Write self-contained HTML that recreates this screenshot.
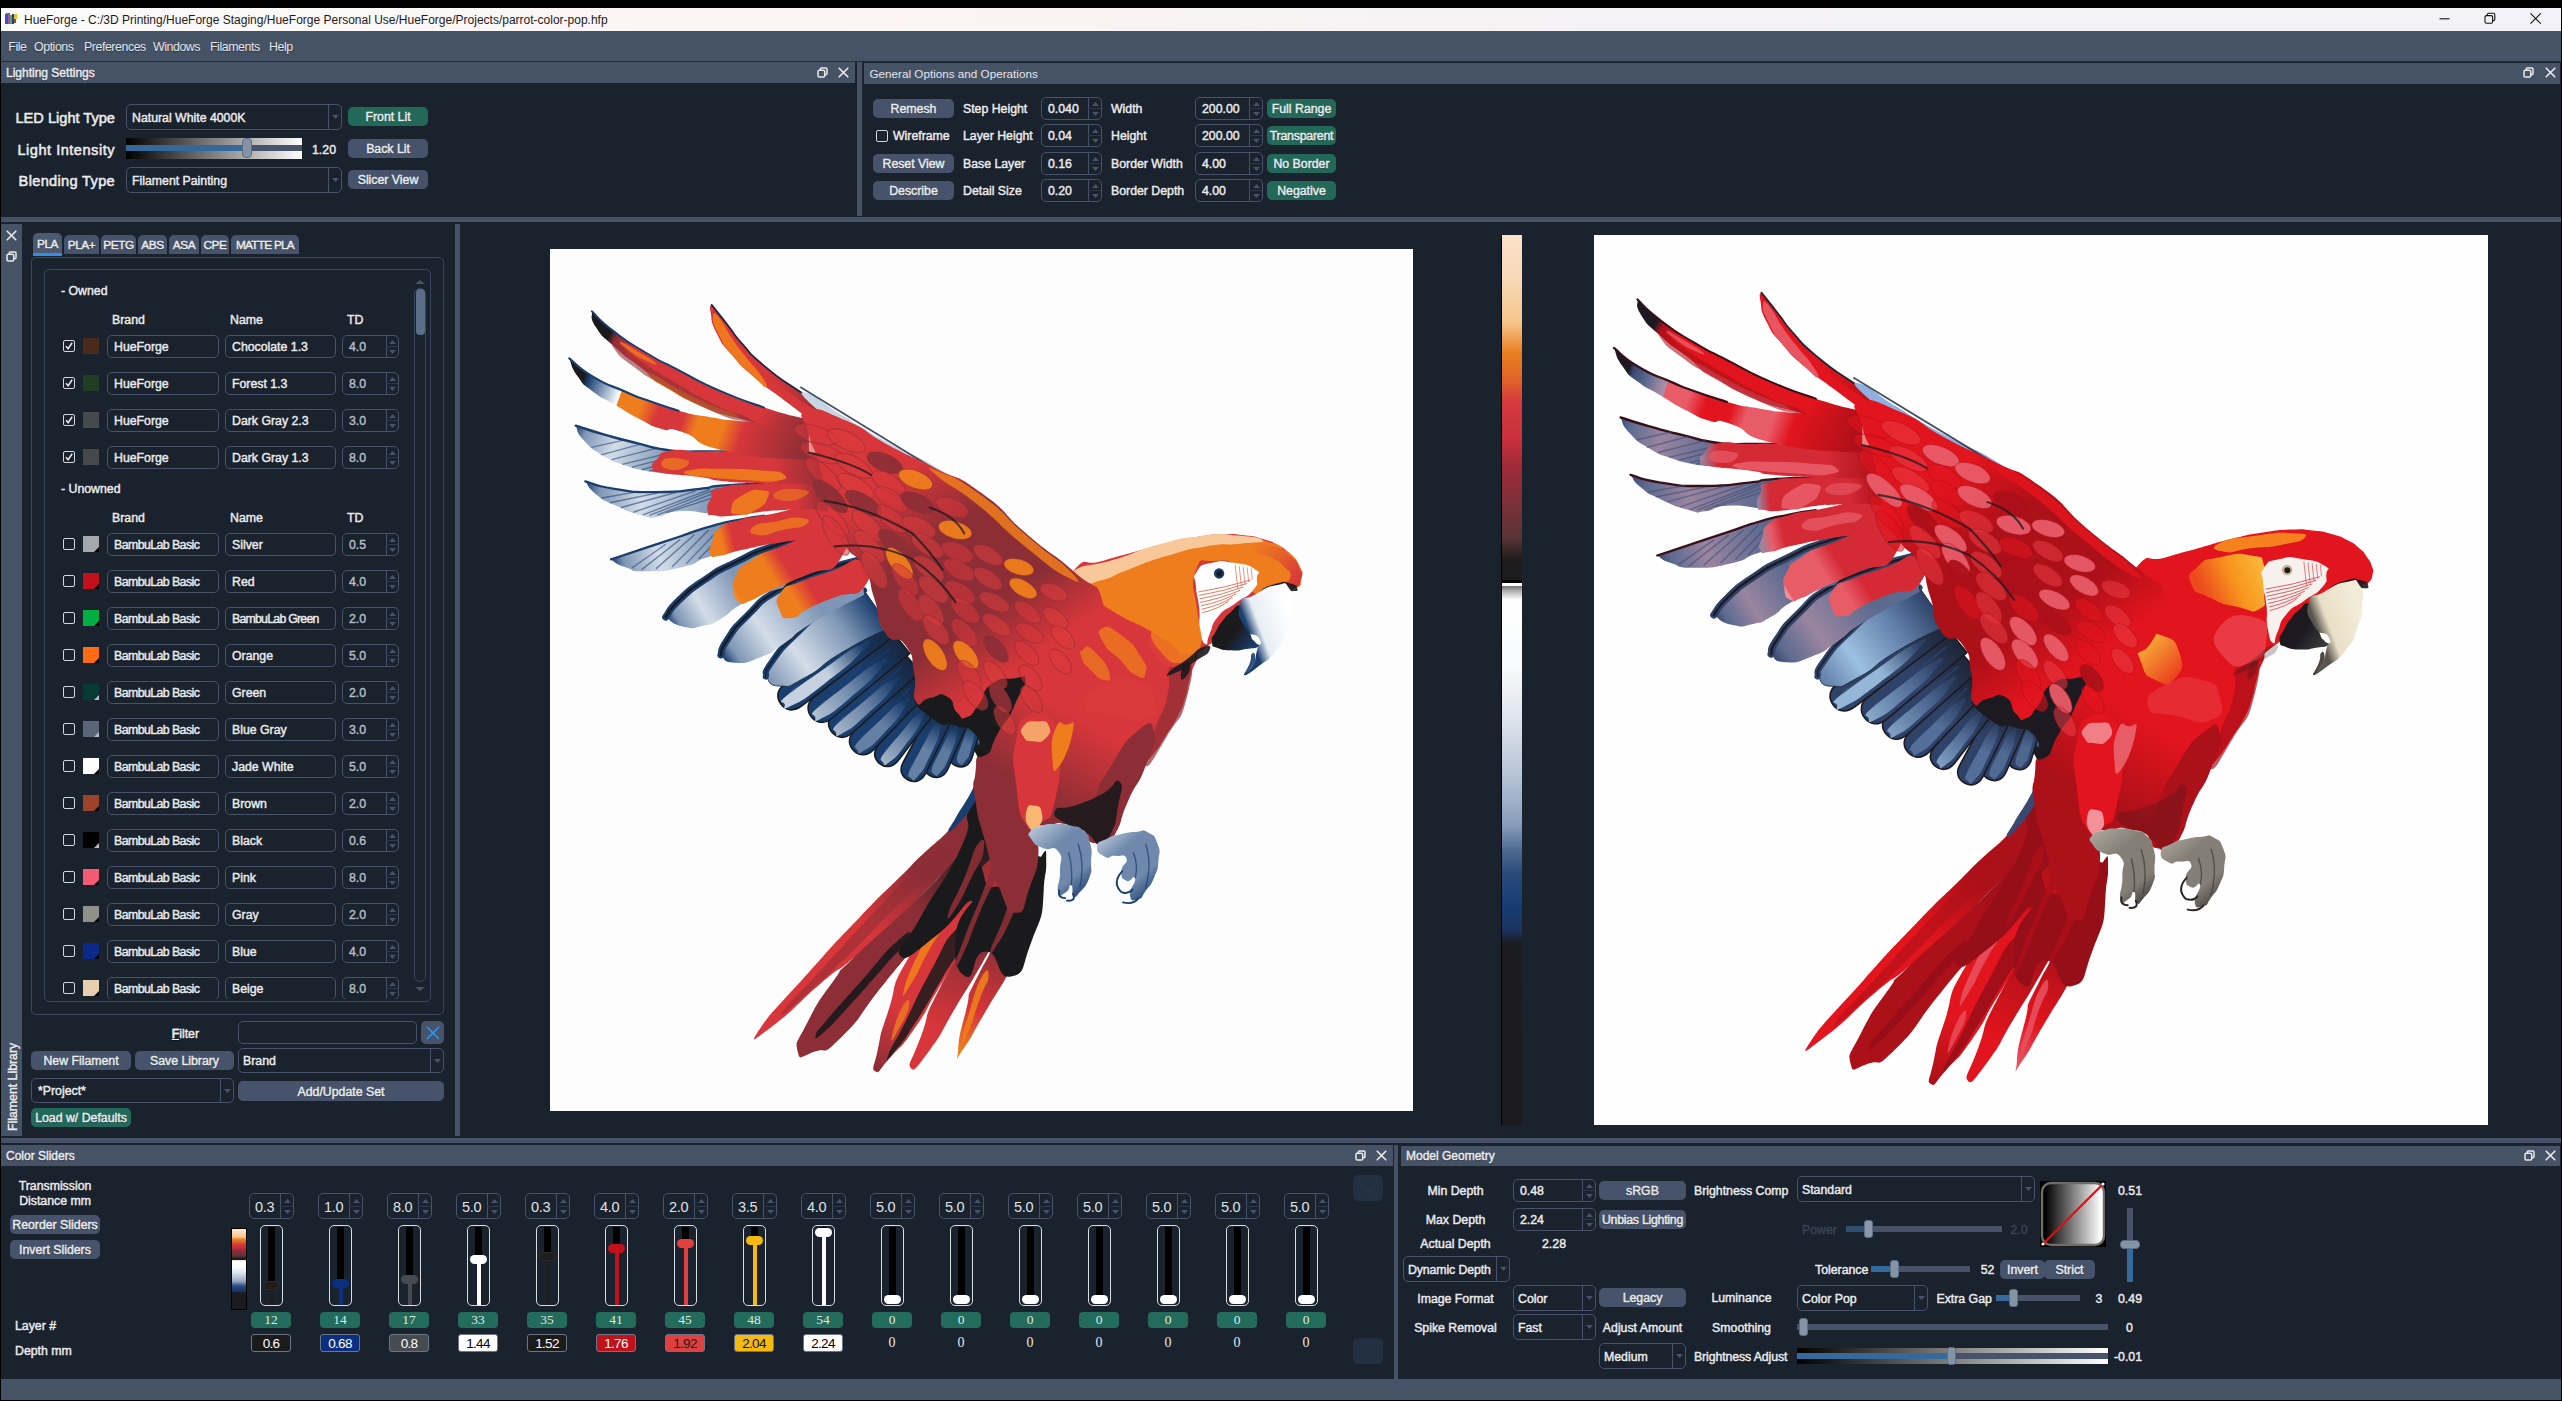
<!DOCTYPE html>
<html><head><meta charset="utf-8"><title>HueForge</title>
<style>
html,body{margin:0;padding:0;background:#000;}
body{width:2562px;height:1401px;position:relative;overflow:hidden;font-family:"Liberation Sans",sans-serif;font-size:12.3px;color:#e9ebee;}
.a{position:absolute;box-sizing:border-box;}
.t{white-space:nowrap;overflow:visible;}
.sb{-webkit-text-stroke:0.45px currentColor;text-shadow:0 1px 1px rgba(0,0,0,.55);}
.rg{font-weight:400;}
.btn{border-radius:5px;text-align:center;}
.big{font-size:14.6px;-webkit-text-stroke:0.55px currentColor;text-shadow:0 1px 1px rgba(0,0,0,.6);}
.serif{font-family:"Liberation Serif",serif;font-size:14px;}
.dim{color:#aab3c0;}
</style></head><body>

<div class="a " style="left:1px;top:8px;width:2560px;height:23px;background:linear-gradient(90deg,#fbfbfb 0%,#fbf4f2 35%,#f4f2f6 70%,#f2f2f8 100%);"></div>
<svg class="a" style="left:5px;top:13px" width="13" height="13" viewBox="0 0 13 13"><rect x="0" y="1" width="3" height="10" fill="#3a52c8"/><rect x="3" y="1" width="2" height="10" fill="#c93cc0"/><rect x="5" y="2" width="2" height="9" fill="#3bb54a"/><rect x="7" y="1" width="2" height="10" fill="#2a3a9a"/><rect x="9" y="1" width="3" height="5" fill="#e8c028"/><rect x="9" y="6" width="2" height="4" fill="#7a5a2a"/><rect x="1" y="0" width="4" height="2" fill="#6a6a7a"/></svg>
<div class="a t rg" style="left:24px;top:9px;width:700px;height:23px;line-height:23px;text-align:left;font-size:12px;color:#1b1b1b;">HueForge - C:/3D Printing/HueForge Staging/HueForge Personal Use/HueForge/Projects/parrot-color-pop.hfp</div>
<svg class="a" style="left:2439px;top:12px" width="110" height="14" viewBox="0 0 110 14" fill="none" stroke="#111" stroke-width="1.1"><path d="M0.5 6.8H10.5"/><path d="M48.3 3.8V2.6Q48.3 1.2 49.7 1.2H54.2Q55.8 1.2 55.8 2.8V7.2Q55.8 8.6 54.4 8.6H53.6"/><rect x="46" y="3.6" width="7.6" height="7.6" rx="1.5"/><path d="M91.5 1.3L101.8 11.6M101.8 1.3L91.5 11.6"/></svg>
<div class="a " style="left:1px;top:31px;width:2560px;height:31px;background:#465266;border-bottom:1px solid #232c39;"></div>
<div class="a t rg" style="left:8.3px;top:33px;width:80px;height:29px;line-height:29px;text-align:left;font-size:12.4px;letter-spacing:-0.45px;color:#e3e6ea;text-shadow:0 1px 1px rgba(0,0,0,.4);">File</div>
<div class="a t rg" style="left:34px;top:33px;width:80px;height:29px;line-height:29px;text-align:left;font-size:12.4px;letter-spacing:-0.45px;color:#e3e6ea;text-shadow:0 1px 1px rgba(0,0,0,.4);">Options</div>
<div class="a t rg" style="left:84px;top:33px;width:80px;height:29px;line-height:29px;text-align:left;font-size:12.4px;letter-spacing:-0.45px;color:#e3e6ea;text-shadow:0 1px 1px rgba(0,0,0,.4);">Preferences</div>
<div class="a t rg" style="left:153px;top:33px;width:80px;height:29px;line-height:29px;text-align:left;font-size:12.4px;letter-spacing:-0.45px;color:#e3e6ea;text-shadow:0 1px 1px rgba(0,0,0,.4);">Windows</div>
<div class="a t rg" style="left:210px;top:33px;width:80px;height:29px;line-height:29px;text-align:left;font-size:12.4px;letter-spacing:-0.45px;color:#e3e6ea;text-shadow:0 1px 1px rgba(0,0,0,.4);">Filaments</div>
<div class="a t rg" style="left:269px;top:33px;width:80px;height:29px;line-height:29px;text-align:left;font-size:12.4px;letter-spacing:-0.45px;color:#e3e6ea;text-shadow:0 1px 1px rgba(0,0,0,.4);">Help</div>
<div class="a " style="left:1px;top:62px;width:2560px;height:1317px;background:#1a222d;"></div>
<div class="a " style="left:1px;top:62px;width:854px;height:21px;background:#465266;"></div>
<div class="a t sb" style="left:6px;top:63px;width:200px;height:21px;line-height:21px;text-align:left;font-size:12px;">Lighting Settings</div>
<svg class="a" style="left:817.0px;top:66.5px" width="11" height="11" viewBox="0 0 11 11" fill="none" stroke="#e9ebee" stroke-width="1.5"><path d="M3.2 3.2V2.2Q3.2 1 4.4 1H8.8Q10 1 10 2.2V6.6Q10 7.8 8.8 7.8H7.8"/><rect x="1" y="3.3" width="6.7" height="6.7" rx="1.3"/></svg>
<svg class="a" style="left:838.0px;top:66.5px" width="11" height="11" viewBox="0 0 11 11" fill="none" stroke="#e9ebee" stroke-width="1.6" stroke-linecap="round"><path d="M1.2 1.2L9.8 9.8M9.8 1.2L1.2 9.8"/></svg>
<div class="a t big" style="left:15px;top:105px;width:100px;height:26px;line-height:26px;text-align:right;">LED Light Type</div>
<div class="a t big" style="left:5px;top:137px;width:110px;height:26px;line-height:26px;text-align:right;letter-spacing:0.5px;">Light Intensity</div>
<div class="a t big" style="left:5px;top:168px;width:110px;height:26px;line-height:26px;text-align:right;letter-spacing:0.32px;">Blending Type</div>
<div class="a " style="left:126px;top:104px;width:216px;height:26px;border:1px solid #46536a;border-radius:5px;box-sizing:border-box;"></div>
<div class="a " style="left:328px;top:105px;width:1px;height:24px;background:#46536a;"></div>
<svg class="a" style="left:331.5px;top:115.0px" width="7" height="4" viewBox="0 0 7 4"><path d="M0 0L3.5 4L7 0Z" fill="#46536a"/></svg>
<div class="a t sb" style="left:132px;top:105px;width:196px;height:26px;line-height:26px;text-align:left;letter-spacing:0px;">Natural White 4000K</div>
<div class="a " style="left:126px;top:167px;width:216px;height:26px;border:1px solid #46536a;border-radius:5px;box-sizing:border-box;"></div>
<div class="a " style="left:328px;top:168px;width:1px;height:24px;background:#46536a;"></div>
<svg class="a" style="left:331.5px;top:178.0px" width="7" height="4" viewBox="0 0 7 4"><path d="M0 0L3.5 4L7 0Z" fill="#46536a"/></svg>
<div class="a t sb" style="left:132px;top:168px;width:196px;height:26px;line-height:26px;text-align:left;">Filament Painting</div>
<div class="a t sb btn" style="left:348px;top:107px;width:80px;height:19px;line-height:21px;background:#22695a;">Front Lit</div>
<div class="a t sb btn" style="left:348px;top:139px;width:80px;height:19px;line-height:21px;background:#46536a;">Back Lit</div>
<div class="a t sb btn" style="left:348px;top:170px;width:80px;height:19px;line-height:21px;background:#46536a;">Slicer View</div>
<div class="a " style="left:126px;top:138px;width:176px;height:21px;background:linear-gradient(90deg,#000 0%,#fff 100%);"></div>
<div class="a " style="left:126px;top:145px;width:176px;height:6px;background:#46536a;"></div>
<div class="a " style="left:126px;top:145px;width:121px;height:6px;background:#36699b;"></div>
<div class="a " style="left:242px;top:138px;width:10px;height:20px;background:#8493a6;border:1px solid #5d6f87;border-radius:4px;"></div>
<div class="a t sb" style="left:306px;top:140px;width:36px;height:20px;line-height:20px;text-align:center;">1.20</div>
<div class="a " style="left:857px;top:62px;width:5px;height:154px;background:#465266;"></div>
<div class="a " style="left:864px;top:63px;width:1696px;height:21px;background:#465266;"></div>
<div class="a t rg" style="left:869.5px;top:63px;width:300px;height:21px;line-height:21px;text-align:left;font-size:11.7px;color:#e3e6ea;">General Options and Operations</div>
<svg class="a" style="left:2523.0px;top:67.0px" width="11" height="11" viewBox="0 0 11 11" fill="none" stroke="#e9ebee" stroke-width="1.5"><path d="M3.2 3.2V2.2Q3.2 1 4.4 1H8.8Q10 1 10 2.2V6.6Q10 7.8 8.8 7.8H7.8"/><rect x="1" y="3.3" width="6.7" height="6.7" rx="1.3"/></svg>
<svg class="a" style="left:2544.5px;top:67.0px" width="11" height="11" viewBox="0 0 11 11" fill="none" stroke="#e9ebee" stroke-width="1.6" stroke-linecap="round"><path d="M1.2 1.2L9.8 9.8M9.8 1.2L1.2 9.8"/></svg>
<div class="a t sb btn" style="left:873px;top:99px;width:81px;height:19px;line-height:21px;background:#46536a;">Remesh</div>
<div class="a " style="left:876px;top:130px;width:12px;height:12px;border:1.5px solid #d4d8de;border-radius:2px;"></div>
<div class="a t sb" style="left:893px;top:127px;width:70px;height:19px;line-height:19px;text-align:left;">Wireframe</div>
<div class="a t sb btn" style="left:873px;top:154px;width:81px;height:19px;line-height:21px;background:#46536a;">Reset View</div>
<div class="a t sb btn" style="left:873px;top:181px;width:81px;height:19px;line-height:21px;background:#46536a;">Describe</div>
<div class="a t sb" style="left:963px;top:100px;width:80px;height:19px;line-height:19px;text-align:left;">Step Height</div>
<div class="a " style="left:1041px;top:97px;width:61px;height:23px;border:1px solid #46536a;border-radius:5px;box-sizing:border-box;"></div>
<div class="a " style="left:1088px;top:98px;width:1px;height:21px;background:#46536a;"></div>
<div class="a " style="left:1088px;top:108px;width:13px;height:1px;background:#2c3747;"></div>
<svg class="a" style="left:1091.5px;top:101.67px" width="7" height="4" viewBox="0 0 7 4"><path d="M0 4L3.5 0L7 4Z" fill="#46536a"/></svg>
<svg class="a" style="left:1091.5px;top:111.78999999999999px" width="7" height="4" viewBox="0 0 7 4"><path d="M0 0L3.5 4L7 0Z" fill="#46536a"/></svg>
<div class="a t sb" style="left:1048px;top:98px;width:40px;height:23px;line-height:23px;text-align:left;">0.040</div>
<div class="a t sb" style="left:963px;top:127px;width:80px;height:19px;line-height:19px;text-align:left;">Layer Height</div>
<div class="a " style="left:1041px;top:124px;width:61px;height:23px;border:1px solid #46536a;border-radius:5px;box-sizing:border-box;"></div>
<div class="a " style="left:1088px;top:125px;width:1px;height:21px;background:#46536a;"></div>
<div class="a " style="left:1088px;top:135px;width:13px;height:1px;background:#2c3747;"></div>
<svg class="a" style="left:1091.5px;top:128.67px" width="7" height="4" viewBox="0 0 7 4"><path d="M0 4L3.5 0L7 4Z" fill="#46536a"/></svg>
<svg class="a" style="left:1091.5px;top:138.79px" width="7" height="4" viewBox="0 0 7 4"><path d="M0 0L3.5 4L7 0Z" fill="#46536a"/></svg>
<div class="a t sb" style="left:1048px;top:125px;width:40px;height:23px;line-height:23px;text-align:left;">0.04</div>
<div class="a t sb" style="left:963px;top:155px;width:80px;height:19px;line-height:19px;text-align:left;">Base Layer</div>
<div class="a " style="left:1041px;top:152px;width:61px;height:23px;border:1px solid #46536a;border-radius:5px;box-sizing:border-box;"></div>
<div class="a " style="left:1088px;top:153px;width:1px;height:21px;background:#46536a;"></div>
<div class="a " style="left:1088px;top:163px;width:13px;height:1px;background:#2c3747;"></div>
<svg class="a" style="left:1091.5px;top:156.67px" width="7" height="4" viewBox="0 0 7 4"><path d="M0 4L3.5 0L7 4Z" fill="#46536a"/></svg>
<svg class="a" style="left:1091.5px;top:166.79px" width="7" height="4" viewBox="0 0 7 4"><path d="M0 0L3.5 4L7 0Z" fill="#46536a"/></svg>
<div class="a t sb" style="left:1048px;top:153px;width:40px;height:23px;line-height:23px;text-align:left;">0.16</div>
<div class="a t sb" style="left:963px;top:182px;width:80px;height:19px;line-height:19px;text-align:left;">Detail Size</div>
<div class="a " style="left:1041px;top:179px;width:61px;height:23px;border:1px solid #46536a;border-radius:5px;box-sizing:border-box;"></div>
<div class="a " style="left:1088px;top:180px;width:1px;height:21px;background:#46536a;"></div>
<div class="a " style="left:1088px;top:190px;width:13px;height:1px;background:#2c3747;"></div>
<svg class="a" style="left:1091.5px;top:183.67px" width="7" height="4" viewBox="0 0 7 4"><path d="M0 4L3.5 0L7 4Z" fill="#46536a"/></svg>
<svg class="a" style="left:1091.5px;top:193.79px" width="7" height="4" viewBox="0 0 7 4"><path d="M0 0L3.5 4L7 0Z" fill="#46536a"/></svg>
<div class="a t sb" style="left:1048px;top:180px;width:40px;height:23px;line-height:23px;text-align:left;">0.20</div>
<div class="a t sb" style="left:1111px;top:100px;width:90px;height:19px;line-height:19px;text-align:left;">Width</div>
<div class="a " style="left:1195px;top:97px;width:68px;height:23px;border:1px solid #46536a;border-radius:5px;box-sizing:border-box;"></div>
<div class="a " style="left:1249px;top:98px;width:1px;height:21px;background:#46536a;"></div>
<div class="a " style="left:1249px;top:108px;width:13px;height:1px;background:#2c3747;"></div>
<svg class="a" style="left:1252.5px;top:101.67px" width="7" height="4" viewBox="0 0 7 4"><path d="M0 4L3.5 0L7 4Z" fill="#46536a"/></svg>
<svg class="a" style="left:1252.5px;top:111.78999999999999px" width="7" height="4" viewBox="0 0 7 4"><path d="M0 0L3.5 4L7 0Z" fill="#46536a"/></svg>
<div class="a t sb" style="left:1202px;top:98px;width:47px;height:23px;line-height:23px;text-align:left;">200.00</div>
<div class="a t sb btn" style="left:1267px;top:99px;width:69px;height:19px;line-height:21px;background:#22695a;">Full Range</div>
<div class="a t sb" style="left:1111px;top:127px;width:90px;height:19px;line-height:19px;text-align:left;">Height</div>
<div class="a " style="left:1195px;top:124px;width:68px;height:23px;border:1px solid #46536a;border-radius:5px;box-sizing:border-box;"></div>
<div class="a " style="left:1249px;top:125px;width:1px;height:21px;background:#46536a;"></div>
<div class="a " style="left:1249px;top:135px;width:13px;height:1px;background:#2c3747;"></div>
<svg class="a" style="left:1252.5px;top:128.67px" width="7" height="4" viewBox="0 0 7 4"><path d="M0 4L3.5 0L7 4Z" fill="#46536a"/></svg>
<svg class="a" style="left:1252.5px;top:138.79px" width="7" height="4" viewBox="0 0 7 4"><path d="M0 0L3.5 4L7 0Z" fill="#46536a"/></svg>
<div class="a t sb" style="left:1202px;top:125px;width:47px;height:23px;line-height:23px;text-align:left;">200.00</div>
<div class="a t sb btn" style="left:1267px;top:126px;width:69px;height:19px;line-height:21px;background:#22695a;letter-spacing:-0.2px;">Transparent</div>
<div class="a t sb" style="left:1111px;top:155px;width:90px;height:19px;line-height:19px;text-align:left;">Border Width</div>
<div class="a " style="left:1195px;top:152px;width:68px;height:23px;border:1px solid #46536a;border-radius:5px;box-sizing:border-box;"></div>
<div class="a " style="left:1249px;top:153px;width:1px;height:21px;background:#46536a;"></div>
<div class="a " style="left:1249px;top:163px;width:13px;height:1px;background:#2c3747;"></div>
<svg class="a" style="left:1252.5px;top:156.67px" width="7" height="4" viewBox="0 0 7 4"><path d="M0 4L3.5 0L7 4Z" fill="#46536a"/></svg>
<svg class="a" style="left:1252.5px;top:166.79px" width="7" height="4" viewBox="0 0 7 4"><path d="M0 0L3.5 4L7 0Z" fill="#46536a"/></svg>
<div class="a t sb" style="left:1202px;top:153px;width:47px;height:23px;line-height:23px;text-align:left;">4.00</div>
<div class="a t sb btn" style="left:1267px;top:154px;width:69px;height:19px;line-height:21px;background:#22695a;">No Border</div>
<div class="a t sb" style="left:1111px;top:182px;width:90px;height:19px;line-height:19px;text-align:left;">Border Depth</div>
<div class="a " style="left:1195px;top:179px;width:68px;height:23px;border:1px solid #46536a;border-radius:5px;box-sizing:border-box;"></div>
<div class="a " style="left:1249px;top:180px;width:1px;height:21px;background:#46536a;"></div>
<div class="a " style="left:1249px;top:190px;width:13px;height:1px;background:#2c3747;"></div>
<svg class="a" style="left:1252.5px;top:183.67px" width="7" height="4" viewBox="0 0 7 4"><path d="M0 4L3.5 0L7 4Z" fill="#46536a"/></svg>
<svg class="a" style="left:1252.5px;top:193.79px" width="7" height="4" viewBox="0 0 7 4"><path d="M0 0L3.5 4L7 0Z" fill="#46536a"/></svg>
<div class="a t sb" style="left:1202px;top:180px;width:47px;height:23px;line-height:23px;text-align:left;">4.00</div>
<div class="a t sb btn" style="left:1267px;top:181px;width:69px;height:19px;line-height:21px;background:#22695a;">Negative</div>
<div class="a " style="left:1px;top:217px;width:2560px;height:5px;background:#465266;"></div>
<div class="a " style="left:1px;top:224px;width:21px;height:912px;background:#465266;"></div>
<svg class="a" style="left:5.5px;top:229.5px" width="11" height="11" viewBox="0 0 11 11" fill="none" stroke="#e9ebee" stroke-width="1.6" stroke-linecap="round"><path d="M1.2 1.2L9.8 9.8M9.8 1.2L1.2 9.8"/></svg>
<svg class="a" style="left:5.5px;top:250.5px" width="11" height="11" viewBox="0 0 11 11" fill="none" stroke="#e9ebee" stroke-width="1.5"><path d="M3.2 3.2V2.2Q3.2 1 4.4 1H8.8Q10 1 10 2.2V6.6Q10 7.8 8.8 7.8H7.8"/><rect x="1" y="3.3" width="6.7" height="6.7" rx="1.3"/></svg>
<div class="a t sb" style="left:2.5px;top:1131px;width:92px;height:21px;line-height:21px;transform-origin:0 0;transform:rotate(-90deg);font-size:12.3px;">Filament Library</div>
<div class="a " style="left:455px;top:224px;width:5px;height:912px;background:#465266;"></div>
<div class="a " style="left:33px;top:233px;width:29px;height:23px;background:#4b5a70;border-radius:5px 5px 0 0;border-bottom:3px solid #2f8fe6;"></div>
<div class="a t sb" style="left:33px;top:234px;width:29px;height:20px;line-height:20px;text-align:center;letter-spacing:-0.4px;font-size:11.8px;">PLA</div>
<div class="a " style="left:64px;top:235px;width:35px;height:19px;background:#46536a;border-radius:5px 5px 0 0;"></div>
<div class="a t sb" style="left:64px;top:236px;width:35px;height:19px;line-height:19px;text-align:center;font-size:11.8px;letter-spacing:-0.45px;">PLA+</div>
<div class="a " style="left:101px;top:235px;width:35px;height:19px;background:#46536a;border-radius:5px 5px 0 0;"></div>
<div class="a t sb" style="left:101px;top:236px;width:35px;height:19px;line-height:19px;text-align:center;font-size:11.8px;letter-spacing:-0.45px;">PETG</div>
<div class="a " style="left:138px;top:235px;width:29px;height:19px;background:#46536a;border-radius:5px 5px 0 0;"></div>
<div class="a t sb" style="left:138px;top:236px;width:29px;height:19px;line-height:19px;text-align:center;font-size:11.8px;letter-spacing:-0.45px;">ABS</div>
<div class="a " style="left:169px;top:235px;width:30px;height:19px;background:#46536a;border-radius:5px 5px 0 0;"></div>
<div class="a t sb" style="left:169px;top:236px;width:30px;height:19px;line-height:19px;text-align:center;font-size:11.8px;letter-spacing:-0.45px;">ASA</div>
<div class="a " style="left:201px;top:235px;width:28px;height:19px;background:#46536a;border-radius:5px 5px 0 0;"></div>
<div class="a t sb" style="left:201px;top:236px;width:28px;height:19px;line-height:19px;text-align:center;font-size:11.8px;letter-spacing:-0.45px;">CPE</div>
<div class="a " style="left:231px;top:235px;width:68px;height:19px;background:#46536a;border-radius:5px 5px 0 0;"></div>
<div class="a t sb" style="left:231px;top:236px;width:68px;height:19px;line-height:19px;text-align:center;font-size:11.8px;letter-spacing:-0.75px;">MATTE PLA</div>
<div class="a " style="left:31px;top:257px;width:413px;height:758px;border:1px solid #3a475a;border-radius:5px;"></div>
<div class="a " style="left:44px;top:269px;width:387px;height:733px;border:1px solid #3a475a;border-radius:5px;"></div>
<svg class="a" style="left:415.0px;top:279.5px" width="10" height="4" viewBox="0 0 10 4"><path d="M0 4L5.0 0L10 4Z" fill="#46536a"/></svg>
<div class="a " style="left:414px;top:288px;width:12px;height:694px;border:1px solid #3a475a;border-radius:6px;"></div>
<div class="a " style="left:416px;top:289px;width:9px;height:46px;background:#5b6e88;border-radius:4px;"></div>
<svg class="a" style="left:415.0px;top:987.0px" width="10" height="4" viewBox="0 0 10 4"><path d="M0 0L5.0 4L10 0Z" fill="#46536a"/></svg>
<div class="a" style="left:0;top:0;width:460px;height:999px;overflow:hidden;">
<div class="a t sb" style="left:61px;top:282px;width:100px;height:19px;line-height:19px;text-align:left;">- Owned</div>
<div class="a t sb" style="left:112px;top:311px;width:60px;height:19px;line-height:19px;text-align:left;">Brand</div>
<div class="a t sb" style="left:230px;top:311px;width:60px;height:19px;line-height:19px;text-align:left;">Name</div>
<div class="a t sb" style="left:347px;top:311px;width:60px;height:19px;line-height:19px;text-align:left;">TD</div>
<div class="a " style="left:63px;top:340px;width:12px;height:12px;border:1.4px solid #d4d8de;border-radius:2px;"></div>
<svg class="a" style="left:63px;top:340px" width="12" height="12" viewBox="0 0 12 12" fill="none" stroke="#e9ebee" stroke-width="1.5"><path d="M3 6.2L5.1 8.7L9.2 2.8"/></svg>
<div class="a " style="left:83px;top:338px;width:16px;height:16px;background:#4a2a1b;"></div>
<div class="a " style="left:107px;top:335px;width:112px;height:23px;border:1px solid #46536a;border-radius:5px;"></div>
<div class="a t sb" style="left:114px;top:336px;width:100px;height:23px;line-height:23px;text-align:left;">HueForge</div>
<div class="a " style="left:225px;top:335px;width:111px;height:23px;border:1px solid #46536a;border-radius:5px;"></div>
<div class="a t sb" style="left:232px;top:336px;width:100px;height:23px;line-height:23px;text-align:left;">Chocolate 1.3</div>
<div class="a " style="left:342px;top:335px;width:57px;height:23px;border:1px solid #46536a;border-radius:5px;box-sizing:border-box;"></div>
<div class="a " style="left:386px;top:336px;width:1px;height:21px;background:#46536a;"></div>
<div class="a " style="left:386px;top:346px;width:12px;height:1px;background:#2c3747;"></div>
<svg class="a" style="left:389.0px;top:339.67px" width="7" height="4" viewBox="0 0 7 4"><path d="M0 4L3.5 0L7 4Z" fill="#46536a"/></svg>
<svg class="a" style="left:389.0px;top:349.79px" width="7" height="4" viewBox="0 0 7 4"><path d="M0 0L3.5 4L7 0Z" fill="#46536a"/></svg>
<div class="a t sb" style="left:349px;top:336px;width:37px;height:23px;line-height:23px;text-align:left;color:#b4bcc8;">4.0</div>
<div class="a " style="left:63px;top:377px;width:12px;height:12px;border:1.4px solid #d4d8de;border-radius:2px;"></div>
<svg class="a" style="left:63px;top:377px" width="12" height="12" viewBox="0 0 12 12" fill="none" stroke="#e9ebee" stroke-width="1.5"><path d="M3 6.2L5.1 8.7L9.2 2.8"/></svg>
<div class="a " style="left:83px;top:375px;width:16px;height:16px;background:#1f3f25;"></div>
<div class="a " style="left:107px;top:372px;width:112px;height:23px;border:1px solid #46536a;border-radius:5px;"></div>
<div class="a t sb" style="left:114px;top:373px;width:100px;height:23px;line-height:23px;text-align:left;">HueForge</div>
<div class="a " style="left:225px;top:372px;width:111px;height:23px;border:1px solid #46536a;border-radius:5px;"></div>
<div class="a t sb" style="left:232px;top:373px;width:100px;height:23px;line-height:23px;text-align:left;">Forest 1.3</div>
<div class="a " style="left:342px;top:372px;width:57px;height:23px;border:1px solid #46536a;border-radius:5px;box-sizing:border-box;"></div>
<div class="a " style="left:386px;top:373px;width:1px;height:21px;background:#46536a;"></div>
<div class="a " style="left:386px;top:383px;width:12px;height:1px;background:#2c3747;"></div>
<svg class="a" style="left:389.0px;top:376.67px" width="7" height="4" viewBox="0 0 7 4"><path d="M0 4L3.5 0L7 4Z" fill="#46536a"/></svg>
<svg class="a" style="left:389.0px;top:386.79px" width="7" height="4" viewBox="0 0 7 4"><path d="M0 0L3.5 4L7 0Z" fill="#46536a"/></svg>
<div class="a t sb" style="left:349px;top:373px;width:37px;height:23px;line-height:23px;text-align:left;color:#b4bcc8;">8.0</div>
<div class="a " style="left:63px;top:414px;width:12px;height:12px;border:1.4px solid #d4d8de;border-radius:2px;"></div>
<svg class="a" style="left:63px;top:414px" width="12" height="12" viewBox="0 0 12 12" fill="none" stroke="#e9ebee" stroke-width="1.5"><path d="M3 6.2L5.1 8.7L9.2 2.8"/></svg>
<div class="a " style="left:83px;top:412px;width:16px;height:16px;background:#45484d;"></div>
<div class="a " style="left:107px;top:409px;width:112px;height:23px;border:1px solid #46536a;border-radius:5px;"></div>
<div class="a t sb" style="left:114px;top:410px;width:100px;height:23px;line-height:23px;text-align:left;">HueForge</div>
<div class="a " style="left:225px;top:409px;width:111px;height:23px;border:1px solid #46536a;border-radius:5px;"></div>
<div class="a t sb" style="left:232px;top:410px;width:100px;height:23px;line-height:23px;text-align:left;">Dark Gray 2.3</div>
<div class="a " style="left:342px;top:409px;width:57px;height:23px;border:1px solid #46536a;border-radius:5px;box-sizing:border-box;"></div>
<div class="a " style="left:386px;top:410px;width:1px;height:21px;background:#46536a;"></div>
<div class="a " style="left:386px;top:420px;width:12px;height:1px;background:#2c3747;"></div>
<svg class="a" style="left:389.0px;top:413.67px" width="7" height="4" viewBox="0 0 7 4"><path d="M0 4L3.5 0L7 4Z" fill="#46536a"/></svg>
<svg class="a" style="left:389.0px;top:423.79px" width="7" height="4" viewBox="0 0 7 4"><path d="M0 0L3.5 4L7 0Z" fill="#46536a"/></svg>
<div class="a t sb" style="left:349px;top:410px;width:37px;height:23px;line-height:23px;text-align:left;color:#b4bcc8;">3.0</div>
<div class="a " style="left:63px;top:451px;width:12px;height:12px;border:1.4px solid #d4d8de;border-radius:2px;"></div>
<svg class="a" style="left:63px;top:451px" width="12" height="12" viewBox="0 0 12 12" fill="none" stroke="#e9ebee" stroke-width="1.5"><path d="M3 6.2L5.1 8.7L9.2 2.8"/></svg>
<div class="a " style="left:83px;top:449px;width:16px;height:16px;background:#45484d;"></div>
<div class="a " style="left:107px;top:446px;width:112px;height:23px;border:1px solid #46536a;border-radius:5px;"></div>
<div class="a t sb" style="left:114px;top:447px;width:100px;height:23px;line-height:23px;text-align:left;">HueForge</div>
<div class="a " style="left:225px;top:446px;width:111px;height:23px;border:1px solid #46536a;border-radius:5px;"></div>
<div class="a t sb" style="left:232px;top:447px;width:100px;height:23px;line-height:23px;text-align:left;">Dark Gray 1.3</div>
<div class="a " style="left:342px;top:446px;width:57px;height:23px;border:1px solid #46536a;border-radius:5px;box-sizing:border-box;"></div>
<div class="a " style="left:386px;top:447px;width:1px;height:21px;background:#46536a;"></div>
<div class="a " style="left:386px;top:457px;width:12px;height:1px;background:#2c3747;"></div>
<svg class="a" style="left:389.0px;top:450.67px" width="7" height="4" viewBox="0 0 7 4"><path d="M0 4L3.5 0L7 4Z" fill="#46536a"/></svg>
<svg class="a" style="left:389.0px;top:460.79px" width="7" height="4" viewBox="0 0 7 4"><path d="M0 0L3.5 4L7 0Z" fill="#46536a"/></svg>
<div class="a t sb" style="left:349px;top:447px;width:37px;height:23px;line-height:23px;text-align:left;color:#b4bcc8;">8.0</div>
<div class="a t sb" style="left:61px;top:480px;width:100px;height:19px;line-height:19px;text-align:left;">- Unowned</div>
<div class="a t sb" style="left:112px;top:509px;width:60px;height:19px;line-height:19px;text-align:left;">Brand</div>
<div class="a t sb" style="left:230px;top:509px;width:60px;height:19px;line-height:19px;text-align:left;">Name</div>
<div class="a t sb" style="left:347px;top:509px;width:60px;height:19px;line-height:19px;text-align:left;">TD</div>
<div class="a " style="left:63px;top:538px;width:12px;height:12px;border:1.4px solid #d4d8de;border-radius:2px;"></div>
<div class="a " style="left:83px;top:536px;width:16px;height:16px;background:#a6a9aa;"><svg style="position:absolute;right:0;bottom:0" width="5" height="5" viewBox="0 0 5 5"><path d="M5 0V5H0Z" fill="#000"/></svg></div>
<div class="a " style="left:107px;top:533px;width:112px;height:23px;border:1px solid #46536a;border-radius:5px;"></div>
<div class="a t sb" style="left:114px;top:534px;width:100px;height:23px;line-height:23px;text-align:left;letter-spacing:-0.55px;">BambuLab Basic</div>
<div class="a " style="left:225px;top:533px;width:111px;height:23px;border:1px solid #46536a;border-radius:5px;"></div>
<div class="a t sb" style="left:232px;top:534px;width:100px;height:23px;line-height:23px;text-align:left;">Silver</div>
<div class="a " style="left:342px;top:533px;width:57px;height:23px;border:1px solid #46536a;border-radius:5px;box-sizing:border-box;"></div>
<div class="a " style="left:386px;top:534px;width:1px;height:21px;background:#46536a;"></div>
<div class="a " style="left:386px;top:544px;width:12px;height:1px;background:#2c3747;"></div>
<svg class="a" style="left:389.0px;top:537.67px" width="7" height="4" viewBox="0 0 7 4"><path d="M0 4L3.5 0L7 4Z" fill="#46536a"/></svg>
<svg class="a" style="left:389.0px;top:547.79px" width="7" height="4" viewBox="0 0 7 4"><path d="M0 0L3.5 4L7 0Z" fill="#46536a"/></svg>
<div class="a t sb" style="left:349px;top:534px;width:37px;height:23px;line-height:23px;text-align:left;color:#b4bcc8;">0.5</div>
<div class="a " style="left:63px;top:575px;width:12px;height:12px;border:1.4px solid #d4d8de;border-radius:2px;"></div>
<div class="a " style="left:83px;top:573px;width:16px;height:16px;background:#c1121c;"><svg style="position:absolute;right:0;bottom:0" width="5" height="5" viewBox="0 0 5 5"><path d="M5 0V5H0Z" fill="#000"/></svg></div>
<div class="a " style="left:107px;top:570px;width:112px;height:23px;border:1px solid #46536a;border-radius:5px;"></div>
<div class="a t sb" style="left:114px;top:571px;width:100px;height:23px;line-height:23px;text-align:left;letter-spacing:-0.55px;">BambuLab Basic</div>
<div class="a " style="left:225px;top:570px;width:111px;height:23px;border:1px solid #46536a;border-radius:5px;"></div>
<div class="a t sb" style="left:232px;top:571px;width:100px;height:23px;line-height:23px;text-align:left;">Red</div>
<div class="a " style="left:342px;top:570px;width:57px;height:23px;border:1px solid #46536a;border-radius:5px;box-sizing:border-box;"></div>
<div class="a " style="left:386px;top:571px;width:1px;height:21px;background:#46536a;"></div>
<div class="a " style="left:386px;top:581px;width:12px;height:1px;background:#2c3747;"></div>
<svg class="a" style="left:389.0px;top:574.67px" width="7" height="4" viewBox="0 0 7 4"><path d="M0 4L3.5 0L7 4Z" fill="#46536a"/></svg>
<svg class="a" style="left:389.0px;top:584.79px" width="7" height="4" viewBox="0 0 7 4"><path d="M0 0L3.5 4L7 0Z" fill="#46536a"/></svg>
<div class="a t sb" style="left:349px;top:571px;width:37px;height:23px;line-height:23px;text-align:left;color:#b4bcc8;">4.0</div>
<div class="a " style="left:63px;top:612px;width:12px;height:12px;border:1.4px solid #d4d8de;border-radius:2px;"></div>
<div class="a " style="left:83px;top:610px;width:16px;height:16px;background:#00ae42;"><svg style="position:absolute;right:0;bottom:0" width="5" height="5" viewBox="0 0 5 5"><path d="M5 0V5H0Z" fill="#000"/></svg></div>
<div class="a " style="left:107px;top:607px;width:112px;height:23px;border:1px solid #46536a;border-radius:5px;"></div>
<div class="a t sb" style="left:114px;top:608px;width:100px;height:23px;line-height:23px;text-align:left;letter-spacing:-0.55px;">BambuLab Basic</div>
<div class="a " style="left:225px;top:607px;width:111px;height:23px;border:1px solid #46536a;border-radius:5px;"></div>
<div class="a t sb" style="left:232px;top:608px;width:100px;height:23px;line-height:23px;text-align:left;letter-spacing:-0.75px;">BambuLab Green</div>
<div class="a " style="left:342px;top:607px;width:57px;height:23px;border:1px solid #46536a;border-radius:5px;box-sizing:border-box;"></div>
<div class="a " style="left:386px;top:608px;width:1px;height:21px;background:#46536a;"></div>
<div class="a " style="left:386px;top:618px;width:12px;height:1px;background:#2c3747;"></div>
<svg class="a" style="left:389.0px;top:611.67px" width="7" height="4" viewBox="0 0 7 4"><path d="M0 4L3.5 0L7 4Z" fill="#46536a"/></svg>
<svg class="a" style="left:389.0px;top:621.79px" width="7" height="4" viewBox="0 0 7 4"><path d="M0 0L3.5 4L7 0Z" fill="#46536a"/></svg>
<div class="a t sb" style="left:349px;top:608px;width:37px;height:23px;line-height:23px;text-align:left;color:#b4bcc8;">2.0</div>
<div class="a " style="left:63px;top:649px;width:12px;height:12px;border:1.4px solid #d4d8de;border-radius:2px;"></div>
<div class="a " style="left:83px;top:647px;width:16px;height:16px;background:#ff6a13;"><svg style="position:absolute;right:0;bottom:0" width="5" height="5" viewBox="0 0 5 5"><path d="M5 0V5H0Z" fill="#000"/></svg></div>
<div class="a " style="left:107px;top:644px;width:112px;height:23px;border:1px solid #46536a;border-radius:5px;"></div>
<div class="a t sb" style="left:114px;top:645px;width:100px;height:23px;line-height:23px;text-align:left;letter-spacing:-0.55px;">BambuLab Basic</div>
<div class="a " style="left:225px;top:644px;width:111px;height:23px;border:1px solid #46536a;border-radius:5px;"></div>
<div class="a t sb" style="left:232px;top:645px;width:100px;height:23px;line-height:23px;text-align:left;">Orange</div>
<div class="a " style="left:342px;top:644px;width:57px;height:23px;border:1px solid #46536a;border-radius:5px;box-sizing:border-box;"></div>
<div class="a " style="left:386px;top:645px;width:1px;height:21px;background:#46536a;"></div>
<div class="a " style="left:386px;top:655px;width:12px;height:1px;background:#2c3747;"></div>
<svg class="a" style="left:389.0px;top:648.67px" width="7" height="4" viewBox="0 0 7 4"><path d="M0 4L3.5 0L7 4Z" fill="#46536a"/></svg>
<svg class="a" style="left:389.0px;top:658.79px" width="7" height="4" viewBox="0 0 7 4"><path d="M0 0L3.5 4L7 0Z" fill="#46536a"/></svg>
<div class="a t sb" style="left:349px;top:645px;width:37px;height:23px;line-height:23px;text-align:left;color:#b4bcc8;">5.0</div>
<div class="a " style="left:63px;top:686px;width:12px;height:12px;border:1.4px solid #d4d8de;border-radius:2px;"></div>
<div class="a " style="left:83px;top:684px;width:16px;height:16px;background:#063b34;"><svg style="position:absolute;right:0;bottom:0" width="5" height="5" viewBox="0 0 5 5"><path d="M5 0V5H0Z" fill="#b8bcc0"/></svg></div>
<div class="a " style="left:107px;top:681px;width:112px;height:23px;border:1px solid #46536a;border-radius:5px;"></div>
<div class="a t sb" style="left:114px;top:682px;width:100px;height:23px;line-height:23px;text-align:left;letter-spacing:-0.55px;">BambuLab Basic</div>
<div class="a " style="left:225px;top:681px;width:111px;height:23px;border:1px solid #46536a;border-radius:5px;"></div>
<div class="a t sb" style="left:232px;top:682px;width:100px;height:23px;line-height:23px;text-align:left;">Green</div>
<div class="a " style="left:342px;top:681px;width:57px;height:23px;border:1px solid #46536a;border-radius:5px;box-sizing:border-box;"></div>
<div class="a " style="left:386px;top:682px;width:1px;height:21px;background:#46536a;"></div>
<div class="a " style="left:386px;top:692px;width:12px;height:1px;background:#2c3747;"></div>
<svg class="a" style="left:389.0px;top:685.67px" width="7" height="4" viewBox="0 0 7 4"><path d="M0 4L3.5 0L7 4Z" fill="#46536a"/></svg>
<svg class="a" style="left:389.0px;top:695.79px" width="7" height="4" viewBox="0 0 7 4"><path d="M0 0L3.5 4L7 0Z" fill="#46536a"/></svg>
<div class="a t sb" style="left:349px;top:682px;width:37px;height:23px;line-height:23px;text-align:left;color:#b4bcc8;">2.0</div>
<div class="a " style="left:63px;top:723px;width:12px;height:12px;border:1.4px solid #d4d8de;border-radius:2px;"></div>
<div class="a " style="left:83px;top:721px;width:16px;height:16px;background:#5b6579;"><svg style="position:absolute;right:0;bottom:0" width="5" height="5" viewBox="0 0 5 5"><path d="M5 0V5H0Z" fill="#b8bcc0"/></svg></div>
<div class="a " style="left:107px;top:718px;width:112px;height:23px;border:1px solid #46536a;border-radius:5px;"></div>
<div class="a t sb" style="left:114px;top:719px;width:100px;height:23px;line-height:23px;text-align:left;letter-spacing:-0.55px;">BambuLab Basic</div>
<div class="a " style="left:225px;top:718px;width:111px;height:23px;border:1px solid #46536a;border-radius:5px;"></div>
<div class="a t sb" style="left:232px;top:719px;width:100px;height:23px;line-height:23px;text-align:left;">Blue Gray</div>
<div class="a " style="left:342px;top:718px;width:57px;height:23px;border:1px solid #46536a;border-radius:5px;box-sizing:border-box;"></div>
<div class="a " style="left:386px;top:719px;width:1px;height:21px;background:#46536a;"></div>
<div class="a " style="left:386px;top:729px;width:12px;height:1px;background:#2c3747;"></div>
<svg class="a" style="left:389.0px;top:722.67px" width="7" height="4" viewBox="0 0 7 4"><path d="M0 4L3.5 0L7 4Z" fill="#46536a"/></svg>
<svg class="a" style="left:389.0px;top:732.79px" width="7" height="4" viewBox="0 0 7 4"><path d="M0 0L3.5 4L7 0Z" fill="#46536a"/></svg>
<div class="a t sb" style="left:349px;top:719px;width:37px;height:23px;line-height:23px;text-align:left;color:#b4bcc8;">3.0</div>
<div class="a " style="left:63px;top:760px;width:12px;height:12px;border:1.4px solid #d4d8de;border-radius:2px;"></div>
<div class="a " style="left:83px;top:758px;width:16px;height:16px;background:#ffffff;"><svg style="position:absolute;right:0;bottom:0" width="5" height="5" viewBox="0 0 5 5"><path d="M5 0V5H0Z" fill="#000"/></svg></div>
<div class="a " style="left:107px;top:755px;width:112px;height:23px;border:1px solid #46536a;border-radius:5px;"></div>
<div class="a t sb" style="left:114px;top:756px;width:100px;height:23px;line-height:23px;text-align:left;letter-spacing:-0.55px;">BambuLab Basic</div>
<div class="a " style="left:225px;top:755px;width:111px;height:23px;border:1px solid #46536a;border-radius:5px;"></div>
<div class="a t sb" style="left:232px;top:756px;width:100px;height:23px;line-height:23px;text-align:left;">Jade White</div>
<div class="a " style="left:342px;top:755px;width:57px;height:23px;border:1px solid #46536a;border-radius:5px;box-sizing:border-box;"></div>
<div class="a " style="left:386px;top:756px;width:1px;height:21px;background:#46536a;"></div>
<div class="a " style="left:386px;top:766px;width:12px;height:1px;background:#2c3747;"></div>
<svg class="a" style="left:389.0px;top:759.67px" width="7" height="4" viewBox="0 0 7 4"><path d="M0 4L3.5 0L7 4Z" fill="#46536a"/></svg>
<svg class="a" style="left:389.0px;top:769.79px" width="7" height="4" viewBox="0 0 7 4"><path d="M0 0L3.5 4L7 0Z" fill="#46536a"/></svg>
<div class="a t sb" style="left:349px;top:756px;width:37px;height:23px;line-height:23px;text-align:left;color:#b4bcc8;">5.0</div>
<div class="a " style="left:63px;top:797px;width:12px;height:12px;border:1.4px solid #d4d8de;border-radius:2px;"></div>
<div class="a " style="left:83px;top:795px;width:16px;height:16px;background:#9d432c;"><svg style="position:absolute;right:0;bottom:0" width="5" height="5" viewBox="0 0 5 5"><path d="M5 0V5H0Z" fill="#000"/></svg></div>
<div class="a " style="left:107px;top:792px;width:112px;height:23px;border:1px solid #46536a;border-radius:5px;"></div>
<div class="a t sb" style="left:114px;top:793px;width:100px;height:23px;line-height:23px;text-align:left;letter-spacing:-0.55px;">BambuLab Basic</div>
<div class="a " style="left:225px;top:792px;width:111px;height:23px;border:1px solid #46536a;border-radius:5px;"></div>
<div class="a t sb" style="left:232px;top:793px;width:100px;height:23px;line-height:23px;text-align:left;">Brown</div>
<div class="a " style="left:342px;top:792px;width:57px;height:23px;border:1px solid #46536a;border-radius:5px;box-sizing:border-box;"></div>
<div class="a " style="left:386px;top:793px;width:1px;height:21px;background:#46536a;"></div>
<div class="a " style="left:386px;top:803px;width:12px;height:1px;background:#2c3747;"></div>
<svg class="a" style="left:389.0px;top:796.67px" width="7" height="4" viewBox="0 0 7 4"><path d="M0 4L3.5 0L7 4Z" fill="#46536a"/></svg>
<svg class="a" style="left:389.0px;top:806.79px" width="7" height="4" viewBox="0 0 7 4"><path d="M0 0L3.5 4L7 0Z" fill="#46536a"/></svg>
<div class="a t sb" style="left:349px;top:793px;width:37px;height:23px;line-height:23px;text-align:left;color:#b4bcc8;">2.0</div>
<div class="a " style="left:63px;top:834px;width:12px;height:12px;border:1.4px solid #d4d8de;border-radius:2px;"></div>
<div class="a " style="left:83px;top:832px;width:16px;height:16px;background:#000000;"><svg style="position:absolute;right:0;bottom:0" width="5" height="5" viewBox="0 0 5 5"><path d="M5 0V5H0Z" fill="#b8bcc0"/></svg></div>
<div class="a " style="left:107px;top:829px;width:112px;height:23px;border:1px solid #46536a;border-radius:5px;"></div>
<div class="a t sb" style="left:114px;top:830px;width:100px;height:23px;line-height:23px;text-align:left;letter-spacing:-0.55px;">BambuLab Basic</div>
<div class="a " style="left:225px;top:829px;width:111px;height:23px;border:1px solid #46536a;border-radius:5px;"></div>
<div class="a t sb" style="left:232px;top:830px;width:100px;height:23px;line-height:23px;text-align:left;">Black</div>
<div class="a " style="left:342px;top:829px;width:57px;height:23px;border:1px solid #46536a;border-radius:5px;box-sizing:border-box;"></div>
<div class="a " style="left:386px;top:830px;width:1px;height:21px;background:#46536a;"></div>
<div class="a " style="left:386px;top:840px;width:12px;height:1px;background:#2c3747;"></div>
<svg class="a" style="left:389.0px;top:833.67px" width="7" height="4" viewBox="0 0 7 4"><path d="M0 4L3.5 0L7 4Z" fill="#46536a"/></svg>
<svg class="a" style="left:389.0px;top:843.79px" width="7" height="4" viewBox="0 0 7 4"><path d="M0 0L3.5 4L7 0Z" fill="#46536a"/></svg>
<div class="a t sb" style="left:349px;top:830px;width:37px;height:23px;line-height:23px;text-align:left;color:#b4bcc8;">0.6</div>
<div class="a " style="left:63px;top:871px;width:12px;height:12px;border:1.4px solid #d4d8de;border-radius:2px;"></div>
<div class="a " style="left:83px;top:869px;width:16px;height:16px;background:#f55a74;"><svg style="position:absolute;right:0;bottom:0" width="5" height="5" viewBox="0 0 5 5"><path d="M5 0V5H0Z" fill="#000"/></svg></div>
<div class="a " style="left:107px;top:866px;width:112px;height:23px;border:1px solid #46536a;border-radius:5px;"></div>
<div class="a t sb" style="left:114px;top:867px;width:100px;height:23px;line-height:23px;text-align:left;letter-spacing:-0.55px;">BambuLab Basic</div>
<div class="a " style="left:225px;top:866px;width:111px;height:23px;border:1px solid #46536a;border-radius:5px;"></div>
<div class="a t sb" style="left:232px;top:867px;width:100px;height:23px;line-height:23px;text-align:left;">Pink</div>
<div class="a " style="left:342px;top:866px;width:57px;height:23px;border:1px solid #46536a;border-radius:5px;box-sizing:border-box;"></div>
<div class="a " style="left:386px;top:867px;width:1px;height:21px;background:#46536a;"></div>
<div class="a " style="left:386px;top:877px;width:12px;height:1px;background:#2c3747;"></div>
<svg class="a" style="left:389.0px;top:870.67px" width="7" height="4" viewBox="0 0 7 4"><path d="M0 4L3.5 0L7 4Z" fill="#46536a"/></svg>
<svg class="a" style="left:389.0px;top:880.79px" width="7" height="4" viewBox="0 0 7 4"><path d="M0 0L3.5 4L7 0Z" fill="#46536a"/></svg>
<div class="a t sb" style="left:349px;top:867px;width:37px;height:23px;line-height:23px;text-align:left;color:#b4bcc8;">8.0</div>
<div class="a " style="left:63px;top:908px;width:12px;height:12px;border:1.4px solid #d4d8de;border-radius:2px;"></div>
<div class="a " style="left:83px;top:906px;width:16px;height:16px;background:#8e9089;"><svg style="position:absolute;right:0;bottom:0" width="5" height="5" viewBox="0 0 5 5"><path d="M5 0V5H0Z" fill="#000"/></svg></div>
<div class="a " style="left:107px;top:903px;width:112px;height:23px;border:1px solid #46536a;border-radius:5px;"></div>
<div class="a t sb" style="left:114px;top:904px;width:100px;height:23px;line-height:23px;text-align:left;letter-spacing:-0.55px;">BambuLab Basic</div>
<div class="a " style="left:225px;top:903px;width:111px;height:23px;border:1px solid #46536a;border-radius:5px;"></div>
<div class="a t sb" style="left:232px;top:904px;width:100px;height:23px;line-height:23px;text-align:left;">Gray</div>
<div class="a " style="left:342px;top:903px;width:57px;height:23px;border:1px solid #46536a;border-radius:5px;box-sizing:border-box;"></div>
<div class="a " style="left:386px;top:904px;width:1px;height:21px;background:#46536a;"></div>
<div class="a " style="left:386px;top:914px;width:12px;height:1px;background:#2c3747;"></div>
<svg class="a" style="left:389.0px;top:907.67px" width="7" height="4" viewBox="0 0 7 4"><path d="M0 4L3.5 0L7 4Z" fill="#46536a"/></svg>
<svg class="a" style="left:389.0px;top:917.79px" width="7" height="4" viewBox="0 0 7 4"><path d="M0 0L3.5 4L7 0Z" fill="#46536a"/></svg>
<div class="a t sb" style="left:349px;top:904px;width:37px;height:23px;line-height:23px;text-align:left;color:#b4bcc8;">2.0</div>
<div class="a " style="left:63px;top:945px;width:12px;height:12px;border:1.4px solid #d4d8de;border-radius:2px;"></div>
<div class="a " style="left:83px;top:943px;width:16px;height:16px;background:#0a2989;"><svg style="position:absolute;right:0;bottom:0" width="5" height="5" viewBox="0 0 5 5"><path d="M5 0V5H0Z" fill="#000"/></svg></div>
<div class="a " style="left:107px;top:940px;width:112px;height:23px;border:1px solid #46536a;border-radius:5px;"></div>
<div class="a t sb" style="left:114px;top:941px;width:100px;height:23px;line-height:23px;text-align:left;letter-spacing:-0.55px;">BambuLab Basic</div>
<div class="a " style="left:225px;top:940px;width:111px;height:23px;border:1px solid #46536a;border-radius:5px;"></div>
<div class="a t sb" style="left:232px;top:941px;width:100px;height:23px;line-height:23px;text-align:left;">Blue</div>
<div class="a " style="left:342px;top:940px;width:57px;height:23px;border:1px solid #46536a;border-radius:5px;box-sizing:border-box;"></div>
<div class="a " style="left:386px;top:941px;width:1px;height:21px;background:#46536a;"></div>
<div class="a " style="left:386px;top:951px;width:12px;height:1px;background:#2c3747;"></div>
<svg class="a" style="left:389.0px;top:944.67px" width="7" height="4" viewBox="0 0 7 4"><path d="M0 4L3.5 0L7 4Z" fill="#46536a"/></svg>
<svg class="a" style="left:389.0px;top:954.79px" width="7" height="4" viewBox="0 0 7 4"><path d="M0 0L3.5 4L7 0Z" fill="#46536a"/></svg>
<div class="a t sb" style="left:349px;top:941px;width:37px;height:23px;line-height:23px;text-align:left;color:#b4bcc8;">4.0</div>
<div class="a " style="left:63px;top:982px;width:12px;height:12px;border:1.4px solid #d4d8de;border-radius:2px;"></div>
<div class="a " style="left:83px;top:980px;width:16px;height:16px;background:#e8cdb0;"><svg style="position:absolute;right:0;bottom:0" width="5" height="5" viewBox="0 0 5 5"><path d="M5 0V5H0Z" fill="#000"/></svg></div>
<div class="a " style="left:107px;top:977px;width:112px;height:23px;border:1px solid #46536a;border-radius:5px;"></div>
<div class="a t sb" style="left:114px;top:978px;width:100px;height:23px;line-height:23px;text-align:left;letter-spacing:-0.55px;">BambuLab Basic</div>
<div class="a " style="left:225px;top:977px;width:111px;height:23px;border:1px solid #46536a;border-radius:5px;"></div>
<div class="a t sb" style="left:232px;top:978px;width:100px;height:23px;line-height:23px;text-align:left;">Beige</div>
<div class="a " style="left:342px;top:977px;width:57px;height:23px;border:1px solid #46536a;border-radius:5px;box-sizing:border-box;"></div>
<div class="a " style="left:386px;top:978px;width:1px;height:21px;background:#46536a;"></div>
<div class="a " style="left:386px;top:988px;width:12px;height:1px;background:#2c3747;"></div>
<svg class="a" style="left:389.0px;top:981.67px" width="7" height="4" viewBox="0 0 7 4"><path d="M0 4L3.5 0L7 4Z" fill="#46536a"/></svg>
<svg class="a" style="left:389.0px;top:991.79px" width="7" height="4" viewBox="0 0 7 4"><path d="M0 0L3.5 4L7 0Z" fill="#46536a"/></svg>
<div class="a t sb" style="left:349px;top:978px;width:37px;height:23px;line-height:23px;text-align:left;color:#b4bcc8;">8.0</div>
</div>
<div class="a t sb" style="left:150px;top:1024px;width:49px;height:20px;line-height:20px;text-align:right;"><span style="text-decoration:underline">F</span>ilter</div>
<div class="a " style="left:238px;top:1021px;width:179px;height:23px;border:1px solid #46536a;border-radius:5px;"></div>
<div class="a " style="left:421px;top:1021px;width:23px;height:23px;background:#46536a;border-radius:5px;"></div>
<svg class="a" style="left:425.5px;top:1025.5px" width="14" height="14" viewBox="0 0 14 14" fill="none" stroke="#2b96ee" stroke-width="1.7"><path d="M1 1L13 13M13 1L1 13"/></svg>
<div class="a t sb btn" style="left:31px;top:1051px;width:100px;height:19px;line-height:21px;background:#46536a;">New Filament</div>
<div class="a t sb btn" style="left:135px;top:1051px;width:99px;height:19px;line-height:21px;background:#46536a;">Save Library</div>
<div class="a " style="left:238px;top:1048px;width:206px;height:25px;border:1px solid #46536a;border-radius:5px;box-sizing:border-box;"></div>
<div class="a " style="left:430px;top:1049px;width:1px;height:23px;background:#46536a;"></div>
<svg class="a" style="left:433.5px;top:1058.5px" width="7" height="4" viewBox="0 0 7 4"><path d="M0 0L3.5 4L7 0Z" fill="#46536a"/></svg>
<div class="a t sb" style="left:243px;top:1049px;width:187px;height:25px;line-height:25px;text-align:left;">Brand</div>
<div class="a " style="left:31px;top:1078px;width:203px;height:25px;border:1px solid #46536a;border-radius:5px;box-sizing:border-box;"></div>
<div class="a " style="left:220px;top:1079px;width:1px;height:23px;background:#46536a;"></div>
<svg class="a" style="left:223.5px;top:1088.5px" width="7" height="4" viewBox="0 0 7 4"><path d="M0 0L3.5 4L7 0Z" fill="#46536a"/></svg>
<div class="a t sb" style="left:38px;top:1079px;width:182px;height:25px;line-height:25px;text-align:left;">*Project*</div>
<div class="a t sb btn" style="left:238px;top:1081px;width:206px;height:20px;line-height:22px;background:#46536a;">Add/Update Set</div>
<div class="a t sb btn" style="left:31px;top:1108px;width:100px;height:19px;line-height:21px;background:#22695a;">Load w/ Defaults</div>
<svg class="a" style="left:550px;top:249px" width="863" height="862" preserveAspectRatio="none" viewBox="0 0 1000 1000"><rect width="1000" height="1000" fill="#fdfdfd"/><defs><linearGradient id="Lg1" gradientUnits="userSpaceOnUse" x1="500" y1="640" x2="250" y2="900"><stop offset="0" stop-color="#8d2e36"/><stop offset="0.3" stop-color="#8d2e36"/><stop offset="0.55" stop-color="#d7363a"/><stop offset="1" stop-color="#d7363a"/></linearGradient><linearGradient id="Lg2" gradientUnits="userSpaceOnUse" x1="510" y1="690" x2="290" y2="930"><stop offset="0" stop-color="#1a1a1d"/><stop offset="0.35" stop-color="#8d2e36"/><stop offset="1" stop-color="#8d2e36"/></linearGradient><linearGradient id="Lg3" gradientUnits="userSpaceOnUse" x1="530" y1="710" x2="378" y2="952"><stop offset="0" stop-color="#8d2e36"/><stop offset="0.3" stop-color="#d7363a"/><stop offset="0.75" stop-color="#d7363a"/><stop offset="1" stop-color="#8d2e36"/></linearGradient><linearGradient id="Lg4" gradientUnits="userSpaceOnUse" x1="550" y1="720" x2="420" y2="948"><stop offset="0" stop-color="#1a1a1d"/><stop offset="0.4" stop-color="#8d2e36"/><stop offset="0.8" stop-color="#d7363a"/><stop offset="1" stop-color="#d7363a"/></linearGradient><linearGradient id="Lg5" gradientUnits="userSpaceOnUse" x1="570" y1="715" x2="474" y2="928"><stop offset="0" stop-color="#1a1a1d"/><stop offset="0.45" stop-color="#8d2e36"/><stop offset="0.8" stop-color="#d7363a"/><stop offset="1" stop-color="#ef7d1d"/></linearGradient><linearGradient id="Lg6" gradientUnits="userSpaceOnUse" x1="760" y1="380" x2="560" y2="720"><stop offset="0" stop-color="#d7363a"/><stop offset="0.55" stop-color="#d7363a"/><stop offset="0.8" stop-color="#8d2e36"/><stop offset="1" stop-color="#8d2e36"/></linearGradient><linearGradient id="Lg7" gradientUnits="userSpaceOnUse" x1="812" y1="345" x2="868" y2="385"><stop offset="0" stop-color="#ef7d1d"/><stop offset="0.5" stop-color="#e5602a"/><stop offset="1" stop-color="#d7363a"/></linearGradient><linearGradient id="Lg8" gradientUnits="userSpaceOnUse" x1="770" y1="430" x2="815" y2="462"><stop offset="0" stop-color="#1a1a1d"/><stop offset="0.5" stop-color="#1a1a1d"/><stop offset="1" stop-color="#1a3e6e"/></linearGradient><linearGradient id="Lg9" gradientUnits="userSpaceOnUse" x1="804" y1="445" x2="858" y2="425"><stop offset="0" stop-color="#1a3e6e"/><stop offset="0.1" stop-color="#1a3e6e"/><stop offset="0.34" stop-color="#e8eef5"/><stop offset="1" stop-color="#ffffff"/></linearGradient><linearGradient id="Lg10" gradientUnits="userSpaceOnUse" x1="560" y1="670" x2="622" y2="748"><stop offset="0" stop-color="#b7c5d8"/><stop offset="0.35" stop-color="#6f88ab"/><stop offset="0.75" stop-color="#6f88ab"/><stop offset="1" stop-color="#1a3e6e"/></linearGradient><linearGradient id="Lg11" gradientUnits="userSpaceOnUse" x1="640" y1="680" x2="700" y2="752"><stop offset="0" stop-color="#b7c5d8"/><stop offset="0.3" stop-color="#6f88ab"/><stop offset="0.7" stop-color="#6f88ab"/><stop offset="1" stop-color="#1a3e6e"/></linearGradient><linearGradient id="Lg12" gradientUnits="userSpaceOnUse" x1="494" y1="576" x2="510" y2="520"><stop offset="0" stop-color="#1a3e6e"/><stop offset="0.55" stop-color="#1a3e6e"/><stop offset="1" stop-color="#16263f"/></linearGradient><linearGradient id="Lg13" gradientUnits="userSpaceOnUse" x1="494" y1="576" x2="506.0" y2="534.0"><stop offset="0" stop-color="#7f96b5"/><stop offset="0.55" stop-color="#7f96b5"/><stop offset="1" stop-color="#1a3e6e"/></linearGradient><linearGradient id="Lg14" gradientUnits="userSpaceOnUse" x1="471.5" y1="600" x2="492" y2="538"><stop offset="0" stop-color="#1a3e6e"/><stop offset="0.55" stop-color="#1a3e6e"/><stop offset="1" stop-color="#16263f"/></linearGradient><linearGradient id="Lg15" gradientUnits="userSpaceOnUse" x1="471.5" y1="600" x2="486.875" y2="553.5"><stop offset="0" stop-color="#7f96b5"/><stop offset="0.55" stop-color="#7f96b5"/><stop offset="1" stop-color="#1a3e6e"/></linearGradient><linearGradient id="Lg16" gradientUnits="userSpaceOnUse" x1="441.7" y1="611.6" x2="476" y2="538"><stop offset="0" stop-color="#1a3e6e"/><stop offset="0.55" stop-color="#1a3e6e"/><stop offset="1" stop-color="#16263f"/></linearGradient><linearGradient id="Lg17" gradientUnits="userSpaceOnUse" x1="441.7" y1="611.6" x2="467.425" y2="556.4"><stop offset="0" stop-color="#7f96b5"/><stop offset="0.55" stop-color="#7f96b5"/><stop offset="1" stop-color="#1a3e6e"/></linearGradient><linearGradient id="Lg18" gradientUnits="userSpaceOnUse" x1="415" y1="616" x2="460" y2="528"><stop offset="0" stop-color="#1a3e6e"/><stop offset="0.55" stop-color="#1a3e6e"/><stop offset="1" stop-color="#16263f"/></linearGradient><linearGradient id="Lg19" gradientUnits="userSpaceOnUse" x1="415" y1="616" x2="448.75" y2="550.0"><stop offset="0" stop-color="#7f96b5"/><stop offset="0.55" stop-color="#7f96b5"/><stop offset="1" stop-color="#1a3e6e"/></linearGradient><linearGradient id="Lg20" gradientUnits="userSpaceOnUse" x1="382" y1="597" x2="445" y2="518"><stop offset="0" stop-color="#1a3e6e"/><stop offset="0.55" stop-color="#1a3e6e"/><stop offset="1" stop-color="#16263f"/></linearGradient><linearGradient id="Lg21" gradientUnits="userSpaceOnUse" x1="382" y1="597" x2="429.25" y2="537.75"><stop offset="0" stop-color="#d3dde9"/><stop offset="0.55" stop-color="#7f96b5"/><stop offset="1" stop-color="#1a3e6e"/></linearGradient><linearGradient id="Lg22" gradientUnits="userSpaceOnUse" x1="352" y1="582" x2="428" y2="505"><stop offset="0" stop-color="#1a3e6e"/><stop offset="0.55" stop-color="#1a3e6e"/><stop offset="1" stop-color="#16263f"/></linearGradient><linearGradient id="Lg23" gradientUnits="userSpaceOnUse" x1="352" y1="582" x2="409.0" y2="524.25"><stop offset="0" stop-color="#7f96b5"/><stop offset="0.55" stop-color="#7f96b5"/><stop offset="1" stop-color="#1a3e6e"/></linearGradient><linearGradient id="Lg24" gradientUnits="userSpaceOnUse" x1="327" y1="561" x2="420" y2="480"><stop offset="0" stop-color="#1a3e6e"/><stop offset="0.55" stop-color="#1a3e6e"/><stop offset="1" stop-color="#16263f"/></linearGradient><linearGradient id="Lg25" gradientUnits="userSpaceOnUse" x1="327" y1="561" x2="396.75" y2="500.25"><stop offset="0" stop-color="#d3dde9"/><stop offset="0.55" stop-color="#7f96b5"/><stop offset="1" stop-color="#1a3e6e"/></linearGradient><linearGradient id="Lg26" gradientUnits="userSpaceOnUse" x1="303" y1="543" x2="408" y2="458"><stop offset="0" stop-color="#1a3e6e"/><stop offset="0.55" stop-color="#1a3e6e"/><stop offset="1" stop-color="#16263f"/></linearGradient><linearGradient id="Lg27" gradientUnits="userSpaceOnUse" x1="303" y1="543" x2="381.75" y2="479.25"><stop offset="0" stop-color="#d3dde9"/><stop offset="0.55" stop-color="#7f96b5"/><stop offset="1" stop-color="#1a3e6e"/></linearGradient><linearGradient id="Lg28" gradientUnits="userSpaceOnUse" x1="267.6" y1="528" x2="392" y2="436"><stop offset="0" stop-color="#1a3e6e"/><stop offset="0.55" stop-color="#1a3e6e"/><stop offset="1" stop-color="#16263f"/></linearGradient><linearGradient id="Lg29" gradientUnits="userSpaceOnUse" x1="267.6" y1="528" x2="360.9" y2="459.0"><stop offset="0" stop-color="#d3dde9"/><stop offset="0.55" stop-color="#d3dde9"/><stop offset="1" stop-color="#1a3e6e"/></linearGradient><linearGradient id="Lg30" gradientUnits="userSpaceOnUse" x1="250" y1="496" x2="372" y2="408"><stop offset="0" stop-color="#7f96b5"/><stop offset="0.3" stop-color="#d3dde9"/><stop offset="0.7" stop-color="#7f96b5"/><stop offset="1" stop-color="#1a3e6e"/></linearGradient><linearGradient id="Lg31" gradientUnits="userSpaceOnUse" x1="198" y1="471" x2="300" y2="400"><stop offset="0" stop-color="#1a3e6e"/><stop offset="0.12" stop-color="#7f96b5"/><stop offset="0.45" stop-color="#d3dde9"/><stop offset="1" stop-color="#7f96b5"/></linearGradient><linearGradient id="Lg32" gradientUnits="userSpaceOnUse" x1="250" y1="430" x2="350" y2="370"><stop offset="0" stop-color="#ef7d1d"/><stop offset="0.35" stop-color="#ef7d1d"/><stop offset="0.55" stop-color="#d7363a"/><stop offset="1" stop-color="#d7363a"/></linearGradient><linearGradient id="Lg33" gradientUnits="userSpaceOnUse" x1="134" y1="427" x2="214" y2="380"><stop offset="0" stop-color="#1a3e6e"/><stop offset="0.12" stop-color="#7f96b5"/><stop offset="0.45" stop-color="#d3dde9"/><stop offset="1" stop-color="#7f96b5"/></linearGradient><linearGradient id="Lg34" gradientUnits="userSpaceOnUse" x1="205" y1="410" x2="320" y2="340"><stop offset="0" stop-color="#f9b772"/><stop offset="0.12" stop-color="#ef7d1d"/><stop offset="0.45" stop-color="#ef7d1d"/><stop offset="0.6" stop-color="#d7363a"/><stop offset="1" stop-color="#d7363a"/></linearGradient><linearGradient id="Lg35" gradientUnits="userSpaceOnUse" x1="70.7" y1="360.1" x2="190" y2="335"><stop offset="0" stop-color="#1a3e6e"/><stop offset="0.12" stop-color="#7f96b5"/><stop offset="0.45" stop-color="#d3dde9"/><stop offset="1" stop-color="#7f96b5"/></linearGradient><linearGradient id="Lg36" gradientUnits="userSpaceOnUse" x1="186" y1="345" x2="320" y2="315"><stop offset="0" stop-color="#ef7d1d"/><stop offset="0.1" stop-color="#ef7d1d"/><stop offset="0.2" stop-color="#d7363a"/><stop offset="1" stop-color="#d7363a"/></linearGradient><linearGradient id="Lg37" gradientUnits="userSpaceOnUse" x1="40.9" y1="269.5" x2="190" y2="290"><stop offset="0" stop-color="#1a3e6e"/><stop offset="0.12" stop-color="#7f96b5"/><stop offset="0.45" stop-color="#d3dde9"/><stop offset="1" stop-color="#7f96b5"/></linearGradient><linearGradient id="Lg38" gradientUnits="userSpaceOnUse" x1="183" y1="295" x2="320" y2="285"><stop offset="0" stop-color="#d7363a"/><stop offset="0.75" stop-color="#d7363a"/><stop offset="1" stop-color="#8d2e36"/></linearGradient><linearGradient id="Lg39" gradientUnits="userSpaceOnUse" x1="29.8" y1="205" x2="135" y2="245"><stop offset="0" stop-color="#1a3e6e"/><stop offset="0.12" stop-color="#7f96b5"/><stop offset="0.45" stop-color="#d3dde9"/><stop offset="1" stop-color="#7f96b5"/></linearGradient><linearGradient id="Lg40" gradientUnits="userSpaceOnUse" x1="119" y1="250" x2="320" y2="255"><stop offset="0" stop-color="#d7363a"/><stop offset="0.7" stop-color="#d7363a"/><stop offset="1" stop-color="#8d2e36"/></linearGradient><linearGradient id="Lg41" gradientUnits="userSpaceOnUse" x1="22" y1="127" x2="300" y2="225"><stop offset="0" stop-color="#1a1a1d"/><stop offset="0.08" stop-color="#1a1a1d"/><stop offset="0.1" stop-color="#1a3e6e"/><stop offset="0.16" stop-color="#7f96b5"/><stop offset="0.21" stop-color="#d3dde9"/><stop offset="0.235" stop-color="#ffffff"/><stop offset="0.24" stop-color="#ef7d1d"/><stop offset="0.33" stop-color="#ef7d1d"/><stop offset="0.4" stop-color="#d7363a"/><stop offset="0.5" stop-color="#d7363a"/><stop offset="0.56" stop-color="#ef7d1d"/><stop offset="0.66" stop-color="#ef7d1d"/><stop offset="0.74" stop-color="#d7363a"/><stop offset="1" stop-color="#8d2e36"/></linearGradient><linearGradient id="Lg42" gradientUnits="userSpaceOnUse" x1="48" y1="72" x2="300" y2="205"><stop offset="0" stop-color="#1a1a1d"/><stop offset="0.11" stop-color="#1a1a1d"/><stop offset="0.14" stop-color="#8d2e36"/><stop offset="0.22" stop-color="#d7363a"/><stop offset="0.8" stop-color="#d7363a"/><stop offset="1" stop-color="#8d2e36"/></linearGradient><linearGradient id="Lg43" gradientUnits="userSpaceOnUse" x1="187" y1="65" x2="340" y2="198"><stop offset="0" stop-color="#d7363a"/><stop offset="0.5" stop-color="#d7363a"/><stop offset="1" stop-color="#8d2e36"/></linearGradient><linearGradient id="Lg44" gradientUnits="userSpaceOnUse" x1="330" y1="210" x2="560" y2="540"><stop offset="0" stop-color="#d7363a"/><stop offset="0.22" stop-color="#d7363a"/><stop offset="0.42" stop-color="#8d2e36"/><stop offset="0.68" stop-color="#8d2e36"/><stop offset="0.86" stop-color="#d7363a"/><stop offset="1" stop-color="#d7363a"/></linearGradient></defs><path d="M497.0 612.0C482.3 617.7 502.3 622.3 476.0 657.0C449.7 691.7 456.7 677.0 418.0 716.0C379.3 755.0 399.0 733.3 360.0 774.0C321.0 814.7 340.0 794.3 301.0 838.0C262.0 881.7 256.3 884.7 243.0 905.0C229.7 925.3 236.7 917.3 261.0 899.0C285.3 880.7 286.0 875.3 316.0 850.0C346.0 824.7 323.0 846.3 351.0 823.0C379.0 799.7 367.0 811.0 400.0 780.0C433.0 749.0 416.7 763.3 450.0 730.0C483.3 696.7 476.7 710.0 500.0 680.0C523.3 650.0 521.0 662.7 520.0 640.0C519.0 617.3 511.7 606.3 497.0 612.0Z" fill="url(#Lg1)" /><path d="M440.0 705.0C415.0 721.7 420.0 723.3 380.0 765.0C340.0 806.7 356.7 790.0 320.0 830.0C283.3 870.0 276.7 874.3 270.0 885.0C263.3 895.7 273.3 885.3 300.0 862.0C326.7 838.7 313.3 850.7 350.0 815.0C386.7 779.3 375.0 788.3 410.0 755.0C445.0 721.7 445.0 731.7 455.0 715.0C465.0 698.3 465.0 688.3 440.0 705.0Z" fill="#8d2e36" opacity="0.55"/><path d="M500.0 680.0C466.7 703.3 479.7 702.3 430.0 750.0C380.3 797.7 384.3 790.7 351.0 823.0C317.7 855.3 347.3 822.7 330.0 847.0C312.7 871.3 313.3 868.0 299.0 896.0C284.7 924.0 284.3 919.3 287.0 931.0C289.7 942.7 289.7 937.0 307.0 931.0C324.3 925.0 311.7 940.0 339.0 913.0C366.3 886.0 355.3 891.0 389.0 850.0C422.7 809.0 403.0 833.3 440.0 790.0C477.0 746.7 470.0 756.7 500.0 720.0C530.0 683.3 530.0 693.3 530.0 680.0C530.0 666.7 533.3 656.7 500.0 680.0Z" fill="url(#Lg2)" /><path d="M400.0 805.0C381.7 821.7 386.0 820.7 360.0 850.0C334.0 879.3 339.3 872.3 322.0 893.0C304.7 913.7 309.3 907.0 308.0 912.0C306.7 917.0 305.7 918.7 318.0 908.0C330.3 897.3 322.7 904.3 345.0 880.0C367.3 855.7 361.7 861.7 385.0 835.0C408.3 808.3 410.0 810.0 415.0 800.0C420.0 790.0 418.3 788.3 400.0 805.0Z" fill="#1a1a1d" opacity="0.9"/><path d="M520.0 700.0C491.7 720.0 495.0 729.0 460.0 770.0C425.0 811.0 437.7 785.0 415.0 823.0C392.3 861.0 403.7 849.0 392.0 884.0C380.3 919.0 385.0 904.7 380.0 928.0C375.0 951.3 372.0 951.0 377.0 954.0C382.0 957.0 379.3 954.3 395.0 937.0C410.7 919.7 404.0 931.0 424.0 902.0C444.0 873.0 429.7 890.7 455.0 850.0C480.3 809.3 470.0 826.7 500.0 780.0C530.0 733.3 538.3 736.7 545.0 710.0C551.7 683.3 548.3 680.0 520.0 700.0Z" fill="url(#Lg3)" /><path d="M452.0 772.0C440.7 785.0 442.0 785.7 428.0 815.0C414.0 844.3 412.7 848.3 410.0 860.0C407.3 871.7 410.0 866.0 420.0 850.0C430.0 834.0 426.0 836.7 440.0 812.0C454.0 787.3 458.0 789.3 462.0 776.0C466.0 762.7 463.3 759.0 452.0 772.0Z" fill="#ef7d1d" opacity="0.9"/><path d="M408.0 880.0C401.3 892.3 397.3 906.7 396.0 915.0C394.7 923.3 397.3 917.3 404.0 905.0C410.7 892.7 414.7 886.3 416.0 878.0C417.3 869.7 414.7 867.7 408.0 880.0Z" fill="#ef7d1d" opacity="0.8"/><path d="M470.0 790.0C455.0 805.0 460.0 803.3 440.0 840.0C420.0 876.7 426.0 868.3 410.0 900.0C394.0 931.7 395.3 925.0 392.0 935.0C388.7 945.0 389.0 943.3 400.0 930.0C411.0 916.7 406.7 923.3 425.0 895.0C443.3 866.7 435.0 878.3 455.0 845.0C475.0 811.7 480.0 813.3 485.0 795.0C490.0 776.7 485.0 775.0 470.0 790.0Z" fill="#1a1a1d" opacity="0.85"/><path d="M545.0 710.0C523.3 731.7 530.7 731.7 500.0 780.0C469.3 828.3 476.3 810.7 453.0 855.0C429.7 899.3 441.7 881.3 430.0 913.0C418.3 944.7 414.3 945.0 418.0 950.0C421.7 955.0 423.7 951.3 441.0 928.0C458.3 904.7 450.3 912.7 470.0 880.0C489.7 847.3 476.7 870.0 500.0 830.0C523.3 790.0 518.3 798.3 540.0 760.0C561.7 721.7 563.3 731.7 565.0 715.0C566.7 698.3 566.7 688.3 545.0 710.0Z" fill="url(#Lg4)" /><path d="M565.0 712.0C553.3 732.0 562.7 727.0 540.0 770.0C517.3 813.0 516.3 803.0 497.0 841.0C477.7 879.0 490.0 854.7 482.0 884.0C474.0 913.3 474.0 914.3 473.0 929.0C472.0 943.7 468.3 943.0 479.0 928.0C489.7 913.0 486.7 915.0 505.0 884.0C523.3 853.0 518.3 864.0 534.0 835.0C549.7 806.0 541.3 823.3 552.0 797.0C562.7 770.7 558.3 785.0 566.0 756.0C573.7 727.0 575.3 724.7 575.0 710.0C574.7 695.3 576.7 692.0 565.0 712.0Z" fill="url(#Lg5)" /><path d="M500.0 845.0C492.7 858.3 493.3 860.7 486.0 885.0C478.7 909.3 478.0 911.3 478.0 918.0C478.0 924.7 479.3 921.0 486.0 905.0C492.7 889.0 490.7 890.0 498.0 870.0C505.3 850.0 507.3 853.3 508.0 845.0C508.7 836.7 507.3 831.7 500.0 845.0Z" fill="#ef7d1d" opacity="0.9"/><path d="M499.0 640.0C505.7 649.3 504.7 654.7 505.0 680.0C505.3 705.3 494.0 696.3 500.0 716.0C506.0 735.7 502.0 743.0 523.0 739.0C544.0 735.0 546.7 702.0 563.0 704.0C579.3 706.0 573.7 712.0 572.0 745.0C570.3 778.0 570.7 770.0 558.0 803.0C545.3 836.0 551.7 840.0 534.0 844.0C516.3 848.0 522.3 815.0 505.0 815.0C487.7 815.0 493.7 850.0 482.0 844.0C470.3 838.0 468.0 826.3 470.0 797.0C472.0 767.7 495.7 756.0 488.0 756.0C480.3 756.0 474.3 775.7 447.0 797.0C419.7 818.3 411.7 827.7 406.0 820.0C400.3 812.3 406.7 815.7 430.0 774.0C453.3 732.3 457.7 735.7 476.0 695.0C494.3 654.3 477.3 670.3 485.0 652.0C492.7 633.7 492.3 630.7 499.0 640.0Z" fill="#1a1a1d" opacity="1"/><path d="M520.0 700.0C512.7 711.7 513.3 716.7 500.0 750.0C486.7 783.3 490.0 773.3 480.0 800.0C470.0 826.7 470.0 825.0 470.0 830.0C470.0 835.0 470.7 835.0 480.0 815.0C489.3 795.0 484.0 803.3 498.0 770.0C512.0 736.7 514.7 738.3 522.0 715.0C529.3 691.7 527.3 688.3 520.0 700.0Z" fill="#8d2e36" opacity="0.9"/><path d="M545.0 720.0C537.0 733.3 539.7 738.3 528.0 770.0C516.3 801.7 514.3 801.0 510.0 815.0C505.7 829.0 506.7 825.3 515.0 812.0C523.3 798.7 522.7 802.3 535.0 775.0C547.3 747.7 548.7 748.3 552.0 730.0C555.3 711.7 553.0 706.7 545.0 720.0Z" fill="#8d2e36" opacity="0.9"/><path d="M496.0 690.0C488.7 700.0 491.3 703.3 480.0 730.0C468.7 756.7 465.3 758.3 462.0 770.0C458.7 781.7 461.3 778.3 470.0 765.0C478.7 751.7 477.3 751.7 488.0 730.0C498.7 708.3 499.3 713.3 502.0 700.0C504.7 686.7 503.3 680.0 496.0 690.0Z" fill="#8d2e36" opacity="0.9"/><path d="M497.0 612.0C491.7 616.0 496.0 616.0 487.0 632.0C478.0 648.0 478.3 645.7 470.0 660.0C461.7 674.3 461.3 672.3 462.0 675.0C462.7 677.7 462.7 678.0 472.0 668.0C481.3 658.0 479.7 661.0 490.0 645.0C500.3 629.0 500.7 631.0 503.0 620.0C505.3 609.0 502.3 608.0 497.0 612.0Z" fill="#1a3e6e" /><path d="M607.0 373.0C623.7 353.7 616.0 369.3 640.0 362.0C664.0 354.7 654.0 358.0 679.0 351.0C704.0 344.0 691.3 346.7 715.0 341.0C738.7 335.3 728.3 337.3 750.0 334.0C771.7 330.7 762.0 331.7 780.0 331.0C798.0 330.3 789.0 330.3 804.0 332.0C819.0 333.7 812.0 332.3 825.0 336.0C838.0 339.7 832.7 337.7 843.0 343.0C853.3 348.3 849.0 346.0 856.0 352.0C863.0 358.0 859.3 354.3 864.0 361.0C868.7 367.7 867.7 365.3 870.0 372.0C872.3 378.7 872.3 374.7 871.0 381.0C869.7 387.3 870.3 386.7 866.0 391.0C861.7 395.3 870.0 387.7 858.0 394.0C846.0 400.3 849.3 394.7 830.0 410.0C810.7 425.3 823.3 422.7 800.0 440.0C776.7 457.3 777.3 448.7 760.0 462.0C742.7 475.3 754.3 467.3 748.0 480.0C741.7 492.7 745.0 486.3 741.0 500.0C737.0 513.7 740.7 506.7 736.0 521.0C731.3 535.3 734.3 528.7 727.0 543.0C719.7 557.3 723.0 550.0 714.0 564.0C705.0 578.0 710.7 570.7 700.0 585.0C689.3 599.3 691.3 592.7 682.0 607.0C672.7 621.3 678.0 613.7 672.0 628.0C666.0 642.3 668.7 636.7 664.0 650.0C659.3 663.3 662.0 657.3 658.0 668.0C654.0 678.7 658.7 674.0 652.0 682.0C645.3 690.0 648.0 694.0 638.0 692.0C628.0 690.0 634.7 684.0 622.0 676.0C609.3 668.0 614.0 670.7 600.0 668.0C586.0 665.3 593.3 665.3 580.0 668.0C566.7 670.7 564.7 665.3 560.0 676.0C555.3 686.7 567.3 678.7 566.0 700.0C564.7 721.3 564.7 716.7 556.0 740.0C547.3 763.3 552.0 770.0 540.0 770.0C528.0 770.0 531.7 766.7 520.0 740.0C508.3 713.3 514.0 723.3 505.0 690.0C496.0 656.7 497.0 667.7 493.0 640.0C489.0 612.3 490.7 628.7 493.0 607.0C495.3 585.3 491.0 600.7 500.0 575.0C509.0 549.3 500.0 565.0 520.0 530.0C540.0 495.0 536.7 506.7 560.0 470.0C583.3 433.3 574.3 452.3 590.0 420.0C605.7 387.7 590.3 392.3 607.0 373.0Z" fill="url(#Lg6)" /><path d="M700.0 560.0C703.3 573.3 700.0 573.3 690.0 600.0C680.0 626.7 681.7 614.0 670.0 640.0C658.3 666.0 665.0 661.3 655.0 678.0C645.0 694.7 651.7 691.0 640.0 690.0C628.3 689.0 623.3 691.7 620.0 675.0C616.7 658.3 620.0 665.0 630.0 640.0C640.0 615.0 633.3 626.7 650.0 600.0C666.7 573.3 663.3 573.3 680.0 560.0C696.7 546.7 696.7 546.7 700.0 560.0Z" fill="#8d2e36" /><path d="M585.0 652.0C588.3 644.3 591.7 651.7 610.0 645.0C628.3 638.3 623.3 641.0 640.0 632.0C656.7 623.0 654.0 612.7 660.0 618.0C666.0 623.3 661.3 628.0 658.0 648.0C654.7 668.0 656.7 664.0 650.0 678.0C643.3 692.0 648.0 690.7 638.0 690.0C628.0 689.3 632.7 683.3 620.0 676.0C607.3 668.7 611.7 676.0 600.0 668.0C588.3 660.0 581.7 659.7 585.0 652.0Z" fill="#1a1a1d" opacity="0.9"/><path d="M740.0 470.0C746.0 483.3 746.3 488.3 738.0 520.0C729.7 551.7 731.0 538.3 715.0 565.0C699.0 591.7 695.0 601.7 690.0 600.0C685.0 598.3 691.7 586.7 700.0 560.0C708.3 533.3 708.3 546.7 715.0 520.0C721.7 493.3 711.7 496.7 720.0 480.0C728.3 463.3 734.0 456.7 740.0 470.0Z" fill="#8d2e36" opacity="0.7"/><path d="M556.0 540.0C569.3 531.7 568.7 531.7 580.0 545.0C591.3 558.3 588.3 548.3 590.0 580.0C591.7 611.7 591.7 611.7 585.0 640.0C578.3 668.3 581.0 655.7 570.0 665.0C559.0 674.3 562.0 683.0 552.0 668.0C542.0 653.0 544.0 652.7 540.0 620.0C536.0 587.3 534.7 596.7 540.0 570.0C545.3 543.3 542.7 548.3 556.0 540.0Z" fill="#d7363a" /><path d="M549.0 553.0C554.3 547.0 555.3 548.0 565.0 548.0C574.7 548.0 575.0 546.3 578.0 553.0C581.0 559.7 580.0 562.0 574.0 568.0C568.0 574.0 568.3 571.7 560.0 571.0C551.7 570.3 552.7 572.0 549.0 566.0C545.3 560.0 543.7 559.0 549.0 553.0Z" fill="#f9b772" opacity="0.85"/><path d="M586.0 556.0C591.3 543.3 591.3 551.3 598.0 552.0C604.7 552.7 608.7 542.0 606.0 558.0C603.3 574.0 598.0 589.3 590.0 600.0C582.0 610.7 583.3 604.7 582.0 590.0C580.7 575.3 580.7 568.7 586.0 556.0Z" fill="#ef7d1d" /><path d="M552.0 652.0C554.0 643.3 556.0 645.0 562.0 646.0C568.0 647.0 568.7 647.0 570.0 655.0C571.3 663.0 570.7 664.3 566.0 670.0C561.3 675.7 560.7 678.0 556.0 672.0C551.3 666.0 550.0 660.7 552.0 652.0Z" fill="#f9b772" /><path d="M640.0 505.0C660.0 495.0 660.0 495.0 680.0 500.0C700.0 505.0 696.7 505.0 700.0 520.0C703.3 535.0 706.7 538.3 690.0 545.0C673.3 551.7 673.3 545.0 650.0 540.0C626.7 535.0 623.3 541.7 620.0 530.0C616.7 518.3 620.0 515.0 640.0 505.0Z" fill="#dc3d3c" opacity="0.6"/><path d="M700.0 440.0C711.7 425.0 722.7 425.0 740.0 430.0C757.3 435.0 753.7 438.3 752.0 455.0C750.3 471.7 750.7 473.3 735.0 480.0C719.3 486.7 716.7 488.3 705.0 475.0C693.3 461.7 688.3 455.0 700.0 440.0Z" fill="#dc3d3c" /><path d="M606.0 374.0C620.3 364.3 622.0 371.0 655.0 361.0C688.0 351.0 671.7 353.0 705.0 344.0C738.3 335.0 726.0 337.7 755.0 334.0C784.0 330.3 767.3 331.3 792.0 333.0C816.7 334.7 808.3 333.0 829.0 339.0C849.7 345.0 840.7 341.0 854.0 351.0C867.3 361.0 863.7 359.0 869.0 369.0C874.3 379.0 871.7 373.0 870.0 381.0C868.3 389.0 874.0 389.3 864.0 393.0C854.0 396.7 855.3 389.7 840.0 392.0C824.7 394.3 831.3 406.7 818.0 400.0C804.7 393.3 816.0 384.7 800.0 372.0C784.0 359.3 787.3 361.3 770.0 362.0C752.7 362.7 754.7 354.7 748.0 374.0C741.3 393.3 747.3 394.7 750.0 420.0C752.7 445.3 759.3 433.3 756.0 450.0C752.7 466.7 753.7 468.3 740.0 470.0C726.3 471.7 731.7 465.0 715.0 455.0C698.3 445.0 708.3 450.0 690.0 440.0C671.7 430.0 680.0 436.7 660.0 425.0C640.0 413.3 646.0 416.7 630.0 405.0C614.0 393.3 620.0 400.3 612.0 390.0C604.0 379.7 591.7 383.7 606.0 374.0Z" fill="#ef7d1d" /><path d="M608.0 373.0C620.3 364.3 622.7 370.0 655.0 360.0C687.3 350.0 671.7 352.0 705.0 343.0C738.3 334.0 726.0 336.7 755.0 333.0C784.0 329.3 768.3 330.3 792.0 332.0C815.7 333.7 823.3 334.7 826.0 338.0C828.7 341.3 822.0 339.7 800.0 342.0C778.0 344.3 788.3 340.3 760.0 345.0C731.7 349.7 745.0 347.0 715.0 356.0C685.0 365.0 695.0 362.7 670.0 372.0C645.0 381.3 657.3 379.3 640.0 384.0C622.7 388.7 628.7 389.7 618.0 386.0C607.3 382.3 595.7 381.7 608.0 373.0Z" fill="#f9c89a" /><path d="M812.0 342.0C820.3 339.7 824.7 340.3 840.0 345.0C855.3 349.7 848.3 347.3 858.0 356.0C867.7 364.7 865.0 362.3 869.0 371.0C873.0 379.7 871.7 374.7 870.0 382.0C868.3 389.3 870.7 390.3 864.0 393.0C857.3 395.7 852.0 394.3 850.0 390.0C848.0 385.7 858.0 387.3 858.0 380.0C858.0 372.7 857.7 375.3 850.0 368.0C842.3 360.7 846.7 363.3 835.0 358.0C823.3 352.7 822.7 357.3 815.0 352.0C807.3 346.7 803.7 344.3 812.0 342.0Z" fill="url(#Lg7)" /><path d="M640.0 440.0C646.7 436.7 647.3 437.3 662.0 448.0C676.7 458.7 674.7 457.3 684.0 472.0C693.3 486.7 692.0 484.7 690.0 492.0C688.0 499.3 688.0 499.3 678.0 494.0C668.0 488.7 672.0 488.0 660.0 476.0C648.0 464.0 648.7 470.0 642.0 458.0C635.3 446.0 633.3 443.3 640.0 440.0Z" fill="#ef7d1d" opacity="0.75"/><path d="M700.0 440.0C708.3 433.3 719.0 440.0 735.0 450.0C751.0 460.0 748.0 460.0 748.0 470.0C748.0 480.0 747.7 480.0 735.0 480.0C722.3 480.0 721.7 483.3 710.0 470.0C698.3 456.7 691.7 446.7 700.0 440.0Z" fill="#ef7d1d" opacity="0.8"/><path d="M618.0 462.0C624.0 460.7 624.0 460.0 634.0 470.0C644.0 480.0 645.3 482.0 648.0 492.0C650.7 502.0 649.3 501.3 642.0 500.0C634.7 498.7 634.7 496.7 626.0 488.0C617.3 479.3 618.7 482.7 616.0 474.0C613.3 465.3 612.0 463.3 618.0 462.0Z" fill="#ef7d1d" opacity="0.7"/><path d="M822.0 398.0C826.7 393.3 830.0 391.3 842.0 388.0C854.0 384.7 850.0 386.0 858.0 388.0C866.0 390.0 865.3 391.0 866.0 394.0C866.7 397.0 866.7 397.0 860.0 397.0C853.3 397.0 856.7 392.3 846.0 394.0C835.3 395.7 836.0 400.7 828.0 402.0C820.0 403.3 817.3 402.7 822.0 398.0Z" fill="#1a1a1d" opacity="0.9"/><path d="M756.0 462.0C764.7 458.7 766.7 460.7 764.0 466.0C761.3 471.3 761.3 469.3 748.0 478.0C734.7 486.7 734.3 487.7 724.0 492.0C713.7 496.3 712.3 496.3 717.0 491.0C721.7 485.7 725.0 485.7 738.0 476.0C751.0 466.3 747.3 465.3 756.0 462.0Z" fill="#1a1a1d" opacity="0.9"/><path d="M736.0 480.0C739.7 476.3 742.0 478.3 742.0 484.0C742.0 489.7 739.7 493.3 736.0 497.0C732.3 500.7 731.0 500.7 731.0 495.0C731.0 489.3 732.3 483.7 736.0 480.0Z" fill="#1a1a1d" opacity="0.9"/><path d="M749.7 374.0C755.9 364.9 752.9 367.3 767.0 364.0C781.1 360.7 775.4 361.5 792.0 364.0C808.6 366.5 807.6 365.6 816.7 371.4C825.8 377.2 820.0 373.0 819.2 381.3C818.4 389.6 822.6 386.3 814.3 396.2C806.0 406.1 807.6 401.1 794.4 411.0C781.2 420.9 784.5 414.3 774.6 426.0C764.7 437.7 769.6 435.2 764.6 446.0C759.6 456.8 763.4 460.0 759.7 458.3C756.0 456.6 756.0 455.1 753.5 441.0C751.0 426.9 753.9 432.6 752.2 416.0C750.5 399.4 749.3 405.3 748.5 391.3C747.7 377.3 743.5 383.1 749.7 374.0Z" fill="#ffffff" /><path d="M751.0 398.0Q782 393.0 812.0 384.0" stroke="#e05a3a" stroke-width="1.1" fill="none" opacity="0.85"/><path d="M751.8 402.0Q781 397.0 807.8 388.0" stroke="#e05a3a" stroke-width="1.1" fill="none" opacity="0.85"/><path d="M752.6 406.0Q780 401.0 803.6 392.0" stroke="#e05a3a" stroke-width="1.1" fill="none" opacity="0.85"/><path d="M753.4 410.0Q779 405.0 799.4 396.0" stroke="#e05a3a" stroke-width="1.1" fill="none" opacity="0.85"/><path d="M754.2 414.0Q778 409.0 795.2 400.0" stroke="#e05a3a" stroke-width="1.1" fill="none" opacity="0.85"/><path d="M755.0 418.0Q777 413.0 791.0 404.0" stroke="#e05a3a" stroke-width="1.1" fill="none" opacity="0.85"/><path d="M755.8 422.0Q776 417.0 786.8 408.0" stroke="#e05a3a" stroke-width="1.1" fill="none" opacity="0.85"/><path d="M794.0 367.0L797.0 394.0" stroke="#e05a3a" stroke-width="1" fill="none" opacity="0.75"/><path d="M798.6 367.8L801.2 391.4" stroke="#e05a3a" stroke-width="1" fill="none" opacity="0.75"/><path d="M803.2 368.6L805.4 388.8" stroke="#e05a3a" stroke-width="1" fill="none" opacity="0.75"/><path d="M807.8 369.4L809.6 386.2" stroke="#e05a3a" stroke-width="1" fill="none" opacity="0.75"/><path d="M812.4 370.2L813.8 383.6" stroke="#e05a3a" stroke-width="1" fill="none" opacity="0.75"/><circle cx="775.3" cy="376.4" r="7.4" fill="#ffffff"/><circle cx="775.3" cy="376.4" r="6" fill="#1a3e6e"/><circle cx="775.6" cy="376.7" r="3.4" fill="#1a1a1d"/><path d="M767.0 456.0C766.1 449.3 767.8 451.3 772.0 443.0C776.2 434.7 773.8 438.3 779.5 431.0C785.2 423.7 782.4 426.8 789.0 421.0C795.6 415.2 793.7 413.3 799.4 413.6C805.1 413.9 802.8 416.2 806.0 422.0C809.2 427.8 807.0 422.3 809.0 431.0C811.0 439.7 809.3 439.7 812.0 448.0C814.7 456.3 814.0 451.7 817.0 456.0C820.0 460.3 824.7 458.3 821.0 461.0C817.3 463.7 815.7 462.4 806.0 464.0C796.3 465.6 802.5 466.0 792.0 465.7C781.5 465.4 782.9 466.4 774.6 463.2C766.3 460.0 767.9 462.7 767.0 456.0Z" fill="url(#Lg8)" /><path d="M799.4 413.0C803.0 400.0 802.7 408.7 816.7 401.0C830.7 393.3 828.3 392.4 841.5 390.0C854.7 387.6 850.4 385.0 856.4 393.7C862.4 402.4 860.2 400.2 859.4 416.0C858.6 431.8 860.0 424.4 854.0 441.0C848.0 457.6 853.1 450.9 841.5 465.7C829.9 480.5 831.6 476.0 819.2 485.5C806.8 495.0 805.9 495.0 804.3 494.2C802.7 493.4 809.3 492.5 814.3 483.0C819.3 473.5 816.6 476.0 819.2 465.7C821.8 455.4 826.4 460.6 822.0 452.0C817.6 443.4 813.5 453.0 806.0 440.0C798.5 427.0 795.8 426.0 799.4 413.0Z" fill="url(#Lg9)" /><path d="M817.0 472.0C817.4 476.3 818.5 475.6 814.3 483.0C810.1 490.4 805.4 495.2 804.3 494.2C803.2 493.2 808.1 488.1 811.0 480.0C813.9 471.9 811.0 472.7 813.0 470.0C815.0 467.3 816.6 467.7 817.0 472.0Z" fill="#1a3e6e" opacity="0.9"/><path d="M557.0 675.0C561.0 669.7 560.3 671.7 570.0 669.0C579.7 666.3 574.7 667.0 586.0 667.0C597.3 667.0 593.3 666.3 604.0 669.0C614.7 671.7 610.7 668.0 618.0 675.0C625.3 682.0 623.0 677.7 626.0 690.0C629.0 702.3 627.3 699.0 627.0 712.0C626.7 725.0 629.3 717.7 625.0 729.0C620.7 740.3 620.0 739.0 614.0 746.0C608.0 753.0 610.3 752.7 607.0 750.0C603.7 747.3 607.0 739.3 604.0 738.0C601.0 736.7 603.0 743.3 598.0 746.0C593.0 748.7 591.3 754.0 589.0 746.0C586.7 738.0 591.0 737.7 591.0 722.0C591.0 706.3 595.7 708.0 589.0 699.0C582.3 690.0 581.3 699.7 571.0 695.0C560.7 690.3 562.7 691.7 558.0 685.0C553.3 678.3 553.0 680.3 557.0 675.0Z" fill="url(#Lg10)" /><path d="M634.0 693.0C635.0 686.0 637.0 688.7 646.0 684.0C655.0 679.3 649.7 681.7 661.0 679.0C672.3 676.3 669.3 676.7 680.0 676.0C690.7 675.3 685.0 672.3 693.0 677.0C701.0 681.7 700.0 679.0 704.0 690.0C708.0 701.0 706.3 697.0 705.0 710.0C703.7 723.0 705.0 717.3 700.0 729.0C695.0 740.7 696.0 736.7 690.0 745.0C684.0 753.3 688.0 752.3 682.0 754.0C676.0 755.7 673.3 758.0 672.0 750.0C670.7 742.0 679.3 735.7 678.0 730.0C676.7 724.3 673.3 735.7 668.0 733.0C662.7 730.3 662.0 730.7 662.0 722.0C662.0 713.3 670.3 713.0 668.0 707.0C665.7 701.0 663.3 704.7 655.0 704.0C646.7 703.3 650.0 708.7 643.0 705.0C636.0 701.3 633.0 700.0 634.0 693.0Z" fill="url(#Lg11)" /><path d="M601 700Q606 720 604 738" stroke="#1a3e6e" stroke-width="1.6" fill="none" opacity="0.7"/><path d="M612 690Q620 715 614 740" stroke="#1a3e6e" stroke-width="1.6" fill="none" opacity="0.7"/><path d="M676 700Q682 716 678 730" stroke="#1a3e6e" stroke-width="1.6" fill="none" opacity="0.7"/><path d="M690 690Q698 712 690 742" stroke="#1a3e6e" stroke-width="1.6" fill="none" opacity="0.7"/><path d="M590 744Q588 753 597 753" stroke="#1a3e6e" stroke-width="2.2" fill="none" stroke-linecap="round"/><path d="M606 748Q610 757 599 756" stroke="#1a3e6e" stroke-width="2.2" fill="none" stroke-linecap="round"/><path d="M663 722Q651 735 662 746Q670 749 675 743" stroke="#1a3e6e" stroke-width="2.2" fill="none" stroke-linecap="round"/><path d="M682 753Q676 761 664 758" stroke="#1a3e6e" stroke-width="2.2" fill="none" stroke-linecap="round"/><path d="M418.0 500.0C430.7 490.0 427.7 502.7 460.0 500.0C492.3 497.3 485.7 494.7 515.0 492.0C544.3 489.3 540.3 479.3 548.0 492.0C555.7 504.7 547.3 507.3 538.0 530.0C528.7 552.7 531.7 540.7 520.0 560.0C508.3 579.3 514.7 583.0 503.0 588.0C491.3 593.0 497.7 584.3 485.0 575.0C472.3 565.7 480.0 570.0 465.0 560.0C450.0 550.0 454.3 555.0 440.0 545.0C425.7 535.0 429.3 545.0 422.0 530.0C414.7 515.0 405.3 510.0 418.0 500.0Z" fill="#1a1a1d" /><path d="M520.4 523.0L509.2 566.6C506.7 575.3 500.3 577.8 494.0 576.0C488.2 574.4 483.5 569.2 485.8 561.2L499.6 517.0Z" fill="url(#Lg12)" stroke="#1a1a1d" stroke-width="1.8" stroke-linejoin="round"/><path d="M496.7 573.1C499.6 575.0 499.2 574.0 502.8 569.2C506.4 564.3 504.9 568.9 507.4 558.6C510.0 548.3 511.1 546.6 510.4 538.3C509.7 530.0 509.9 528.0 505.4 533.8C501.0 539.6 500.8 545.8 497.1 555.7C493.3 565.6 494.2 557.7 494.1 563.5C493.9 569.4 493.8 571.3 496.7 573.1Z" fill="url(#Lg13)" opacity="0.57"/><path d="M492.2 569.2L504.9 524.6" stroke="#1a3e6e" stroke-width="1.6" opacity="0.9"/><path d="M503.5 541.8L489.0 590.1C485.8 599.8 478.5 602.3 471.5 600.0C465.1 597.9 460.0 591.9 462.9 582.9L480.5 534.2Z" fill="url(#Lg14)" stroke="#1a1a1d" stroke-width="1.8" stroke-linejoin="round"/><path d="M474.5 597.3C477.8 599.4 477.1 599.2 481.4 593.8C485.7 588.4 484.0 592.9 487.4 581.2C490.8 569.4 492.0 567.8 491.6 558.5C491.2 549.2 491.5 547.0 486.2 553.3C481.0 559.6 480.7 566.0 475.9 577.4C471.0 588.7 472.1 580.8 471.7 587.4C471.2 594.1 471.3 595.2 474.5 597.3Z" fill="url(#Lg15)" opacity="0.62"/><path d="M469.5 593.0L486.1 542.9" stroke="#1a3e6e" stroke-width="1.6" opacity="0.9"/><path d="M487.4 543.3L460.9 603.6C456.5 613.1 448.7 614.9 441.7 611.6C435.4 608.6 430.8 601.9 434.9 593.0L464.6 532.7Z" fill="url(#Lg16)" stroke="#1a1a1d" stroke-width="1.8" stroke-linejoin="round"/><path d="M445.1 609.3C448.2 611.9 446.7 613.2 452.5 606.7C458.2 600.2 456.0 604.5 462.3 589.9C468.6 575.2 469.9 574.0 471.4 562.7C472.9 551.5 473.6 548.8 466.8 556.1C460.0 563.4 458.8 570.2 450.9 584.5C443.1 598.9 445.2 590.8 443.2 599.1C441.3 607.3 442.0 606.8 445.1 609.3Z" fill="url(#Lg17)" opacity="0.68"/><path d="M440.4 604.4L468.8 543.6" stroke="#1a3e6e" stroke-width="1.6" opacity="0.9"/><path d="M471.6 533.9L435.2 608.4C430.2 618.1 422.1 619.6 415.0 616.0C408.5 612.7 404.1 605.5 408.7 596.5L448.4 522.1Z" fill="url(#Lg18)" stroke="#1a1a1d" stroke-width="1.8" stroke-linejoin="round"/><path d="M418.5 613.9C421.6 616.6 419.2 619.7 426.2 611.6C433.2 603.6 430.8 607.8 439.5 589.7C448.2 571.6 449.5 570.7 452.3 557.4C455.2 544.0 456.2 540.9 448.1 549.7C440.0 558.5 438.3 565.8 427.9 583.7C417.5 601.7 420.0 593.4 416.8 603.5C413.7 613.5 415.4 611.2 418.5 613.9Z" fill="url(#Lg19)" opacity="0.75"/><path d="M413.9 608.7L451.6 534.8" stroke="#1a3e6e" stroke-width="1.6" opacity="0.9"/><path d="M455.2 526.1L403.3 593.6C396.5 602.1 388.2 602.0 382.0 597.0C376.3 592.5 373.4 584.6 379.7 576.6L434.8 509.9Z" fill="url(#Lg20)" stroke="#1a1a1d" stroke-width="1.8" stroke-linejoin="round"/><path d="M385.9 595.6C388.4 598.9 385.2 601.6 393.8 594.9C402.5 588.2 399.3 591.9 411.8 575.5C424.2 559.1 425.6 558.5 431.2 545.8C436.8 533.0 438.6 530.1 428.7 537.3C418.8 544.5 415.7 551.4 401.6 567.4C387.4 583.3 391.5 575.7 386.3 585.1C381.1 594.5 383.4 592.3 385.9 595.6Z" fill="url(#Lg21)" opacity="0.78"/><path d="M382.3 589.6L435.3 523.2" stroke="#1a3e6e" stroke-width="1.6" opacity="0.9"/><path d="M437.9 514.8L375.0 580.8C366.8 589.0 358.1 588.0 352.0 582.0C346.5 576.6 344.2 567.8 351.9 560.1L418.1 495.2Z" fill="url(#Lg22)" stroke="#1a1a1d" stroke-width="1.8" stroke-linejoin="round"/><path d="M356.1 581.1C358.5 584.9 354.4 587.8 364.4 581.6C374.4 575.4 370.8 578.6 386.1 562.5C401.4 546.3 402.7 545.9 410.2 533.0C417.6 520.1 419.8 517.2 408.4 523.7C397.1 530.3 393.2 537.1 376.2 552.7C359.1 568.2 364.0 560.9 357.3 570.4C350.7 579.9 353.8 577.4 356.1 581.1Z" fill="url(#Lg23)" opacity="0.75"/><path d="M352.9 574.5L417.1 509.4" stroke="#1a3e6e" stroke-width="1.6" opacity="0.9"/><path d="M429.2 490.5L350.0 561.5C341.3 569.1 332.6 567.4 327.0 561.0C321.9 555.2 320.3 546.3 328.5 539.1L410.8 469.5Z" fill="url(#Lg24)" stroke="#1a1a1d" stroke-width="1.8" stroke-linejoin="round"/><path d="M331.2 560.5C333.2 564.3 327.6 568.1 339.4 561.5C351.2 554.9 347.4 557.9 366.5 540.6C385.6 523.3 386.8 523.2 396.7 509.6C406.6 495.9 409.4 492.8 396.2 499.7C383.1 506.5 378.3 513.4 357.3 530.1C336.3 546.8 341.9 539.7 333.2 549.8C324.5 560.0 329.1 556.6 331.2 560.5Z" fill="url(#Lg25)" opacity="0.78"/><path d="M328.5 553.6L407.6 484.6" stroke="#1a3e6e" stroke-width="1.6" opacity="0.9"/><path d="M417.1 469.2L326.7 544.4C317.4 551.9 308.5 549.8 303.0 543.0C298.0 536.8 296.7 527.5 305.4 520.5L398.9 446.8Z" fill="url(#Lg26)" stroke="#1a1a1d" stroke-width="1.8" stroke-linejoin="round"/><path d="M307.2 542.7C309.2 546.7 302.4 551.2 315.5 544.2C328.7 537.2 324.8 540.1 346.6 521.7C368.4 503.3 369.5 503.5 381.0 489.1C392.6 474.7 395.7 471.5 381.2 478.6C366.7 485.8 361.4 492.7 337.5 510.5C313.6 528.3 319.6 521.3 309.5 532.0C299.4 542.7 305.2 538.6 307.2 542.7Z" fill="url(#Lg27)" opacity="0.85"/><path d="M304.6 535.5L394.5 462.8" stroke="#1a3e6e" stroke-width="1.6" opacity="0.9"/><path d="M400.6 447.6L291.3 530.4C281.6 537.5 272.8 535.1 267.6 528.0C262.8 521.6 261.9 512.3 271.0 505.6L383.4 424.4Z" fill="url(#Lg28)" stroke="#1a1a1d" stroke-width="1.8" stroke-linejoin="round"/><path d="M271.8 527.8C273.7 532.0 264.8 537.5 280.1 529.7C295.3 522.0 291.3 524.7 317.6 504.5C343.9 484.4 344.7 484.8 359.0 469.4C373.2 454.0 377.1 450.5 360.4 458.4C343.8 466.2 337.7 473.3 309.0 493.0C280.4 512.6 287.0 505.6 274.6 517.3C262.2 528.9 270.0 523.7 271.8 527.8Z" fill="url(#Lg29)" opacity="0.93"/><path d="M269.6 520.6L376.7 441.3" stroke="#1a3e6e" stroke-width="1.6" opacity="0.9"/><path d="M424.0 518.0C429.0 506.7 440.0 505.3 460.0 512.0C480.0 518.7 466.3 541.3 484.0 538.0C501.7 534.7 492.3 517.0 513.0 502.0C533.7 487.0 538.0 484.3 546.0 493.0C554.0 501.7 546.7 506.3 537.0 528.0C527.3 549.7 528.3 538.7 517.0 558.0C505.7 577.3 511.3 584.7 503.0 586.0C494.7 587.3 503.0 573.0 492.0 562.0C481.0 551.0 485.7 558.3 470.0 553.0C454.3 547.7 460.3 557.7 445.0 546.0C429.7 534.3 419.0 529.3 424.0 518.0Z" fill="#1a1a1d" /><path d="M250.0 496.0C252.3 490.3 245.0 495.7 257.0 479.0C269.0 462.3 264.7 466.3 286.0 446.0C307.3 425.7 295.0 434.7 321.0 418.0C347.0 401.3 349.7 403.3 364.0 396.0L394.0 439.0C376.0 448.3 372.7 447.7 340.0 467.0C307.3 486.3 320.7 483.7 296.0 497.0C271.3 510.3 281.3 507.3 266.0 507.0C250.7 506.7 255.3 499.7 250.0 496.0Z" fill="url(#Lg30)" stroke="#16263f" stroke-width="1"/><path d="M250.0 496.0C252.3 490.3 245.0 495.7 257.0 479.0C269.0 462.3 264.7 466.3 286.0 446.0C307.3 425.7 295.0 434.7 321.0 418.0C347.0 401.3 349.7 403.3 364.0 396.0" stroke="#1a3e6e" stroke-width="7" fill="none" stroke-linecap="round"/><path d="M250.0 496.0C252.3 490.3 245.0 495.7 257.0 479.0C269.0 462.3 264.7 466.3 286.0 446.0C307.3 425.7 295.0 434.7 321.0 418.0C347.0 401.3 349.7 403.3 364.0 396.0" stroke="#16263f" stroke-width="2.2" fill="none" stroke-linecap="round"/><path d="M198.0 471.0C200.3 465.3 194.7 469.3 205.0 454.0C215.3 438.7 209.3 444.3 229.0 425.0C248.7 405.7 236.7 412.7 264.0 396.0C291.3 379.3 279.0 387.0 311.0 375.0C343.0 363.0 343.7 365.0 360.0 360.0L364.0 401.0C344.3 411.7 335.7 414.3 305.0 433.0C274.3 451.7 292.0 443.7 272.0 457.0C252.0 470.3 264.3 465.3 245.0 473.0C225.7 480.7 229.7 480.7 214.0 480.0C198.3 479.3 203.3 474.0 198.0 471.0Z" fill="url(#Lg31)" /><path d="M198.0 471.0C200.3 465.3 194.7 469.3 205.0 454.0C215.3 438.7 209.3 444.3 229.0 425.0C248.7 405.7 236.7 412.7 264.0 396.0C291.3 379.3 279.0 387.0 311.0 375.0C343.0 363.0 343.7 365.0 360.0 360.0" stroke="#1a3e6e" stroke-width="8" fill="none" stroke-linecap="round"/><path d="M198.0 471.0C200.3 465.3 194.7 469.3 205.0 454.0C215.3 438.7 209.3 444.3 229.0 425.0C248.7 405.7 236.7 412.7 264.0 396.0C291.3 379.3 279.0 387.0 311.0 375.0C343.0 363.0 343.7 365.0 360.0 360.0" stroke="#1a1a1d" stroke-width="2.6" fill="none" stroke-linecap="round"/><path d="M268.0 398.0C276.0 387.0 271.0 394.0 290.0 386.0C309.0 378.0 301.0 382.0 325.0 374.0C349.0 366.0 349.0 356.0 362.0 362.0C375.0 368.0 374.7 378.0 364.0 392.0C353.3 406.0 351.3 395.7 330.0 404.0C308.7 412.3 316.7 409.0 300.0 417.0C283.3 425.0 291.3 427.3 280.0 428.0C268.7 428.7 270.0 429.0 266.0 419.0C262.0 409.0 260.0 409.0 268.0 398.0Z" fill="url(#Lg32)" /><path d="M134.0 427.0C139.3 420.3 135.0 421.3 150.0 407.0C165.0 392.7 157.7 398.3 179.0 384.0C200.3 369.7 185.7 377.7 214.0 364.0C242.3 350.3 225.3 356.0 264.0 343.0C302.7 330.0 308.0 331.0 330.0 325.0L270.0 393.0C261.7 395.7 261.7 394.3 245.0 401.0C228.3 407.7 235.7 403.7 220.0 413.0C204.3 422.3 212.0 421.0 198.0 429.0C184.0 437.0 192.7 434.0 178.0 437.0C163.3 440.0 168.7 441.3 154.0 438.0C139.3 434.7 140.7 430.7 134.0 427.0Z" fill="url(#Lg33)" /><path d="M134.0 427.0C139.3 420.3 135.0 421.3 150.0 407.0C165.0 392.7 157.7 398.3 179.0 384.0C200.3 369.7 185.7 377.7 214.0 364.0C242.3 350.3 225.3 356.0 264.0 343.0C302.7 330.0 308.0 331.0 330.0 325.0" stroke="#1a3e6e" stroke-width="8" fill="none" stroke-linecap="round"/><path d="M134.0 427.0C139.3 420.3 135.0 421.3 150.0 407.0C165.0 392.7 157.7 398.3 179.0 384.0C200.3 369.7 185.7 377.7 214.0 364.0C242.3 350.3 225.3 356.0 264.0 343.0C302.7 330.0 308.0 331.0 330.0 325.0" stroke="#1a1a1d" stroke-width="2.6" fill="none" stroke-linecap="round"/><path d="M216.0 378.0C222.3 366.0 215.3 372.7 232.0 362.0C248.7 351.3 233.3 357.7 266.0 346.0C298.7 334.3 307.0 321.7 330.0 327.0C353.0 332.3 345.0 345.3 335.0 362.0C325.0 378.7 321.0 368.0 300.0 377.0C279.0 386.0 288.0 382.0 272.0 389.0C256.0 396.0 265.3 391.7 252.0 398.0C238.7 404.3 242.7 404.0 232.0 408.0C221.3 412.0 226.3 413.3 220.0 410.0C213.7 406.7 214.3 408.7 213.0 398.0C211.7 387.3 209.7 390.0 216.0 378.0Z" fill="url(#Lg34)" /><path d="M70.7 360.1C84.4 355.6 85.6 355.2 111.7 346.5C137.8 337.8 124.1 342.4 148.9 334.1C173.7 325.8 162.9 328.3 186.1 321.7C209.3 315.1 197.7 318.4 218.4 314.2C239.1 310.0 238.2 310.9 248.1 309.2L230.0 345.0C215.4 348.8 211.5 348.5 186.1 356.4C160.7 364.3 178.6 363.0 153.8 368.8C129.0 374.6 134.0 373.8 111.7 373.8C89.4 373.8 100.5 373.4 86.8 368.8C73.1 364.2 76.1 363.0 70.7 360.1Z" fill="url(#Lg35)" /><path d="M70.7 360.1C84.4 355.6 85.6 355.2 111.7 346.5C137.8 337.8 124.1 342.4 148.9 334.1C173.7 325.8 162.9 328.3 186.1 321.7C209.3 315.1 197.7 318.4 218.4 314.2C239.1 310.0 238.2 310.9 248.1 309.2" stroke="#1a3e6e" stroke-width="2.6" fill="none" stroke-linecap="round"/><path d="M134.2 342.5L94.9 370.0" stroke="#1a3e6e" stroke-width="1.6" opacity="0.55"/><path d="M150.8 337.0L105.9 372.2" stroke="#1a3e6e" stroke-width="1.6" opacity="0.55"/><path d="M167.3 331.5L122.7 371.1" stroke="#1a3e6e" stroke-width="1.6" opacity="0.55"/><path d="M183.8 326.0L141.4 368.9" stroke="#1a3e6e" stroke-width="1.6" opacity="0.55"/><path d="M199.3 321.5L158.0 365.0" stroke="#1a3e6e" stroke-width="1.6" opacity="0.55"/><path d="M213.6 318.2L172.3 359.5" stroke="#1a3e6e" stroke-width="1.6" opacity="0.55"/><path d="M227.7 315.1L188.0 354.1" stroke="#1a3e6e" stroke-width="1.6" opacity="0.55"/><path d="M240.9 312.9L207.5 349.1" stroke="#1a3e6e" stroke-width="1.6" opacity="0.55"/><path d="M196.0 324.0C206.0 315.7 200.7 320.0 218.0 315.0C235.3 310.0 210.7 314.7 248.0 309.0C285.3 303.3 301.0 291.0 330.0 298.0C359.0 305.0 345.0 317.3 335.0 330.0C325.0 342.7 324.0 332.3 300.0 336.0C276.0 339.7 288.7 336.7 263.0 341.0C237.3 345.3 245.0 344.0 223.0 349.0C201.0 354.0 209.3 354.3 197.0 356.0C184.7 357.7 189.0 359.3 186.0 354.0C183.0 348.7 184.7 350.0 188.0 340.0C191.3 330.0 186.0 332.3 196.0 324.0Z" fill="url(#Lg36)" /><path d="M236.0 322.0C242.7 316.7 244.0 319.3 262.0 316.0C280.0 312.7 278.7 310.7 290.0 312.0C301.3 313.3 302.7 315.3 296.0 320.0C289.3 324.7 288.0 322.0 270.0 326.0C252.0 330.0 253.3 333.3 242.0 332.0C230.7 330.7 229.3 327.3 236.0 322.0Z" fill="#ef7d1d" opacity="0.75"/><path d="M40.9 269.5C52.1 272.4 46.7 274.0 74.4 278.2C102.1 282.4 91.0 282.0 124.1 282.0C157.2 282.0 148.9 280.7 173.7 278.2C198.5 275.7 173.7 276.6 198.5 274.5C223.3 272.4 231.6 272.8 248.1 272.0L183.6 306.8C172.0 306.0 168.7 303.1 148.9 304.3C129.1 305.5 138.2 308.9 124.1 310.5C110.0 312.1 123.3 313.8 106.7 309.2C90.1 304.6 92.2 305.1 74.4 296.8C56.6 288.5 64.5 293.5 53.3 284.4C42.1 275.3 45.0 274.5 40.9 269.5Z" fill="url(#Lg37)" /><path d="M40.9 269.5C52.1 272.4 46.7 274.0 74.4 278.2C102.1 282.4 91.0 282.0 124.1 282.0C157.2 282.0 148.9 280.7 173.7 278.2C198.5 275.7 173.7 276.6 198.5 274.5C223.3 272.4 231.6 272.8 248.1 272.0" stroke="#1a3e6e" stroke-width="2.6" fill="none" stroke-linecap="round"/><path d="M102.5 281.4L59.7 288.9" stroke="#1a3e6e" stroke-width="1.6" opacity="0.55"/><path d="M124.6 283.1L69.1 294.4" stroke="#1a3e6e" stroke-width="1.6" opacity="0.55"/><path d="M146.6 282.2L82.2 299.9" stroke="#1a3e6e" stroke-width="1.6" opacity="0.55"/><path d="M168.7 280.5L96.5 305.4" stroke="#1a3e6e" stroke-width="1.6" opacity="0.55"/><path d="M185.2 278.9L107.6 308.5" stroke="#1a3e6e" stroke-width="1.6" opacity="0.55"/><path d="M196.2 277.2L115.3 309.1" stroke="#1a3e6e" stroke-width="1.6" opacity="0.55"/><path d="M210.0 275.7L123.9 308.8" stroke="#1a3e6e" stroke-width="1.6" opacity="0.55"/><path d="M232.1 274.6L134.9 306.1" stroke="#1a3e6e" stroke-width="1.6" opacity="0.55"/><path d="M198.0 277.0C218.7 271.0 204.0 275.0 248.0 272.0C292.0 269.0 301.0 258.7 330.0 268.0C359.0 277.3 345.0 288.7 335.0 300.0C325.0 311.3 322.3 301.0 300.0 302.0C277.7 303.0 285.3 302.2 268.0 303.0C250.7 303.8 267.0 302.3 248.0 304.5C229.0 306.7 230.3 308.0 211.0 309.5C191.7 311.0 199.3 310.5 190.0 309.0C180.7 307.5 184.3 311.3 183.0 305.0C181.7 298.7 181.0 299.3 186.0 290.0C191.0 280.7 177.3 283.0 198.0 277.0Z" fill="url(#Lg38)" /><path d="M210.0 301.0C211.3 293.3 212.0 292.0 224.0 285.0C236.0 278.0 236.7 278.7 246.0 280.0C255.3 281.3 254.7 281.3 252.0 289.0C249.3 296.7 248.7 296.7 238.0 303.0C227.3 309.3 229.3 308.7 220.0 308.0C210.7 307.3 208.7 308.7 210.0 301.0Z" fill="#ef7d1d" opacity="0.9"/><path d="M262.0 282.0C268.7 277.7 278.7 277.7 290.0 279.0C301.3 280.3 302.7 281.7 296.0 286.0C289.3 290.3 281.3 293.3 270.0 292.0C258.7 290.7 255.3 286.3 262.0 282.0Z" fill="#ef7d1d" opacity="0.6"/><path d="M29.8 205.0C40.5 208.3 38.8 208.4 62.0 215.0C85.2 221.6 73.6 218.7 99.3 224.9C125.0 231.1 114.2 230.3 139.0 233.6C163.8 236.9 151.4 234.4 173.7 234.8C196.0 235.2 195.2 234.8 206.0 234.8L160.0 262.0C148.9 261.2 143.5 261.2 126.6 259.6C109.7 258.0 122.5 260.0 109.2 257.1C95.9 254.2 102.5 256.7 86.8 250.9C71.1 245.1 77.7 249.3 62.0 239.8C46.3 230.3 50.4 234.0 39.7 222.4C29.0 210.8 33.1 210.8 29.8 205.0Z" fill="url(#Lg39)" /><path d="M29.8 205.0C40.5 208.3 38.8 208.4 62.0 215.0C85.2 221.6 73.6 218.7 99.3 224.9C125.0 231.1 114.2 230.3 139.0 233.6C163.8 236.9 151.4 234.4 173.7 234.8C196.0 235.2 195.2 234.8 206.0 234.8" stroke="#1a3e6e" stroke-width="2.8" fill="none" stroke-linecap="round"/><path d="M86.7 221.4L47.9 230.1" stroke="#1a3e6e" stroke-width="1.6" opacity="0.55"/><path d="M105.3 226.4L59.0 238.8" stroke="#1a3e6e" stroke-width="1.6" opacity="0.55"/><path d="M125.2 230.8L71.4 244.4" stroke="#1a3e6e" stroke-width="1.6" opacity="0.55"/><path d="M145.0 235.1L83.8 249.9" stroke="#1a3e6e" stroke-width="1.6" opacity="0.55"/><path d="M162.3 235.7L95.0 253.0" stroke="#1a3e6e" stroke-width="1.6" opacity="0.55"/><path d="M179.7 236.3L106.2 256.1" stroke="#1a3e6e" stroke-width="1.6" opacity="0.55"/><path d="M195.8 236.3L114.9 257.4" stroke="#1a3e6e" stroke-width="1.6" opacity="0.55"/><path d="M139.0 234.0C155.6 230.9 151.4 234.5 173.7 234.8C196.0 235.1 177.2 233.7 206.0 234.8C234.8 235.9 218.7 235.6 260.0 238.0C301.3 240.4 305.0 230.7 330.0 242.0C355.0 253.3 348.3 261.7 335.0 272.0C321.7 282.3 319.0 273.0 290.0 273.0C261.0 273.0 277.7 273.2 248.0 272.0C218.3 270.8 225.8 272.0 201.0 269.5C176.2 267.0 197.7 267.9 173.7 264.6C149.7 261.3 147.2 263.1 129.0 259.6C110.8 256.1 120.7 259.2 119.0 254.0C117.3 248.8 117.3 250.7 124.0 244.0C130.7 237.3 122.4 237.1 139.0 234.0Z" fill="url(#Lg40)" /><path d="M165.0 256.0C178.3 253.7 173.3 254.7 200.0 255.0C226.7 255.3 221.7 255.0 245.0 257.0C268.3 259.0 264.3 257.0 270.0 261.0C275.7 265.0 277.0 266.7 262.0 269.0C247.0 271.3 250.7 269.3 225.0 268.0C199.3 266.7 206.7 267.0 185.0 265.0C163.3 263.0 166.7 265.0 160.0 262.0C153.3 259.0 151.7 258.3 165.0 256.0Z" fill="#ef7d1d" opacity="0.9"/><path d="M130.0 246.0C133.3 241.7 140.0 241.7 150.0 243.0C160.0 244.3 163.3 245.7 160.0 250.0C156.7 254.3 150.0 257.3 140.0 256.0C130.0 254.7 126.7 250.3 130.0 246.0Z" fill="#ef7d1d" opacity="0.7"/><path d="M22.3 126.9C31.4 133.9 28.1 135.2 49.6 148.0C71.1 160.8 66.1 156.2 86.8 165.3C107.5 174.4 91.0 167.8 111.7 175.3C132.4 182.8 124.1 181.1 148.9 187.7C173.7 194.3 160.5 191.0 186.1 195.1C211.7 199.2 187.8 196.7 225.8 200.0C263.8 203.3 275.3 203.3 300.0 205.0L300.0 245.0C268.7 241.6 254.7 245.6 206.0 234.8C157.3 224.0 179.5 221.2 153.8 212.5C128.1 203.8 145.5 213.7 129.0 208.7C112.5 203.7 122.4 207.1 104.2 197.6C86.0 188.1 92.6 191.0 74.4 180.2C56.2 169.4 63.6 176.0 49.6 165.3C35.6 154.6 41.4 160.8 32.3 148.0C23.2 135.2 25.6 133.9 22.3 126.9Z" fill="url(#Lg41)" /><path d="M22.3 126.9C31.4 133.9 28.1 135.2 49.6 148.0C71.1 160.8 66.1 156.2 86.8 165.3C107.5 174.4 91.0 167.8 111.7 175.3C132.4 182.8 136.5 183.6 148.9 187.7" stroke="#1a3e6e" stroke-width="2.5" fill="none" stroke-linecap="round"/><path d="M48.4 72.3C57.1 80.1 53.3 79.7 74.4 95.8C95.5 111.9 86.9 105.8 111.7 120.7C136.5 135.6 120.0 125.6 148.9 140.5C177.8 155.4 165.4 150.8 198.5 165.3C231.6 179.8 215.0 173.1 248.1 183.9C281.2 194.7 281.2 193.0 297.8 197.6L300.0 212.0C286.7 210.0 285.6 210.8 260.0 206.0C234.4 201.2 248.8 205.4 223.3 197.6C197.8 189.8 215.0 197.6 183.6 182.7C152.2 167.8 157.1 169.4 129.0 152.9C100.9 136.4 117.5 146.3 99.3 133.1C81.1 119.9 89.7 127.3 74.4 113.2C59.1 99.1 62.0 104.5 53.3 90.9C44.6 77.3 50.0 78.5 48.4 72.3Z" fill="url(#Lg42)" /><path d="M120.0 146.0C130.7 150.3 128.3 151.7 150.0 163.0C171.7 174.3 163.3 170.3 185.0 180.0C206.7 189.7 208.3 187.7 215.0 192.0C221.7 196.3 220.0 197.0 205.0 193.0C190.0 189.0 192.3 190.0 170.0 180.0C147.7 170.0 155.3 173.0 138.0 163.0C120.7 153.0 124.0 155.7 118.0 150.0C112.0 144.3 109.3 141.7 120.0 146.0Z" fill="#ef7d1d" opacity="0.95"/><path d="M82.0 108.0C84.7 108.0 86.7 110.0 100.0 118.0C113.3 126.0 118.0 128.0 122.0 132.0C126.0 136.0 122.0 134.7 112.0 130.0C102.0 125.3 102.0 125.3 92.0 118.0C82.0 110.7 79.3 108.0 82.0 108.0Z" fill="#ef7d1d" opacity="0.8"/><path d="M48.4 72.3C57.1 80.1 53.3 79.7 74.4 95.8C95.5 111.9 86.9 105.8 111.7 120.7C136.5 135.6 120.0 125.6 148.9 140.5C177.8 155.4 165.4 150.8 198.5 165.3C231.6 179.8 231.6 177.7 248.1 183.9" stroke="#1a3e6e" stroke-width="2.2" fill="none" stroke-linecap="round"/><path d="M80.0 112.0C89.7 116.0 85.0 116.7 105.0 130.0C125.0 143.3 111.7 135.3 140.0 152.0C168.3 168.7 160.0 165.3 190.0 180.0C220.0 194.7 218.3 189.3 230.0 196.0C241.7 202.7 240.7 203.3 225.0 200.0C209.3 196.7 215.0 200.3 183.0 186.0C151.0 171.7 157.0 173.0 129.0 157.0C101.0 141.0 116.7 151.0 99.0 138.0C81.3 125.0 82.3 126.7 76.0 118.0C69.7 109.3 70.3 108.0 80.0 112.0Z" fill="#8d2e36" opacity="0.6"/><path d="M187.3 64.8C186.9 67.7 184.0 62.3 186.1 73.5C188.2 84.7 185.2 81.8 193.5 98.3C201.8 114.8 196.8 106.5 210.9 123.1C225.0 139.7 216.7 131.4 235.7 148.0C254.7 164.6 247.3 157.1 268.0 172.8C288.7 188.5 287.9 187.7 297.8 195.1L347.6 200.0C339.3 195.1 343.3 197.6 322.6 185.2C301.9 172.8 310.2 179.4 285.4 162.8C260.6 146.2 268.8 152.9 248.1 135.5C227.4 118.1 237.3 126.4 223.3 110.7C209.3 95.0 218.0 103.7 206.0 88.4C194.0 73.1 193.5 72.7 187.3 64.8Z" fill="#d7363a" /><path d="M189.0 78.0C188.3 84.0 188.3 84.7 196.0 100.0C203.7 115.3 198.7 108.0 212.0 124.0C225.3 140.0 223.3 136.0 236.0 148.0C248.7 160.0 247.3 160.7 250.0 160.0C252.7 159.3 252.0 158.0 244.0 146.0C236.0 134.0 237.3 138.7 226.0 124.0C214.7 109.3 219.3 116.0 210.0 102.0C200.7 88.0 205.0 90.0 198.0 82.0C191.0 74.0 189.7 72.0 189.0 78.0Z" fill="#ef7d1d" opacity="0.9"/><path d="M187.3 64.8C191.5 71.5 189.8 69.3 200.0 85.0C210.2 100.7 203.7 94.0 218.0 112.0C232.3 130.0 223.0 120.7 243.0 139.0C263.0 157.3 255.0 150.0 278.0 167.0C301.0 184.0 300.7 182.3 312.0 190.0L347.6 200.0C339.3 195.1 343.3 197.6 322.6 185.2C301.9 172.8 310.2 179.4 285.4 162.8C260.6 146.2 268.8 152.9 248.1 135.5C227.4 118.1 237.3 126.4 223.3 110.7C209.3 95.0 218.0 103.7 206.0 88.4C194.0 73.1 193.5 72.7 187.3 64.8Z" fill="url(#Lg43)" /><path d="M187.3 64.8C193.5 72.7 194.0 73.1 206.0 88.4C218.0 103.7 209.3 95.0 223.3 110.7C237.3 126.4 227.4 118.1 248.1 135.5C268.8 152.9 260.6 146.2 285.4 162.8C310.2 179.4 301.9 172.8 322.6 185.2C343.3 197.6 339.3 195.1 347.6 200.0" stroke="#16263f" stroke-width="2" fill="none" stroke-linecap="round"/><path d="M300.0 168.0C312.7 172.7 312.0 177.0 343.0 196.0C374.0 215.0 358.7 206.3 393.0 225.0C427.3 243.7 426.3 239.7 446.0 252.0C465.7 264.3 467.3 266.0 452.0 262.0C436.7 258.0 434.0 256.7 400.0 240.0C366.0 223.3 381.7 231.3 350.0 212.0C318.3 192.7 321.7 196.7 305.0 182.0C288.3 167.3 287.3 163.3 300.0 168.0Z" fill="#c8d5e4" /><path d="M290 160Q380 215 450 258" stroke="#16263f" stroke-width="2" fill="none" opacity="0.8"/><path d="M298.0 188.0C312.3 182.7 311.3 185.7 343.0 199.0C374.7 212.3 358.7 209.7 393.0 228.0C427.3 246.3 410.3 235.7 446.0 254.0C481.7 272.3 464.0 257.0 500.0 283.0C536.0 309.0 518.3 301.7 554.0 332.0C589.7 362.3 578.3 348.7 607.0 374.0C635.7 399.3 633.0 382.7 640.0 408.0C647.0 433.3 641.3 427.7 628.0 450.0C614.7 472.3 619.3 461.7 600.0 475.0C580.7 488.3 589.0 482.7 570.0 490.0C551.0 497.3 562.0 492.3 543.0 497.0C524.0 501.7 528.3 493.7 513.0 504.0C497.7 514.3 507.0 515.0 497.0 528.0C487.0 541.0 491.3 539.7 483.0 543.0C474.7 546.3 479.7 546.0 472.0 538.0C464.3 530.0 470.7 524.7 460.0 519.0C449.3 513.3 452.0 519.0 440.0 521.0C428.0 523.0 430.0 534.7 424.0 525.0C418.0 515.3 426.0 513.7 422.0 492.0C418.0 470.3 423.3 475.7 412.0 460.0C400.7 444.3 400.0 463.0 388.0 445.0C376.0 427.0 384.0 431.0 376.0 406.0C368.0 381.0 375.3 390.3 364.0 370.0C352.7 349.7 354.7 361.7 342.0 345.0C329.3 328.3 333.3 338.3 326.0 320.0C318.7 301.7 324.7 313.3 320.0 290.0C315.3 266.7 318.7 275.0 312.0 250.0C305.3 225.0 304.7 235.7 300.0 215.0C295.3 194.3 283.7 193.3 298.0 188.0Z" fill="url(#Lg44)" /><ellipse cx="307.9" cy="215.3" rx="26" ry="10" transform="rotate(18 307.9 215.3)" fill="#d7363a" fill-opacity="0.55" stroke="#8d2e36" stroke-width="1.2" stroke-opacity="0.55"/><ellipse cx="315.0" cy="236.4" rx="26" ry="10" transform="rotate(19 315.0 236.4)" fill="#d7363a" fill-opacity="0.55" stroke="#8d2e36" stroke-width="1.2" stroke-opacity="0.55"/><ellipse cx="316.1" cy="261.4" rx="26" ry="10" transform="rotate(42 316.1 261.4)" fill="#d7363a" fill-opacity="0.55" stroke="#8d2e36" stroke-width="1.2" stroke-opacity="0.55"/><ellipse cx="324.7" cy="286.9" rx="26" ry="10" transform="rotate(43 324.7 286.9)" fill="#8d2e36" fill-opacity="0.95" stroke="#8d2e36" stroke-width="1.2" stroke-opacity="0.55"/><ellipse cx="327.1" cy="313.2" rx="26" ry="10" transform="rotate(48 327.1 313.2)" fill="#d7363a" fill-opacity="0.55" stroke="#8d2e36" stroke-width="1.2" stroke-opacity="0.55"/><ellipse cx="331.4" cy="332.4" rx="26" ry="10" transform="rotate(59 331.4 332.4)" fill="#d7363a" fill-opacity="0.55" stroke="#8d2e36" stroke-width="1.2" stroke-opacity="0.55"/><ellipse cx="343.4" cy="222.2" rx="24" ry="10" transform="rotate(26 343.4 222.2)" fill="#dc3d3c" fill-opacity="0.55" stroke="#8d2e36" stroke-width="1.2" stroke-opacity="0.55"/><ellipse cx="351.8" cy="251.4" rx="24" ry="10" transform="rotate(29 351.8 251.4)" fill="#dc3d3c" fill-opacity="0.55" stroke="#8d2e36" stroke-width="1.2" stroke-opacity="0.55"/><ellipse cx="354.2" cy="275.1" rx="24" ry="10" transform="rotate(31 354.2 275.1)" fill="#dc3d3c" fill-opacity="0.55" stroke="#8d2e36" stroke-width="1.2" stroke-opacity="0.55"/><ellipse cx="363.0" cy="295.1" rx="24" ry="10" transform="rotate(32 363.0 295.1)" fill="#8d2e36" fill-opacity="0.95" stroke="#8d2e36" stroke-width="1.2" stroke-opacity="0.55"/><ellipse cx="368.7" cy="321.3" rx="24" ry="10" transform="rotate(45 368.7 321.3)" fill="#dc3d3c" fill-opacity="0.55" stroke="#8d2e36" stroke-width="1.2" stroke-opacity="0.55"/><ellipse cx="370.1" cy="345.1" rx="24" ry="10" transform="rotate(47 370.1 345.1)" fill="#dc3d3c" fill-opacity="0.55" stroke="#8d2e36" stroke-width="1.2" stroke-opacity="0.55"/><ellipse cx="375.7" cy="372.4" rx="24" ry="10" transform="rotate(58 375.7 372.4)" fill="#dc3d3c" fill-opacity="0.55" stroke="#8d2e36" stroke-width="1.2" stroke-opacity="0.55"/><ellipse cx="387.9" cy="247.9" rx="22" ry="10" transform="rotate(23 387.9 247.9)" fill="#8d2e36" fill-opacity="0.95" stroke="#8d2e36" stroke-width="1.2" stroke-opacity="0.55"/><ellipse cx="392.2" cy="271.4" rx="22" ry="10" transform="rotate(31 392.2 271.4)" fill="#d7363a" fill-opacity="0.55" stroke="#8d2e36" stroke-width="1.2" stroke-opacity="0.55"/><ellipse cx="395.3" cy="290.4" rx="22" ry="10" transform="rotate(35 395.3 290.4)" fill="#d7363a" fill-opacity="0.55" stroke="#8d2e36" stroke-width="1.2" stroke-opacity="0.55"/><ellipse cx="396.1" cy="313.1" rx="22" ry="10" transform="rotate(41 396.1 313.1)" fill="#d7363a" fill-opacity="0.55" stroke="#8d2e36" stroke-width="1.2" stroke-opacity="0.55"/><ellipse cx="398.9" cy="341.1" rx="22" ry="10" transform="rotate(39 398.9 341.1)" fill="#8d2e36" fill-opacity="0.95" stroke="#8d2e36" stroke-width="1.2" stroke-opacity="0.55"/><ellipse cx="404.8" cy="364.5" rx="22" ry="10" transform="rotate(51 404.8 364.5)" fill="#ef7d1d" fill-opacity="0.95" stroke="#8d2e36" stroke-width="1.2" stroke-opacity="0.55"/><ellipse cx="411.6" cy="383.7" rx="22" ry="10" transform="rotate(53 411.6 383.7)" fill="#d7363a" fill-opacity="0.55" stroke="#8d2e36" stroke-width="1.2" stroke-opacity="0.55"/><ellipse cx="418.0" cy="412.9" rx="22" ry="10" transform="rotate(55 418.0 412.9)" fill="#d7363a" fill-opacity="0.55" stroke="#8d2e36" stroke-width="1.2" stroke-opacity="0.55"/><ellipse cx="423.5" cy="267.5" rx="21" ry="10" transform="rotate(22 423.5 267.5)" fill="#ef7d1d" fill-opacity="0.95" stroke="#8d2e36" stroke-width="1.2" stroke-opacity="0.55"/><ellipse cx="425.7" cy="294.4" rx="21" ry="10" transform="rotate(26 425.7 294.4)" fill="#8d2e36" fill-opacity="0.95" stroke="#8d2e36" stroke-width="1.2" stroke-opacity="0.55"/><ellipse cx="427.6" cy="322.2" rx="21" ry="10" transform="rotate(26 427.6 322.2)" fill="#dc3d3c" fill-opacity="0.55" stroke="#8d2e36" stroke-width="1.2" stroke-opacity="0.55"/><ellipse cx="437.5" cy="344.3" rx="21" ry="10" transform="rotate(32 437.5 344.3)" fill="#dc3d3c" fill-opacity="0.55" stroke="#8d2e36" stroke-width="1.2" stroke-opacity="0.55"/><ellipse cx="438.7" cy="370.6" rx="21" ry="10" transform="rotate(38 438.7 370.6)" fill="#dc3d3c" fill-opacity="0.55" stroke="#8d2e36" stroke-width="1.2" stroke-opacity="0.55"/><ellipse cx="444.1" cy="395.0" rx="21" ry="10" transform="rotate(41 444.1 395.0)" fill="#dc3d3c" fill-opacity="0.55" stroke="#8d2e36" stroke-width="1.2" stroke-opacity="0.55"/><ellipse cx="441.7" cy="418.8" rx="21" ry="10" transform="rotate(54 441.7 418.8)" fill="#dc3d3c" fill-opacity="0.55" stroke="#8d2e36" stroke-width="1.2" stroke-opacity="0.55"/><ellipse cx="447.3" cy="442.1" rx="21" ry="10" transform="rotate(49 447.3 442.1)" fill="#dc3d3c" fill-opacity="0.55" stroke="#8d2e36" stroke-width="1.2" stroke-opacity="0.55"/><ellipse cx="446.2" cy="470.7" rx="21" ry="10" transform="rotate(57 446.2 470.7)" fill="#ef7d1d" fill-opacity="0.95" stroke="#8d2e36" stroke-width="1.2" stroke-opacity="0.55"/><ellipse cx="466.0" cy="299.8" rx="20" ry="10" transform="rotate(23 466.0 299.8)" fill="#d7363a" fill-opacity="0.55" stroke="#8d2e36" stroke-width="1.2" stroke-opacity="0.55"/><ellipse cx="469.4" cy="325.9" rx="20" ry="10" transform="rotate(16 469.4 325.9)" fill="#ef7d1d" fill-opacity="0.95" stroke="#8d2e36" stroke-width="1.2" stroke-opacity="0.55"/><ellipse cx="472.0" cy="351.7" rx="20" ry="10" transform="rotate(24 472.0 351.7)" fill="#d7363a" fill-opacity="0.55" stroke="#8d2e36" stroke-width="1.2" stroke-opacity="0.55"/><ellipse cx="474.1" cy="372.3" rx="20" ry="10" transform="rotate(29 474.1 372.3)" fill="#d7363a" fill-opacity="0.55" stroke="#8d2e36" stroke-width="1.2" stroke-opacity="0.55"/><ellipse cx="475.1" cy="398.4" rx="20" ry="10" transform="rotate(32 475.1 398.4)" fill="#d7363a" fill-opacity="0.55" stroke="#8d2e36" stroke-width="1.2" stroke-opacity="0.55"/><ellipse cx="481.1" cy="419.4" rx="20" ry="10" transform="rotate(41 481.1 419.4)" fill="#d7363a" fill-opacity="0.55" stroke="#8d2e36" stroke-width="1.2" stroke-opacity="0.55"/><ellipse cx="480.1" cy="445.0" rx="20" ry="10" transform="rotate(48 480.1 445.0)" fill="#d7363a" fill-opacity="0.55" stroke="#8d2e36" stroke-width="1.2" stroke-opacity="0.55"/><ellipse cx="481.9" cy="470.7" rx="20" ry="10" transform="rotate(50 481.9 470.7)" fill="#ef7d1d" fill-opacity="0.95" stroke="#8d2e36" stroke-width="1.2" stroke-opacity="0.55"/><ellipse cx="485.8" cy="494.6" rx="20" ry="10" transform="rotate(56 485.8 494.6)" fill="#d7363a" fill-opacity="0.55" stroke="#8d2e36" stroke-width="1.2" stroke-opacity="0.55"/><ellipse cx="492.8" cy="518.0" rx="20" ry="10" transform="rotate(52 492.8 518.0)" fill="#d7363a" fill-opacity="0.55" stroke="#8d2e36" stroke-width="1.2" stroke-opacity="0.55"/><ellipse cx="508.1" cy="329.7" rx="19" ry="9" transform="rotate(16 508.1 329.7)" fill="#8d2e36" fill-opacity="0.95" stroke="#8d2e36" stroke-width="1.2" stroke-opacity="0.55"/><ellipse cx="507.7" cy="355.0" rx="19" ry="9" transform="rotate(29 507.7 355.0)" fill="#dc3d3c" fill-opacity="0.55" stroke="#8d2e36" stroke-width="1.2" stroke-opacity="0.55"/><ellipse cx="507.5" cy="382.4" rx="19" ry="9" transform="rotate(34 507.5 382.4)" fill="#dc3d3c" fill-opacity="0.55" stroke="#8d2e36" stroke-width="1.2" stroke-opacity="0.55"/><ellipse cx="515.0" cy="409.7" rx="19" ry="9" transform="rotate(27 515.0 409.7)" fill="#dc3d3c" fill-opacity="0.55" stroke="#8d2e36" stroke-width="1.2" stroke-opacity="0.55"/><ellipse cx="517.4" cy="436.1" rx="19" ry="9" transform="rotate(35 517.4 436.1)" fill="#dc3d3c" fill-opacity="0.55" stroke="#8d2e36" stroke-width="1.2" stroke-opacity="0.55"/><ellipse cx="516.9" cy="463.8" rx="19" ry="9" transform="rotate(49 516.9 463.8)" fill="#8d2e36" fill-opacity="0.95" stroke="#8d2e36" stroke-width="1.2" stroke-opacity="0.55"/><ellipse cx="516.0" cy="493.9" rx="19" ry="9" transform="rotate(52 516.0 493.9)" fill="#dc3d3c" fill-opacity="0.55" stroke="#8d2e36" stroke-width="1.2" stroke-opacity="0.55"/><ellipse cx="522.0" cy="520.8" rx="19" ry="9" transform="rotate(57 522.0 520.8)" fill="#8d2e36" fill-opacity="0.95" stroke="#8d2e36" stroke-width="1.2" stroke-opacity="0.55"/><ellipse cx="527.0" cy="547.0" rx="19" ry="9" transform="rotate(58 527.0 547.0)" fill="#dc3d3c" fill-opacity="0.55" stroke="#8d2e36" stroke-width="1.2" stroke-opacity="0.55"/><ellipse cx="543.3" cy="369.0" rx="18" ry="9" transform="rotate(16 543.3 369.0)" fill="#ef7d1d" fill-opacity="0.95" stroke="#8d2e36" stroke-width="1.2" stroke-opacity="0.55"/><ellipse cx="548.2" cy="393.7" rx="18" ry="9" transform="rotate(31 548.2 393.7)" fill="#ef7d1d" fill-opacity="0.95" stroke="#8d2e36" stroke-width="1.2" stroke-opacity="0.55"/><ellipse cx="553.2" cy="421.2" rx="18" ry="9" transform="rotate(38 553.2 421.2)" fill="#d7363a" fill-opacity="0.55" stroke="#8d2e36" stroke-width="1.2" stroke-opacity="0.55"/><ellipse cx="555.7" cy="445.5" rx="18" ry="9" transform="rotate(30 555.7 445.5)" fill="#d7363a" fill-opacity="0.55" stroke="#8d2e36" stroke-width="1.2" stroke-opacity="0.55"/><ellipse cx="552.4" cy="468.8" rx="18" ry="9" transform="rotate(46 552.4 468.8)" fill="#d7363a" fill-opacity="0.55" stroke="#8d2e36" stroke-width="1.2" stroke-opacity="0.55"/><ellipse cx="556.8" cy="497.6" rx="18" ry="9" transform="rotate(51 556.8 497.6)" fill="#d7363a" fill-opacity="0.55" stroke="#8d2e36" stroke-width="1.2" stroke-opacity="0.55"/><ellipse cx="558.0" cy="522.2" rx="18" ry="9" transform="rotate(55 558.0 522.2)" fill="#d7363a" fill-opacity="0.55" stroke="#8d2e36" stroke-width="1.2" stroke-opacity="0.55"/><ellipse cx="583.8" cy="398.2" rx="17" ry="9" transform="rotate(21 583.8 398.2)" fill="#dc3d3c" fill-opacity="0.55" stroke="#8d2e36" stroke-width="1.2" stroke-opacity="0.55"/><ellipse cx="585.7" cy="428.4" rx="17" ry="9" transform="rotate(38 585.7 428.4)" fill="#dc3d3c" fill-opacity="0.55" stroke="#8d2e36" stroke-width="1.2" stroke-opacity="0.55"/><ellipse cx="594.3" cy="450.4" rx="17" ry="9" transform="rotate(45 594.3 450.4)" fill="#dc3d3c" fill-opacity="0.55" stroke="#8d2e36" stroke-width="1.2" stroke-opacity="0.55"/><ellipse cx="591.4" cy="478.6" rx="17" ry="9" transform="rotate(51 591.4 478.6)" fill="#dc3d3c" fill-opacity="0.55" stroke="#8d2e36" stroke-width="1.2" stroke-opacity="0.55"/><path d="M318 292Q370 300 420 330Q440 350 455 372" stroke="#1a1a1d" stroke-width="2.4" fill="none" opacity="0.75" stroke-linecap="round"/><path d="M300 236Q350 248 372 262" stroke="#1a1a1d" stroke-width="2.4" fill="none" opacity="0.75" stroke-linecap="round"/><path d="M330 345Q380 340 420 360Q450 380 470 410" stroke="#1a1a1d" stroke-width="2.4" fill="none" opacity="0.75" stroke-linecap="round"/><path d="M440 300Q470 310 480 330" stroke="#1a1a1d" stroke-width="2.4" fill="none" opacity="0.75" stroke-linecap="round"/><path d="M450.0 258.0C466.0 264.7 465.3 260.7 500.0 286.0C534.7 311.3 520.0 305.0 554.0 334.0C588.0 363.0 587.3 357.7 602.0 373.0C616.7 388.3 616.0 390.0 598.0 380.0C580.0 370.0 582.0 370.7 548.0 343.0C514.0 315.3 528.0 322.7 496.0 297.0C464.0 271.3 467.3 279.0 452.0 266.0C436.7 253.0 434.0 251.3 450.0 258.0Z" fill="#ef7d1d" opacity="0.85"/></svg>
<div class="a " style="left:1501px;top:235px;width:21px;height:890px;background:linear-gradient(180deg,#fae2ca 0%,#f8d8b6 5%,#f5c48a 9.9%,#e8801f 13.2%,#e0602a 16.5%,#d83a40 18.7%,#c8303c 23%,#a02a38 26%,#7a3038 30.3%,#5a3436 34%,#1f1c1e 36.5%,#1b1b1d 38.7%,#000 38.8%,#000 39.05%,#fff 39.1%,#fff 39.4%,#777 39.5%,#b0b0b0 40%,#fff 41%,#f8fafc 48.6%,#dde4ec 54.4%,#b4c2d4 61%,#8a9fbc 66.1%,#4a668f 69.4%,#274a7a 71.9%,#173c72 75.6%,#1b3460 78.1%,#1b1c20 79.6%,#1b1b1d 100%);border-left:1px solid #000;"></div>
<svg class="a" style="left:1594px;top:235px" width="894" height="890" viewBox="0 0 1000 1000" preserveAspectRatio="none"><rect width="1000" height="1000" fill="#fefefe"/><defs><linearGradient id="Rg1" gradientUnits="userSpaceOnUse" x1="500" y1="640" x2="250" y2="900"><stop offset="0" stop-color="#ac1019"/><stop offset="0.3" stop-color="#ac1019"/><stop offset="0.55" stop-color="#e2141d"/><stop offset="1" stop-color="#e2141d"/></linearGradient><linearGradient id="Rg2" gradientUnits="userSpaceOnUse" x1="510" y1="690" x2="290" y2="930"><stop offset="0" stop-color="#960e18"/><stop offset="0.35" stop-color="#ac1019"/><stop offset="1" stop-color="#ac1019"/></linearGradient><linearGradient id="Rg3" gradientUnits="userSpaceOnUse" x1="530" y1="710" x2="378" y2="952"><stop offset="0" stop-color="#ac1019"/><stop offset="0.3" stop-color="#e2141d"/><stop offset="0.75" stop-color="#e2141d"/><stop offset="1" stop-color="#ac1019"/></linearGradient><linearGradient id="Rg4" gradientUnits="userSpaceOnUse" x1="550" y1="720" x2="420" y2="948"><stop offset="0" stop-color="#960e18"/><stop offset="0.4" stop-color="#ac1019"/><stop offset="0.8" stop-color="#e2141d"/><stop offset="1" stop-color="#e2141d"/></linearGradient><linearGradient id="Rg5" gradientUnits="userSpaceOnUse" x1="570" y1="715" x2="474" y2="928"><stop offset="0" stop-color="#960e18"/><stop offset="0.45" stop-color="#ac1019"/><stop offset="0.8" stop-color="#e2141d"/><stop offset="1" stop-color="#e8505e"/></linearGradient><linearGradient id="Rg6" gradientUnits="userSpaceOnUse" x1="760" y1="380" x2="560" y2="720"><stop offset="0" stop-color="#e2141d"/><stop offset="0.55" stop-color="#e2141d"/><stop offset="0.8" stop-color="#ac1019"/><stop offset="1" stop-color="#ac1019"/></linearGradient><linearGradient id="Rg7" gradientUnits="userSpaceOnUse" x1="680" y1="400" x2="750" y2="370"><stop offset="0" stop-color="#ec4a1e"/><stop offset="0.5" stop-color="#f7941d"/><stop offset="1" stop-color="#fbb93a"/></linearGradient><linearGradient id="Rg8" gradientUnits="userSpaceOnUse" x1="615" y1="460" x2="650" y2="495"><stop offset="0" stop-color="#fbb93a"/><stop offset="1" stop-color="#ec4a1e"/></linearGradient><linearGradient id="Rg9" gradientUnits="userSpaceOnUse" x1="770" y1="430" x2="815" y2="462"><stop offset="0" stop-color="#1c1a20"/><stop offset="0.5" stop-color="#1c1a20"/><stop offset="1" stop-color="#3a3a3a"/></linearGradient><linearGradient id="Rg10" gradientUnits="userSpaceOnUse" x1="804" y1="445" x2="858" y2="425"><stop offset="0" stop-color="#5a554c"/><stop offset="0.1" stop-color="#5a554c"/><stop offset="0.34" stop-color="#e8dfc6"/><stop offset="1" stop-color="#f3ecd8"/></linearGradient><linearGradient id="Rg11" gradientUnits="userSpaceOnUse" x1="560" y1="670" x2="622" y2="748"><stop offset="0" stop-color="#aaa59b"/><stop offset="0.35" stop-color="#847e76"/><stop offset="0.75" stop-color="#847e76"/><stop offset="1" stop-color="#3f3b37"/></linearGradient><linearGradient id="Rg12" gradientUnits="userSpaceOnUse" x1="640" y1="680" x2="700" y2="752"><stop offset="0" stop-color="#aaa59b"/><stop offset="0.3" stop-color="#847e76"/><stop offset="0.7" stop-color="#847e76"/><stop offset="1" stop-color="#3f3b37"/></linearGradient><linearGradient id="Rg13" gradientUnits="userSpaceOnUse" x1="494" y1="576" x2="510" y2="520"><stop offset="0" stop-color="#2f4268"/><stop offset="0.55" stop-color="#2f4268"/><stop offset="1" stop-color="#1d2536"/></linearGradient><linearGradient id="Rg14" gradientUnits="userSpaceOnUse" x1="494" y1="576" x2="506.0" y2="534.0"><stop offset="0" stop-color="#5f7da8"/><stop offset="0.55" stop-color="#5f7da8"/><stop offset="1" stop-color="#2f4268"/></linearGradient><linearGradient id="Rg15" gradientUnits="userSpaceOnUse" x1="471.5" y1="600" x2="492" y2="538"><stop offset="0" stop-color="#2f4268"/><stop offset="0.55" stop-color="#2f4268"/><stop offset="1" stop-color="#1d2536"/></linearGradient><linearGradient id="Rg16" gradientUnits="userSpaceOnUse" x1="471.5" y1="600" x2="486.875" y2="553.5"><stop offset="0" stop-color="#5f7da8"/><stop offset="0.55" stop-color="#5f7da8"/><stop offset="1" stop-color="#2f4268"/></linearGradient><linearGradient id="Rg17" gradientUnits="userSpaceOnUse" x1="441.7" y1="611.6" x2="476" y2="538"><stop offset="0" stop-color="#2f4268"/><stop offset="0.55" stop-color="#2f4268"/><stop offset="1" stop-color="#1d2536"/></linearGradient><linearGradient id="Rg18" gradientUnits="userSpaceOnUse" x1="441.7" y1="611.6" x2="467.425" y2="556.4"><stop offset="0" stop-color="#5f7da8"/><stop offset="0.55" stop-color="#5f7da8"/><stop offset="1" stop-color="#2f4268"/></linearGradient><linearGradient id="Rg19" gradientUnits="userSpaceOnUse" x1="415" y1="616" x2="460" y2="528"><stop offset="0" stop-color="#2f4268"/><stop offset="0.55" stop-color="#2f4268"/><stop offset="1" stop-color="#1d2536"/></linearGradient><linearGradient id="Rg20" gradientUnits="userSpaceOnUse" x1="415" y1="616" x2="448.75" y2="550.0"><stop offset="0" stop-color="#5f7da8"/><stop offset="0.55" stop-color="#5f7da8"/><stop offset="1" stop-color="#2f4268"/></linearGradient><linearGradient id="Rg21" gradientUnits="userSpaceOnUse" x1="382" y1="597" x2="445" y2="518"><stop offset="0" stop-color="#2f4268"/><stop offset="0.55" stop-color="#2f4268"/><stop offset="1" stop-color="#1d2536"/></linearGradient><linearGradient id="Rg22" gradientUnits="userSpaceOnUse" x1="382" y1="597" x2="429.25" y2="537.75"><stop offset="0" stop-color="#9cc0e0"/><stop offset="0.55" stop-color="#5f7da8"/><stop offset="1" stop-color="#2f4268"/></linearGradient><linearGradient id="Rg23" gradientUnits="userSpaceOnUse" x1="352" y1="582" x2="428" y2="505"><stop offset="0" stop-color="#2f4268"/><stop offset="0.55" stop-color="#2f4268"/><stop offset="1" stop-color="#1d2536"/></linearGradient><linearGradient id="Rg24" gradientUnits="userSpaceOnUse" x1="352" y1="582" x2="409.0" y2="524.25"><stop offset="0" stop-color="#5f7da8"/><stop offset="0.55" stop-color="#5f7da8"/><stop offset="1" stop-color="#2f4268"/></linearGradient><linearGradient id="Rg25" gradientUnits="userSpaceOnUse" x1="327" y1="561" x2="420" y2="480"><stop offset="0" stop-color="#2f4268"/><stop offset="0.55" stop-color="#2f4268"/><stop offset="1" stop-color="#1d2536"/></linearGradient><linearGradient id="Rg26" gradientUnits="userSpaceOnUse" x1="327" y1="561" x2="396.75" y2="500.25"><stop offset="0" stop-color="#9cc0e0"/><stop offset="0.55" stop-color="#5f7da8"/><stop offset="1" stop-color="#2f4268"/></linearGradient><linearGradient id="Rg27" gradientUnits="userSpaceOnUse" x1="303" y1="543" x2="408" y2="458"><stop offset="0" stop-color="#2f4268"/><stop offset="0.55" stop-color="#2f4268"/><stop offset="1" stop-color="#1d2536"/></linearGradient><linearGradient id="Rg28" gradientUnits="userSpaceOnUse" x1="303" y1="543" x2="381.75" y2="479.25"><stop offset="0" stop-color="#9cc0e0"/><stop offset="0.55" stop-color="#5f7da8"/><stop offset="1" stop-color="#2f4268"/></linearGradient><linearGradient id="Rg29" gradientUnits="userSpaceOnUse" x1="267.6" y1="528" x2="392" y2="436"><stop offset="0" stop-color="#2f4268"/><stop offset="0.55" stop-color="#2f4268"/><stop offset="1" stop-color="#1d2536"/></linearGradient><linearGradient id="Rg30" gradientUnits="userSpaceOnUse" x1="267.6" y1="528" x2="360.9" y2="459.0"><stop offset="0" stop-color="#9cc0e0"/><stop offset="0.55" stop-color="#9cc0e0"/><stop offset="1" stop-color="#2f4268"/></linearGradient><linearGradient id="Rg31" gradientUnits="userSpaceOnUse" x1="250" y1="496" x2="372" y2="408"><stop offset="0" stop-color="#5f7da8"/><stop offset="0.3" stop-color="#9cc0e0"/><stop offset="0.7" stop-color="#5f7da8"/><stop offset="1" stop-color="#2f4268"/></linearGradient><linearGradient id="Rg32" gradientUnits="userSpaceOnUse" x1="198" y1="471" x2="300" y2="400"><stop offset="0" stop-color="#3a4870"/><stop offset="0.12" stop-color="#5d6a90"/><stop offset="0.45" stop-color="#9a85a0"/><stop offset="1" stop-color="#5d6a90"/></linearGradient><linearGradient id="Rg33" gradientUnits="userSpaceOnUse" x1="250" y1="430" x2="350" y2="370"><stop offset="0" stop-color="#9a85a0"/><stop offset="0.1" stop-color="#e85c68"/><stop offset="0.35" stop-color="#e85c68"/><stop offset="0.55" stop-color="#d42a36"/><stop offset="1" stop-color="#d42a36"/></linearGradient><linearGradient id="Rg34" gradientUnits="userSpaceOnUse" x1="134" y1="427" x2="214" y2="380"><stop offset="0" stop-color="#3a4870"/><stop offset="0.12" stop-color="#5d6a90"/><stop offset="0.45" stop-color="#9a85a0"/><stop offset="1" stop-color="#5d6a90"/></linearGradient><linearGradient id="Rg35" gradientUnits="userSpaceOnUse" x1="205" y1="410" x2="320" y2="340"><stop offset="0" stop-color="#9a85a0"/><stop offset="0.1" stop-color="#f3929a"/><stop offset="0.12" stop-color="#e85c68"/><stop offset="0.45" stop-color="#e85c68"/><stop offset="0.6" stop-color="#d42a36"/><stop offset="1" stop-color="#d42a36"/></linearGradient><linearGradient id="Rg36" gradientUnits="userSpaceOnUse" x1="70.7" y1="360.1" x2="190" y2="335"><stop offset="0" stop-color="#3a4870"/><stop offset="0.12" stop-color="#5d6a90"/><stop offset="0.45" stop-color="#9a85a0"/><stop offset="1" stop-color="#5d6a90"/></linearGradient><linearGradient id="Rg37" gradientUnits="userSpaceOnUse" x1="186" y1="345" x2="320" y2="315"><stop offset="0" stop-color="#9a85a0"/><stop offset="0.1" stop-color="#e85c68"/><stop offset="0.1" stop-color="#e85c68"/><stop offset="0.2" stop-color="#d42a36"/><stop offset="1" stop-color="#d42a36"/></linearGradient><linearGradient id="Rg38" gradientUnits="userSpaceOnUse" x1="40.9" y1="269.5" x2="190" y2="290"><stop offset="0" stop-color="#3a4870"/><stop offset="0.12" stop-color="#5d6a90"/><stop offset="0.45" stop-color="#9a85a0"/><stop offset="1" stop-color="#5d6a90"/></linearGradient><linearGradient id="Rg39" gradientUnits="userSpaceOnUse" x1="183" y1="295" x2="320" y2="285"><stop offset="0" stop-color="#9a85a0"/><stop offset="0.1" stop-color="#d42a36"/><stop offset="0.75" stop-color="#d42a36"/><stop offset="1" stop-color="#ac1019"/></linearGradient><linearGradient id="Rg40" gradientUnits="userSpaceOnUse" x1="29.8" y1="205" x2="135" y2="245"><stop offset="0" stop-color="#3a4870"/><stop offset="0.12" stop-color="#5d6a90"/><stop offset="0.45" stop-color="#9a85a0"/><stop offset="1" stop-color="#5d6a90"/></linearGradient><linearGradient id="Rg41" gradientUnits="userSpaceOnUse" x1="119" y1="250" x2="320" y2="255"><stop offset="0" stop-color="#9a85a0"/><stop offset="0.1" stop-color="#d42a36"/><stop offset="0.7" stop-color="#d42a36"/><stop offset="1" stop-color="#ac1019"/></linearGradient><linearGradient id="Rg42" gradientUnits="userSpaceOnUse" x1="22" y1="127" x2="300" y2="225"><stop offset="0" stop-color="#1c1a20"/><stop offset="0.08" stop-color="#1c1a20"/><stop offset="0.1" stop-color="#3a4870"/><stop offset="0.16" stop-color="#5d6a90"/><stop offset="0.21" stop-color="#9a85a0"/><stop offset="0.235" stop-color="#a890a8"/><stop offset="0.24" stop-color="#e85c68"/><stop offset="0.33" stop-color="#e85c68"/><stop offset="0.4" stop-color="#e2141d"/><stop offset="0.5" stop-color="#e2141d"/><stop offset="0.56" stop-color="#e85c68"/><stop offset="0.66" stop-color="#e85c68"/><stop offset="0.74" stop-color="#e2141d"/><stop offset="1" stop-color="#ac1019"/></linearGradient><linearGradient id="Rg43" gradientUnits="userSpaceOnUse" x1="48" y1="72" x2="300" y2="205"><stop offset="0" stop-color="#1c1a20"/><stop offset="0.11" stop-color="#1c1a20"/><stop offset="0.14" stop-color="#ac1019"/><stop offset="0.22" stop-color="#e2141d"/><stop offset="0.8" stop-color="#e2141d"/><stop offset="1" stop-color="#ac1019"/></linearGradient><linearGradient id="Rg44" gradientUnits="userSpaceOnUse" x1="187" y1="65" x2="340" y2="198"><stop offset="0" stop-color="#e2141d"/><stop offset="0.5" stop-color="#e2141d"/><stop offset="1" stop-color="#ac1019"/></linearGradient><linearGradient id="Rg45" gradientUnits="userSpaceOnUse" x1="330" y1="210" x2="560" y2="540"><stop offset="0" stop-color="#e2141d"/><stop offset="0.22" stop-color="#e2141d"/><stop offset="0.42" stop-color="#ac1019"/><stop offset="0.68" stop-color="#ac1019"/><stop offset="0.86" stop-color="#e2141d"/><stop offset="1" stop-color="#e2141d"/></linearGradient></defs><path d="M497.0 612.0C482.3 617.7 502.3 622.3 476.0 657.0C449.7 691.7 456.7 677.0 418.0 716.0C379.3 755.0 399.0 733.3 360.0 774.0C321.0 814.7 340.0 794.3 301.0 838.0C262.0 881.7 256.3 884.7 243.0 905.0C229.7 925.3 236.7 917.3 261.0 899.0C285.3 880.7 286.0 875.3 316.0 850.0C346.0 824.7 323.0 846.3 351.0 823.0C379.0 799.7 367.0 811.0 400.0 780.0C433.0 749.0 416.7 763.3 450.0 730.0C483.3 696.7 476.7 710.0 500.0 680.0C523.3 650.0 521.0 662.7 520.0 640.0C519.0 617.3 511.7 606.3 497.0 612.0Z" fill="url(#Rg1)" /><path d="M440.0 705.0C415.0 721.7 420.0 723.3 380.0 765.0C340.0 806.7 356.7 790.0 320.0 830.0C283.3 870.0 276.7 874.3 270.0 885.0C263.3 895.7 273.3 885.3 300.0 862.0C326.7 838.7 313.3 850.7 350.0 815.0C386.7 779.3 375.0 788.3 410.0 755.0C445.0 721.7 445.0 731.7 455.0 715.0C465.0 698.3 465.0 688.3 440.0 705.0Z" fill="#ac1019" opacity="0.55"/><path d="M500.0 680.0C466.7 703.3 479.7 702.3 430.0 750.0C380.3 797.7 384.3 790.7 351.0 823.0C317.7 855.3 347.3 822.7 330.0 847.0C312.7 871.3 313.3 868.0 299.0 896.0C284.7 924.0 284.3 919.3 287.0 931.0C289.7 942.7 289.7 937.0 307.0 931.0C324.3 925.0 311.7 940.0 339.0 913.0C366.3 886.0 355.3 891.0 389.0 850.0C422.7 809.0 403.0 833.3 440.0 790.0C477.0 746.7 470.0 756.7 500.0 720.0C530.0 683.3 530.0 693.3 530.0 680.0C530.0 666.7 533.3 656.7 500.0 680.0Z" fill="url(#Rg2)" /><path d="M400.0 805.0C381.7 821.7 386.0 820.7 360.0 850.0C334.0 879.3 339.3 872.3 322.0 893.0C304.7 913.7 309.3 907.0 308.0 912.0C306.7 917.0 305.7 918.7 318.0 908.0C330.3 897.3 322.7 904.3 345.0 880.0C367.3 855.7 361.7 861.7 385.0 835.0C408.3 808.3 410.0 810.0 415.0 800.0C420.0 790.0 418.3 788.3 400.0 805.0Z" fill="#960e18" opacity="0.9"/><path d="M520.0 700.0C491.7 720.0 495.0 729.0 460.0 770.0C425.0 811.0 437.7 785.0 415.0 823.0C392.3 861.0 403.7 849.0 392.0 884.0C380.3 919.0 385.0 904.7 380.0 928.0C375.0 951.3 372.0 951.0 377.0 954.0C382.0 957.0 379.3 954.3 395.0 937.0C410.7 919.7 404.0 931.0 424.0 902.0C444.0 873.0 429.7 890.7 455.0 850.0C480.3 809.3 470.0 826.7 500.0 780.0C530.0 733.3 538.3 736.7 545.0 710.0C551.7 683.3 548.3 680.0 520.0 700.0Z" fill="url(#Rg3)" /><path d="M452.0 772.0C440.7 785.0 442.0 785.7 428.0 815.0C414.0 844.3 412.7 848.3 410.0 860.0C407.3 871.7 410.0 866.0 420.0 850.0C430.0 834.0 426.0 836.7 440.0 812.0C454.0 787.3 458.0 789.3 462.0 776.0C466.0 762.7 463.3 759.0 452.0 772.0Z" fill="#e8505e" opacity="0.9"/><path d="M408.0 880.0C401.3 892.3 397.3 906.7 396.0 915.0C394.7 923.3 397.3 917.3 404.0 905.0C410.7 892.7 414.7 886.3 416.0 878.0C417.3 869.7 414.7 867.7 408.0 880.0Z" fill="#e8505e" opacity="0.8"/><path d="M470.0 790.0C455.0 805.0 460.0 803.3 440.0 840.0C420.0 876.7 426.0 868.3 410.0 900.0C394.0 931.7 395.3 925.0 392.0 935.0C388.7 945.0 389.0 943.3 400.0 930.0C411.0 916.7 406.7 923.3 425.0 895.0C443.3 866.7 435.0 878.3 455.0 845.0C475.0 811.7 480.0 813.3 485.0 795.0C490.0 776.7 485.0 775.0 470.0 790.0Z" fill="#960e18" opacity="0.85"/><path d="M545.0 710.0C523.3 731.7 530.7 731.7 500.0 780.0C469.3 828.3 476.3 810.7 453.0 855.0C429.7 899.3 441.7 881.3 430.0 913.0C418.3 944.7 414.3 945.0 418.0 950.0C421.7 955.0 423.7 951.3 441.0 928.0C458.3 904.7 450.3 912.7 470.0 880.0C489.7 847.3 476.7 870.0 500.0 830.0C523.3 790.0 518.3 798.3 540.0 760.0C561.7 721.7 563.3 731.7 565.0 715.0C566.7 698.3 566.7 688.3 545.0 710.0Z" fill="url(#Rg4)" /><path d="M565.0 712.0C553.3 732.0 562.7 727.0 540.0 770.0C517.3 813.0 516.3 803.0 497.0 841.0C477.7 879.0 490.0 854.7 482.0 884.0C474.0 913.3 474.0 914.3 473.0 929.0C472.0 943.7 468.3 943.0 479.0 928.0C489.7 913.0 486.7 915.0 505.0 884.0C523.3 853.0 518.3 864.0 534.0 835.0C549.7 806.0 541.3 823.3 552.0 797.0C562.7 770.7 558.3 785.0 566.0 756.0C573.7 727.0 575.3 724.7 575.0 710.0C574.7 695.3 576.7 692.0 565.0 712.0Z" fill="url(#Rg5)" /><path d="M500.0 845.0C492.7 858.3 493.3 860.7 486.0 885.0C478.7 909.3 478.0 911.3 478.0 918.0C478.0 924.7 479.3 921.0 486.0 905.0C492.7 889.0 490.7 890.0 498.0 870.0C505.3 850.0 507.3 853.3 508.0 845.0C508.7 836.7 507.3 831.7 500.0 845.0Z" fill="#e8505e" opacity="0.9"/><path d="M499.0 640.0C505.7 649.3 504.7 654.7 505.0 680.0C505.3 705.3 494.0 696.3 500.0 716.0C506.0 735.7 502.0 743.0 523.0 739.0C544.0 735.0 546.7 702.0 563.0 704.0C579.3 706.0 573.7 712.0 572.0 745.0C570.3 778.0 570.7 770.0 558.0 803.0C545.3 836.0 551.7 840.0 534.0 844.0C516.3 848.0 522.3 815.0 505.0 815.0C487.7 815.0 493.7 850.0 482.0 844.0C470.3 838.0 468.0 826.3 470.0 797.0C472.0 767.7 495.7 756.0 488.0 756.0C480.3 756.0 474.3 775.7 447.0 797.0C419.7 818.3 411.7 827.7 406.0 820.0C400.3 812.3 406.7 815.7 430.0 774.0C453.3 732.3 457.7 735.7 476.0 695.0C494.3 654.3 477.3 670.3 485.0 652.0C492.7 633.7 492.3 630.7 499.0 640.0Z" fill="#960e18" opacity="1"/><path d="M520.0 700.0C512.7 711.7 513.3 716.7 500.0 750.0C486.7 783.3 490.0 773.3 480.0 800.0C470.0 826.7 470.0 825.0 470.0 830.0C470.0 835.0 470.7 835.0 480.0 815.0C489.3 795.0 484.0 803.3 498.0 770.0C512.0 736.7 514.7 738.3 522.0 715.0C529.3 691.7 527.3 688.3 520.0 700.0Z" fill="#ac1019" opacity="0.9"/><path d="M545.0 720.0C537.0 733.3 539.7 738.3 528.0 770.0C516.3 801.7 514.3 801.0 510.0 815.0C505.7 829.0 506.7 825.3 515.0 812.0C523.3 798.7 522.7 802.3 535.0 775.0C547.3 747.7 548.7 748.3 552.0 730.0C555.3 711.7 553.0 706.7 545.0 720.0Z" fill="#ac1019" opacity="0.9"/><path d="M496.0 690.0C488.7 700.0 491.3 703.3 480.0 730.0C468.7 756.7 465.3 758.3 462.0 770.0C458.7 781.7 461.3 778.3 470.0 765.0C478.7 751.7 477.3 751.7 488.0 730.0C498.7 708.3 499.3 713.3 502.0 700.0C504.7 686.7 503.3 680.0 496.0 690.0Z" fill="#ac1019" opacity="0.9"/><path d="M497.0 612.0C491.7 616.0 496.0 616.0 487.0 632.0C478.0 648.0 478.3 645.7 470.0 660.0C461.7 674.3 461.3 672.3 462.0 675.0C462.7 677.7 462.7 678.0 472.0 668.0C481.3 658.0 479.7 661.0 490.0 645.0C500.3 629.0 500.7 631.0 503.0 620.0C505.3 609.0 502.3 608.0 497.0 612.0Z" fill="#3a4870" /><path d="M607.0 373.0C623.7 353.7 616.0 369.3 640.0 362.0C664.0 354.7 654.0 358.0 679.0 351.0C704.0 344.0 691.3 346.7 715.0 341.0C738.7 335.3 728.3 337.3 750.0 334.0C771.7 330.7 762.0 331.7 780.0 331.0C798.0 330.3 789.0 330.3 804.0 332.0C819.0 333.7 812.0 332.3 825.0 336.0C838.0 339.7 832.7 337.7 843.0 343.0C853.3 348.3 849.0 346.0 856.0 352.0C863.0 358.0 859.3 354.3 864.0 361.0C868.7 367.7 867.7 365.3 870.0 372.0C872.3 378.7 872.3 374.7 871.0 381.0C869.7 387.3 870.3 386.7 866.0 391.0C861.7 395.3 870.0 387.7 858.0 394.0C846.0 400.3 849.3 394.7 830.0 410.0C810.7 425.3 823.3 422.7 800.0 440.0C776.7 457.3 777.3 448.7 760.0 462.0C742.7 475.3 754.3 467.3 748.0 480.0C741.7 492.7 745.0 486.3 741.0 500.0C737.0 513.7 740.7 506.7 736.0 521.0C731.3 535.3 734.3 528.7 727.0 543.0C719.7 557.3 723.0 550.0 714.0 564.0C705.0 578.0 710.7 570.7 700.0 585.0C689.3 599.3 691.3 592.7 682.0 607.0C672.7 621.3 678.0 613.7 672.0 628.0C666.0 642.3 668.7 636.7 664.0 650.0C659.3 663.3 662.0 657.3 658.0 668.0C654.0 678.7 658.7 674.0 652.0 682.0C645.3 690.0 648.0 694.0 638.0 692.0C628.0 690.0 634.7 684.0 622.0 676.0C609.3 668.0 614.0 670.7 600.0 668.0C586.0 665.3 593.3 665.3 580.0 668.0C566.7 670.7 564.7 665.3 560.0 676.0C555.3 686.7 567.3 678.7 566.0 700.0C564.7 721.3 564.7 716.7 556.0 740.0C547.3 763.3 552.0 770.0 540.0 770.0C528.0 770.0 531.7 766.7 520.0 740.0C508.3 713.3 514.0 723.3 505.0 690.0C496.0 656.7 497.0 667.7 493.0 640.0C489.0 612.3 490.7 628.7 493.0 607.0C495.3 585.3 491.0 600.7 500.0 575.0C509.0 549.3 500.0 565.0 520.0 530.0C540.0 495.0 536.7 506.7 560.0 470.0C583.3 433.3 574.3 452.3 590.0 420.0C605.7 387.7 590.3 392.3 607.0 373.0Z" fill="url(#Rg6)" /><path d="M700.0 560.0C703.3 573.3 700.0 573.3 690.0 600.0C680.0 626.7 681.7 614.0 670.0 640.0C658.3 666.0 665.0 661.3 655.0 678.0C645.0 694.7 651.7 691.0 640.0 690.0C628.3 689.0 623.3 691.7 620.0 675.0C616.7 658.3 620.0 665.0 630.0 640.0C640.0 615.0 633.3 626.7 650.0 600.0C666.7 573.3 663.3 573.3 680.0 560.0C696.7 546.7 696.7 546.7 700.0 560.0Z" fill="#ac1019" /><path d="M585.0 652.0C588.3 644.3 591.7 651.7 610.0 645.0C628.3 638.3 623.3 641.0 640.0 632.0C656.7 623.0 654.0 612.7 660.0 618.0C666.0 623.3 661.3 628.0 658.0 648.0C654.7 668.0 656.7 664.0 650.0 678.0C643.3 692.0 648.0 690.7 638.0 690.0C628.0 689.3 632.7 683.3 620.0 676.0C607.3 668.7 611.7 676.0 600.0 668.0C588.3 660.0 581.7 659.7 585.0 652.0Z" fill="#1c1a20" opacity="0.22"/><path d="M740.0 470.0C746.0 483.3 746.3 488.3 738.0 520.0C729.7 551.7 731.0 538.3 715.0 565.0C699.0 591.7 695.0 601.7 690.0 600.0C685.0 598.3 691.7 586.7 700.0 560.0C708.3 533.3 708.3 546.7 715.0 520.0C721.7 493.3 711.7 496.7 720.0 480.0C728.3 463.3 734.0 456.7 740.0 470.0Z" fill="#ac1019" opacity="0.7"/><path d="M556.0 540.0C569.3 531.7 568.7 531.7 580.0 545.0C591.3 558.3 588.3 548.3 590.0 580.0C591.7 611.7 591.7 611.7 585.0 640.0C578.3 668.3 581.0 655.7 570.0 665.0C559.0 674.3 562.0 683.0 552.0 668.0C542.0 653.0 544.0 652.7 540.0 620.0C536.0 587.3 534.7 596.7 540.0 570.0C545.3 543.3 542.7 548.3 556.0 540.0Z" fill="#e2141d" /><path d="M549.0 553.0C554.3 547.0 555.3 548.0 565.0 548.0C574.7 548.0 575.0 546.3 578.0 553.0C581.0 559.7 580.0 562.0 574.0 568.0C568.0 574.0 568.3 571.7 560.0 571.0C551.7 570.3 552.7 572.0 549.0 566.0C545.3 560.0 543.7 559.0 549.0 553.0Z" fill="#f3929a" opacity="0.85"/><path d="M586.0 556.0C591.3 543.3 591.3 551.3 598.0 552.0C604.7 552.7 608.7 542.0 606.0 558.0C603.3 574.0 598.0 589.3 590.0 600.0C582.0 610.7 583.3 604.7 582.0 590.0C580.7 575.3 580.7 568.7 586.0 556.0Z" fill="#e85c68" /><path d="M552.0 652.0C554.0 643.3 556.0 645.0 562.0 646.0C568.0 647.0 568.7 647.0 570.0 655.0C571.3 663.0 570.7 664.3 566.0 670.0C561.3 675.7 560.7 678.0 556.0 672.0C551.3 666.0 550.0 660.7 552.0 652.0Z" fill="#f3929a" /><path d="M640.0 505.0C660.0 495.0 660.0 495.0 680.0 500.0C700.0 505.0 696.7 505.0 700.0 520.0C703.3 535.0 706.7 538.3 690.0 545.0C673.3 551.7 673.3 545.0 650.0 540.0C626.7 535.0 623.3 541.7 620.0 530.0C616.7 518.3 620.0 515.0 640.0 505.0Z" fill="#ea3a44" opacity="0.6"/><path d="M700.0 440.0C711.7 425.0 722.7 425.0 740.0 430.0C757.3 435.0 753.7 438.3 752.0 455.0C750.3 471.7 750.7 473.3 735.0 480.0C719.3 486.7 716.7 488.3 705.0 475.0C693.3 461.7 688.3 455.0 700.0 440.0Z" fill="#ea3a44" /><path d="M676.0 372.0C686.7 362.0 680.3 366.0 700.0 362.0C719.7 358.0 718.3 356.7 735.0 360.0C751.7 363.3 745.0 358.7 750.0 372.0C755.0 385.3 751.7 384.0 750.0 400.0C748.3 416.0 755.0 414.0 745.0 420.0C735.0 426.0 738.3 422.0 720.0 418.0C701.7 414.0 707.3 416.7 690.0 408.0C672.7 399.3 672.7 404.0 668.0 392.0C663.3 380.0 665.3 382.0 676.0 372.0Z" fill="url(#Rg7)" /><path d="M700.0 346.0C711.7 340.0 713.3 341.7 740.0 338.0C766.7 334.3 761.7 334.3 780.0 335.0C798.3 335.7 798.3 335.7 795.0 340.0C791.7 344.3 790.0 344.0 770.0 348.0C750.0 352.0 756.7 349.3 735.0 352.0C713.3 354.7 716.7 358.0 705.0 356.0C693.3 354.0 688.3 352.0 700.0 346.0Z" fill="#f7941d" opacity="0.85"/><path d="M612.0 455.0C619.7 445.0 620.7 445.0 635.0 450.0C649.3 455.0 650.0 454.0 655.0 470.0C660.0 486.0 659.0 488.0 650.0 498.0C641.0 508.0 640.7 506.0 628.0 500.0C615.3 494.0 617.3 495.0 612.0 480.0C606.7 465.0 604.3 465.0 612.0 455.0Z" fill="url(#Rg8)" opacity="0.9"/><path d="M822.0 398.0C826.7 393.3 830.0 391.3 842.0 388.0C854.0 384.7 850.0 386.0 858.0 388.0C866.0 390.0 865.3 391.0 866.0 394.0C866.7 397.0 866.7 397.0 860.0 397.0C853.3 397.0 856.7 392.3 846.0 394.0C835.3 395.7 836.0 400.7 828.0 402.0C820.0 403.3 817.3 402.7 822.0 398.0Z" fill="#1c1a20" opacity="0.9"/><path d="M756.0 462.0C764.7 458.7 766.7 460.7 764.0 466.0C761.3 471.3 761.3 469.3 748.0 478.0C734.7 486.7 734.3 487.7 724.0 492.0C713.7 496.3 712.3 496.3 717.0 491.0C721.7 485.7 725.0 485.7 738.0 476.0C751.0 466.3 747.3 465.3 756.0 462.0Z" fill="#1c1a20" opacity="0.25"/><path d="M736.0 480.0C739.7 476.3 742.0 478.3 742.0 484.0C742.0 489.7 739.7 493.3 736.0 497.0C732.3 500.7 731.0 500.7 731.0 495.0C731.0 489.3 732.3 483.7 736.0 480.0Z" fill="#1c1a20" opacity="0.25"/><path d="M749.7 374.0C755.9 364.9 752.9 367.3 767.0 364.0C781.1 360.7 775.4 361.5 792.0 364.0C808.6 366.5 807.6 365.6 816.7 371.4C825.8 377.2 820.0 373.0 819.2 381.3C818.4 389.6 822.6 386.3 814.3 396.2C806.0 406.1 807.6 401.1 794.4 411.0C781.2 420.9 784.5 414.3 774.6 426.0C764.7 437.7 769.6 435.2 764.6 446.0C759.6 456.8 763.4 460.0 759.7 458.3C756.0 456.6 756.0 455.1 753.5 441.0C751.0 426.9 753.9 432.6 752.2 416.0C750.5 399.4 749.3 405.3 748.5 391.3C747.7 377.3 743.5 383.1 749.7 374.0Z" fill="#f7f1ee" /><path d="M751.0 398.0Q782 393.0 812.0 384.0" stroke="#d8404a" stroke-width="1.1" fill="none" opacity="0.85"/><path d="M751.8 402.0Q781 397.0 807.8 388.0" stroke="#d8404a" stroke-width="1.1" fill="none" opacity="0.85"/><path d="M752.6 406.0Q780 401.0 803.6 392.0" stroke="#d8404a" stroke-width="1.1" fill="none" opacity="0.85"/><path d="M753.4 410.0Q779 405.0 799.4 396.0" stroke="#d8404a" stroke-width="1.1" fill="none" opacity="0.85"/><path d="M754.2 414.0Q778 409.0 795.2 400.0" stroke="#d8404a" stroke-width="1.1" fill="none" opacity="0.85"/><path d="M755.0 418.0Q777 413.0 791.0 404.0" stroke="#d8404a" stroke-width="1.1" fill="none" opacity="0.85"/><path d="M755.8 422.0Q776 417.0 786.8 408.0" stroke="#d8404a" stroke-width="1.1" fill="none" opacity="0.85"/><path d="M794.0 367.0L797.0 394.0" stroke="#d8404a" stroke-width="1" fill="none" opacity="0.75"/><path d="M798.6 367.8L801.2 391.4" stroke="#d8404a" stroke-width="1" fill="none" opacity="0.75"/><path d="M803.2 368.6L805.4 388.8" stroke="#d8404a" stroke-width="1" fill="none" opacity="0.75"/><path d="M807.8 369.4L809.6 386.2" stroke="#d8404a" stroke-width="1" fill="none" opacity="0.75"/><path d="M812.4 370.2L813.8 383.6" stroke="#d8404a" stroke-width="1" fill="none" opacity="0.75"/><circle cx="775.3" cy="376.4" r="7.4" fill="#f7f1ee"/><circle cx="775.3" cy="376.4" r="6" fill="#c8b890"/><circle cx="775.6" cy="376.7" r="3.4" fill="#1c1a20"/><path d="M767.0 456.0C766.1 449.3 767.8 451.3 772.0 443.0C776.2 434.7 773.8 438.3 779.5 431.0C785.2 423.7 782.4 426.8 789.0 421.0C795.6 415.2 793.7 413.3 799.4 413.6C805.1 413.9 802.8 416.2 806.0 422.0C809.2 427.8 807.0 422.3 809.0 431.0C811.0 439.7 809.3 439.7 812.0 448.0C814.7 456.3 814.0 451.7 817.0 456.0C820.0 460.3 824.7 458.3 821.0 461.0C817.3 463.7 815.7 462.4 806.0 464.0C796.3 465.6 802.5 466.0 792.0 465.7C781.5 465.4 782.9 466.4 774.6 463.2C766.3 460.0 767.9 462.7 767.0 456.0Z" fill="url(#Rg9)" /><path d="M799.4 413.0C803.0 400.0 802.7 408.7 816.7 401.0C830.7 393.3 828.3 392.4 841.5 390.0C854.7 387.6 850.4 385.0 856.4 393.7C862.4 402.4 860.2 400.2 859.4 416.0C858.6 431.8 860.0 424.4 854.0 441.0C848.0 457.6 853.1 450.9 841.5 465.7C829.9 480.5 831.6 476.0 819.2 485.5C806.8 495.0 805.9 495.0 804.3 494.2C802.7 493.4 809.3 492.5 814.3 483.0C819.3 473.5 816.6 476.0 819.2 465.7C821.8 455.4 826.4 460.6 822.0 452.0C817.6 443.4 813.5 453.0 806.0 440.0C798.5 427.0 795.8 426.0 799.4 413.0Z" fill="url(#Rg10)" /><path d="M817.0 472.0C817.4 476.3 818.5 475.6 814.3 483.0C810.1 490.4 805.4 495.2 804.3 494.2C803.2 493.2 808.1 488.1 811.0 480.0C813.9 471.9 811.0 472.7 813.0 470.0C815.0 467.3 816.6 467.7 817.0 472.0Z" fill="#3a3630" opacity="0.9"/><path d="M557.0 675.0C561.0 669.7 560.3 671.7 570.0 669.0C579.7 666.3 574.7 667.0 586.0 667.0C597.3 667.0 593.3 666.3 604.0 669.0C614.7 671.7 610.7 668.0 618.0 675.0C625.3 682.0 623.0 677.7 626.0 690.0C629.0 702.3 627.3 699.0 627.0 712.0C626.7 725.0 629.3 717.7 625.0 729.0C620.7 740.3 620.0 739.0 614.0 746.0C608.0 753.0 610.3 752.7 607.0 750.0C603.7 747.3 607.0 739.3 604.0 738.0C601.0 736.7 603.0 743.3 598.0 746.0C593.0 748.7 591.3 754.0 589.0 746.0C586.7 738.0 591.0 737.7 591.0 722.0C591.0 706.3 595.7 708.0 589.0 699.0C582.3 690.0 581.3 699.7 571.0 695.0C560.7 690.3 562.7 691.7 558.0 685.0C553.3 678.3 553.0 680.3 557.0 675.0Z" fill="url(#Rg11)" /><path d="M634.0 693.0C635.0 686.0 637.0 688.7 646.0 684.0C655.0 679.3 649.7 681.7 661.0 679.0C672.3 676.3 669.3 676.7 680.0 676.0C690.7 675.3 685.0 672.3 693.0 677.0C701.0 681.7 700.0 679.0 704.0 690.0C708.0 701.0 706.3 697.0 705.0 710.0C703.7 723.0 705.0 717.3 700.0 729.0C695.0 740.7 696.0 736.7 690.0 745.0C684.0 753.3 688.0 752.3 682.0 754.0C676.0 755.7 673.3 758.0 672.0 750.0C670.7 742.0 679.3 735.7 678.0 730.0C676.7 724.3 673.3 735.7 668.0 733.0C662.7 730.3 662.0 730.7 662.0 722.0C662.0 713.3 670.3 713.0 668.0 707.0C665.7 701.0 663.3 704.7 655.0 704.0C646.7 703.3 650.0 708.7 643.0 705.0C636.0 701.3 633.0 700.0 634.0 693.0Z" fill="url(#Rg12)" /><path d="M601 700Q606 720 604 738" stroke="#3f3b37" stroke-width="1.6" fill="none" opacity="0.7"/><path d="M612 690Q620 715 614 740" stroke="#3f3b37" stroke-width="1.6" fill="none" opacity="0.7"/><path d="M676 700Q682 716 678 730" stroke="#3f3b37" stroke-width="1.6" fill="none" opacity="0.7"/><path d="M690 690Q698 712 690 742" stroke="#3f3b37" stroke-width="1.6" fill="none" opacity="0.7"/><path d="M590 744Q588 753 597 753" stroke="#2a2826" stroke-width="2.2" fill="none" stroke-linecap="round"/><path d="M606 748Q610 757 599 756" stroke="#2a2826" stroke-width="2.2" fill="none" stroke-linecap="round"/><path d="M663 722Q651 735 662 746Q670 749 675 743" stroke="#2a2826" stroke-width="2.2" fill="none" stroke-linecap="round"/><path d="M682 753Q676 761 664 758" stroke="#2a2826" stroke-width="2.2" fill="none" stroke-linecap="round"/><path d="M418.0 500.0C430.7 490.0 427.7 502.7 460.0 500.0C492.3 497.3 485.7 494.7 515.0 492.0C544.3 489.3 540.3 479.3 548.0 492.0C555.7 504.7 547.3 507.3 538.0 530.0C528.7 552.7 531.7 540.7 520.0 560.0C508.3 579.3 514.7 583.0 503.0 588.0C491.3 593.0 497.7 584.3 485.0 575.0C472.3 565.7 480.0 570.0 465.0 560.0C450.0 550.0 454.3 555.0 440.0 545.0C425.7 535.0 429.3 545.0 422.0 530.0C414.7 515.0 405.3 510.0 418.0 500.0Z" fill="#1c1a20" /><path d="M520.4 523.0L509.2 566.6C506.7 575.3 500.3 577.8 494.0 576.0C488.2 574.4 483.5 569.2 485.8 561.2L499.6 517.0Z" fill="url(#Rg13)" stroke="#1c1a20" stroke-width="1.8" stroke-linejoin="round"/><path d="M496.7 573.1C499.6 575.0 499.2 574.0 502.8 569.2C506.4 564.3 504.9 568.9 507.4 558.6C510.0 548.3 511.1 546.6 510.4 538.3C509.7 530.0 509.9 528.0 505.4 533.8C501.0 539.6 500.8 545.8 497.1 555.7C493.3 565.6 494.2 557.7 494.1 563.5C493.9 569.4 493.8 571.3 496.7 573.1Z" fill="url(#Rg14)" opacity="0.57"/><path d="M492.2 569.2L504.9 524.6" stroke="#2f4268" stroke-width="1.6" opacity="0.9"/><path d="M503.5 541.8L489.0 590.1C485.8 599.8 478.5 602.3 471.5 600.0C465.1 597.9 460.0 591.9 462.9 582.9L480.5 534.2Z" fill="url(#Rg15)" stroke="#1c1a20" stroke-width="1.8" stroke-linejoin="round"/><path d="M474.5 597.3C477.8 599.4 477.1 599.2 481.4 593.8C485.7 588.4 484.0 592.9 487.4 581.2C490.8 569.4 492.0 567.8 491.6 558.5C491.2 549.2 491.5 547.0 486.2 553.3C481.0 559.6 480.7 566.0 475.9 577.4C471.0 588.7 472.1 580.8 471.7 587.4C471.2 594.1 471.3 595.2 474.5 597.3Z" fill="url(#Rg16)" opacity="0.62"/><path d="M469.5 593.0L486.1 542.9" stroke="#2f4268" stroke-width="1.6" opacity="0.9"/><path d="M487.4 543.3L460.9 603.6C456.5 613.1 448.7 614.9 441.7 611.6C435.4 608.6 430.8 601.9 434.9 593.0L464.6 532.7Z" fill="url(#Rg17)" stroke="#1c1a20" stroke-width="1.8" stroke-linejoin="round"/><path d="M445.1 609.3C448.2 611.9 446.7 613.2 452.5 606.7C458.2 600.2 456.0 604.5 462.3 589.9C468.6 575.2 469.9 574.0 471.4 562.7C472.9 551.5 473.6 548.8 466.8 556.1C460.0 563.4 458.8 570.2 450.9 584.5C443.1 598.9 445.2 590.8 443.2 599.1C441.3 607.3 442.0 606.8 445.1 609.3Z" fill="url(#Rg18)" opacity="0.68"/><path d="M440.4 604.4L468.8 543.6" stroke="#2f4268" stroke-width="1.6" opacity="0.9"/><path d="M471.6 533.9L435.2 608.4C430.2 618.1 422.1 619.6 415.0 616.0C408.5 612.7 404.1 605.5 408.7 596.5L448.4 522.1Z" fill="url(#Rg19)" stroke="#1c1a20" stroke-width="1.8" stroke-linejoin="round"/><path d="M418.5 613.9C421.6 616.6 419.2 619.7 426.2 611.6C433.2 603.6 430.8 607.8 439.5 589.7C448.2 571.6 449.5 570.7 452.3 557.4C455.2 544.0 456.2 540.9 448.1 549.7C440.0 558.5 438.3 565.8 427.9 583.7C417.5 601.7 420.0 593.4 416.8 603.5C413.7 613.5 415.4 611.2 418.5 613.9Z" fill="url(#Rg20)" opacity="0.75"/><path d="M413.9 608.7L451.6 534.8" stroke="#2f4268" stroke-width="1.6" opacity="0.9"/><path d="M455.2 526.1L403.3 593.6C396.5 602.1 388.2 602.0 382.0 597.0C376.3 592.5 373.4 584.6 379.7 576.6L434.8 509.9Z" fill="url(#Rg21)" stroke="#1c1a20" stroke-width="1.8" stroke-linejoin="round"/><path d="M385.9 595.6C388.4 598.9 385.2 601.6 393.8 594.9C402.5 588.2 399.3 591.9 411.8 575.5C424.2 559.1 425.6 558.5 431.2 545.8C436.8 533.0 438.6 530.1 428.7 537.3C418.8 544.5 415.7 551.4 401.6 567.4C387.4 583.3 391.5 575.7 386.3 585.1C381.1 594.5 383.4 592.3 385.9 595.6Z" fill="url(#Rg22)" opacity="0.78"/><path d="M382.3 589.6L435.3 523.2" stroke="#2f4268" stroke-width="1.6" opacity="0.9"/><path d="M437.9 514.8L375.0 580.8C366.8 589.0 358.1 588.0 352.0 582.0C346.5 576.6 344.2 567.8 351.9 560.1L418.1 495.2Z" fill="url(#Rg23)" stroke="#1c1a20" stroke-width="1.8" stroke-linejoin="round"/><path d="M356.1 581.1C358.5 584.9 354.4 587.8 364.4 581.6C374.4 575.4 370.8 578.6 386.1 562.5C401.4 546.3 402.7 545.9 410.2 533.0C417.6 520.1 419.8 517.2 408.4 523.7C397.1 530.3 393.2 537.1 376.2 552.7C359.1 568.2 364.0 560.9 357.3 570.4C350.7 579.9 353.8 577.4 356.1 581.1Z" fill="url(#Rg24)" opacity="0.75"/><path d="M352.9 574.5L417.1 509.4" stroke="#2f4268" stroke-width="1.6" opacity="0.9"/><path d="M429.2 490.5L350.0 561.5C341.3 569.1 332.6 567.4 327.0 561.0C321.9 555.2 320.3 546.3 328.5 539.1L410.8 469.5Z" fill="url(#Rg25)" stroke="#1c1a20" stroke-width="1.8" stroke-linejoin="round"/><path d="M331.2 560.5C333.2 564.3 327.6 568.1 339.4 561.5C351.2 554.9 347.4 557.9 366.5 540.6C385.6 523.3 386.8 523.2 396.7 509.6C406.6 495.9 409.4 492.8 396.2 499.7C383.1 506.5 378.3 513.4 357.3 530.1C336.3 546.8 341.9 539.7 333.2 549.8C324.5 560.0 329.1 556.6 331.2 560.5Z" fill="url(#Rg26)" opacity="0.78"/><path d="M328.5 553.6L407.6 484.6" stroke="#2f4268" stroke-width="1.6" opacity="0.9"/><path d="M417.1 469.2L326.7 544.4C317.4 551.9 308.5 549.8 303.0 543.0C298.0 536.8 296.7 527.5 305.4 520.5L398.9 446.8Z" fill="url(#Rg27)" stroke="#1c1a20" stroke-width="1.8" stroke-linejoin="round"/><path d="M307.2 542.7C309.2 546.7 302.4 551.2 315.5 544.2C328.7 537.2 324.8 540.1 346.6 521.7C368.4 503.3 369.5 503.5 381.0 489.1C392.6 474.7 395.7 471.5 381.2 478.6C366.7 485.8 361.4 492.7 337.5 510.5C313.6 528.3 319.6 521.3 309.5 532.0C299.4 542.7 305.2 538.6 307.2 542.7Z" fill="url(#Rg28)" opacity="0.85"/><path d="M304.6 535.5L394.5 462.8" stroke="#2f4268" stroke-width="1.6" opacity="0.9"/><path d="M400.6 447.6L291.3 530.4C281.6 537.5 272.8 535.1 267.6 528.0C262.8 521.6 261.9 512.3 271.0 505.6L383.4 424.4Z" fill="url(#Rg29)" stroke="#1c1a20" stroke-width="1.8" stroke-linejoin="round"/><path d="M271.8 527.8C273.7 532.0 264.8 537.5 280.1 529.7C295.3 522.0 291.3 524.7 317.6 504.5C343.9 484.4 344.7 484.8 359.0 469.4C373.2 454.0 377.1 450.5 360.4 458.4C343.8 466.2 337.7 473.3 309.0 493.0C280.4 512.6 287.0 505.6 274.6 517.3C262.2 528.9 270.0 523.7 271.8 527.8Z" fill="url(#Rg30)" opacity="0.93"/><path d="M269.6 520.6L376.7 441.3" stroke="#2f4268" stroke-width="1.6" opacity="0.9"/><path d="M424.0 518.0C429.0 506.7 440.0 505.3 460.0 512.0C480.0 518.7 466.3 541.3 484.0 538.0C501.7 534.7 492.3 517.0 513.0 502.0C533.7 487.0 538.0 484.3 546.0 493.0C554.0 501.7 546.7 506.3 537.0 528.0C527.3 549.7 528.3 538.7 517.0 558.0C505.7 577.3 511.3 584.7 503.0 586.0C494.7 587.3 503.0 573.0 492.0 562.0C481.0 551.0 485.7 558.3 470.0 553.0C454.3 547.7 460.3 557.7 445.0 546.0C429.7 534.3 419.0 529.3 424.0 518.0Z" fill="#1c1a20" /><path d="M250.0 496.0C252.3 490.3 245.0 495.7 257.0 479.0C269.0 462.3 264.7 466.3 286.0 446.0C307.3 425.7 295.0 434.7 321.0 418.0C347.0 401.3 349.7 403.3 364.0 396.0L394.0 439.0C376.0 448.3 372.7 447.7 340.0 467.0C307.3 486.3 320.7 483.7 296.0 497.0C271.3 510.3 281.3 507.3 266.0 507.0C250.7 506.7 255.3 499.7 250.0 496.0Z" fill="url(#Rg31)" stroke="#1d2536" stroke-width="1"/><path d="M250.0 496.0C252.3 490.3 245.0 495.7 257.0 479.0C269.0 462.3 264.7 466.3 286.0 446.0C307.3 425.7 295.0 434.7 321.0 418.0C347.0 401.3 349.7 403.3 364.0 396.0" stroke="#2f4268" stroke-width="7" fill="none" stroke-linecap="round"/><path d="M250.0 496.0C252.3 490.3 245.0 495.7 257.0 479.0C269.0 462.3 264.7 466.3 286.0 446.0C307.3 425.7 295.0 434.7 321.0 418.0C347.0 401.3 349.7 403.3 364.0 396.0" stroke="#1d2536" stroke-width="2.2" fill="none" stroke-linecap="round"/><path d="M198.0 471.0C200.3 465.3 194.7 469.3 205.0 454.0C215.3 438.7 209.3 444.3 229.0 425.0C248.7 405.7 236.7 412.7 264.0 396.0C291.3 379.3 279.0 387.0 311.0 375.0C343.0 363.0 343.7 365.0 360.0 360.0L364.0 401.0C344.3 411.7 335.7 414.3 305.0 433.0C274.3 451.7 292.0 443.7 272.0 457.0C252.0 470.3 264.3 465.3 245.0 473.0C225.7 480.7 229.7 480.7 214.0 480.0C198.3 479.3 203.3 474.0 198.0 471.0Z" fill="url(#Rg32)" /><path d="M198.0 471.0C200.3 465.3 194.7 469.3 205.0 454.0C215.3 438.7 209.3 444.3 229.0 425.0C248.7 405.7 236.7 412.7 264.0 396.0C291.3 379.3 279.0 387.0 311.0 375.0C343.0 363.0 343.7 365.0 360.0 360.0" stroke="#2f4268" stroke-width="8" fill="none" stroke-linecap="round"/><path d="M198.0 471.0C200.3 465.3 194.7 469.3 205.0 454.0C215.3 438.7 209.3 444.3 229.0 425.0C248.7 405.7 236.7 412.7 264.0 396.0C291.3 379.3 279.0 387.0 311.0 375.0C343.0 363.0 343.7 365.0 360.0 360.0" stroke="#1c1a20" stroke-width="2.6" fill="none" stroke-linecap="round"/><path d="M268.0 398.0C276.0 387.0 271.0 394.0 290.0 386.0C309.0 378.0 301.0 382.0 325.0 374.0C349.0 366.0 349.0 356.0 362.0 362.0C375.0 368.0 374.7 378.0 364.0 392.0C353.3 406.0 351.3 395.7 330.0 404.0C308.7 412.3 316.7 409.0 300.0 417.0C283.3 425.0 291.3 427.3 280.0 428.0C268.7 428.7 270.0 429.0 266.0 419.0C262.0 409.0 260.0 409.0 268.0 398.0Z" fill="url(#Rg33)" /><path d="M134.0 427.0C139.3 420.3 135.0 421.3 150.0 407.0C165.0 392.7 157.7 398.3 179.0 384.0C200.3 369.7 185.7 377.7 214.0 364.0C242.3 350.3 225.3 356.0 264.0 343.0C302.7 330.0 308.0 331.0 330.0 325.0L270.0 393.0C261.7 395.7 261.7 394.3 245.0 401.0C228.3 407.7 235.7 403.7 220.0 413.0C204.3 422.3 212.0 421.0 198.0 429.0C184.0 437.0 192.7 434.0 178.0 437.0C163.3 440.0 168.7 441.3 154.0 438.0C139.3 434.7 140.7 430.7 134.0 427.0Z" fill="url(#Rg34)" /><path d="M134.0 427.0C139.3 420.3 135.0 421.3 150.0 407.0C165.0 392.7 157.7 398.3 179.0 384.0C200.3 369.7 185.7 377.7 214.0 364.0C242.3 350.3 225.3 356.0 264.0 343.0C302.7 330.0 308.0 331.0 330.0 325.0" stroke="#2f4268" stroke-width="8" fill="none" stroke-linecap="round"/><path d="M134.0 427.0C139.3 420.3 135.0 421.3 150.0 407.0C165.0 392.7 157.7 398.3 179.0 384.0C200.3 369.7 185.7 377.7 214.0 364.0C242.3 350.3 225.3 356.0 264.0 343.0C302.7 330.0 308.0 331.0 330.0 325.0" stroke="#1c1a20" stroke-width="2.6" fill="none" stroke-linecap="round"/><path d="M216.0 378.0C222.3 366.0 215.3 372.7 232.0 362.0C248.7 351.3 233.3 357.7 266.0 346.0C298.7 334.3 307.0 321.7 330.0 327.0C353.0 332.3 345.0 345.3 335.0 362.0C325.0 378.7 321.0 368.0 300.0 377.0C279.0 386.0 288.0 382.0 272.0 389.0C256.0 396.0 265.3 391.7 252.0 398.0C238.7 404.3 242.7 404.0 232.0 408.0C221.3 412.0 226.3 413.3 220.0 410.0C213.7 406.7 214.3 408.7 213.0 398.0C211.7 387.3 209.7 390.0 216.0 378.0Z" fill="url(#Rg35)" /><path d="M70.7 360.1C84.4 355.6 85.6 355.2 111.7 346.5C137.8 337.8 124.1 342.4 148.9 334.1C173.7 325.8 162.9 328.3 186.1 321.7C209.3 315.1 197.7 318.4 218.4 314.2C239.1 310.0 238.2 310.9 248.1 309.2L230.0 345.0C215.4 348.8 211.5 348.5 186.1 356.4C160.7 364.3 178.6 363.0 153.8 368.8C129.0 374.6 134.0 373.8 111.7 373.8C89.4 373.8 100.5 373.4 86.8 368.8C73.1 364.2 76.1 363.0 70.7 360.1Z" fill="url(#Rg36)" /><path d="M70.7 360.1C84.4 355.6 85.6 355.2 111.7 346.5C137.8 337.8 124.1 342.4 148.9 334.1C173.7 325.8 162.9 328.3 186.1 321.7C209.3 315.1 197.7 318.4 218.4 314.2C239.1 310.0 238.2 310.9 248.1 309.2" stroke="#3a1018" stroke-width="2.6" fill="none" stroke-linecap="round"/><path d="M134.2 342.5L94.9 370.0" stroke="#3a4870" stroke-width="1.6" opacity="0.55"/><path d="M150.8 337.0L105.9 372.2" stroke="#3a4870" stroke-width="1.6" opacity="0.55"/><path d="M167.3 331.5L122.7 371.1" stroke="#3a4870" stroke-width="1.6" opacity="0.55"/><path d="M183.8 326.0L141.4 368.9" stroke="#3a4870" stroke-width="1.6" opacity="0.55"/><path d="M199.3 321.5L158.0 365.0" stroke="#3a4870" stroke-width="1.6" opacity="0.55"/><path d="M213.6 318.2L172.3 359.5" stroke="#3a4870" stroke-width="1.6" opacity="0.55"/><path d="M227.7 315.1L188.0 354.1" stroke="#3a4870" stroke-width="1.6" opacity="0.55"/><path d="M240.9 312.9L207.5 349.1" stroke="#3a4870" stroke-width="1.6" opacity="0.55"/><path d="M196.0 324.0C206.0 315.7 200.7 320.0 218.0 315.0C235.3 310.0 210.7 314.7 248.0 309.0C285.3 303.3 301.0 291.0 330.0 298.0C359.0 305.0 345.0 317.3 335.0 330.0C325.0 342.7 324.0 332.3 300.0 336.0C276.0 339.7 288.7 336.7 263.0 341.0C237.3 345.3 245.0 344.0 223.0 349.0C201.0 354.0 209.3 354.3 197.0 356.0C184.7 357.7 189.0 359.3 186.0 354.0C183.0 348.7 184.7 350.0 188.0 340.0C191.3 330.0 186.0 332.3 196.0 324.0Z" fill="url(#Rg37)" /><path d="M236.0 322.0C242.7 316.7 244.0 319.3 262.0 316.0C280.0 312.7 278.7 310.7 290.0 312.0C301.3 313.3 302.7 315.3 296.0 320.0C289.3 324.7 288.0 322.0 270.0 326.0C252.0 330.0 253.3 333.3 242.0 332.0C230.7 330.7 229.3 327.3 236.0 322.0Z" fill="#e85c68" opacity="0.75"/><path d="M40.9 269.5C52.1 272.4 46.7 274.0 74.4 278.2C102.1 282.4 91.0 282.0 124.1 282.0C157.2 282.0 148.9 280.7 173.7 278.2C198.5 275.7 173.7 276.6 198.5 274.5C223.3 272.4 231.6 272.8 248.1 272.0L183.6 306.8C172.0 306.0 168.7 303.1 148.9 304.3C129.1 305.5 138.2 308.9 124.1 310.5C110.0 312.1 123.3 313.8 106.7 309.2C90.1 304.6 92.2 305.1 74.4 296.8C56.6 288.5 64.5 293.5 53.3 284.4C42.1 275.3 45.0 274.5 40.9 269.5Z" fill="url(#Rg38)" /><path d="M40.9 269.5C52.1 272.4 46.7 274.0 74.4 278.2C102.1 282.4 91.0 282.0 124.1 282.0C157.2 282.0 148.9 280.7 173.7 278.2C198.5 275.7 173.7 276.6 198.5 274.5C223.3 272.4 231.6 272.8 248.1 272.0" stroke="#3a1018" stroke-width="2.6" fill="none" stroke-linecap="round"/><path d="M102.5 281.4L59.7 288.9" stroke="#3a4870" stroke-width="1.6" opacity="0.55"/><path d="M124.6 283.1L69.1 294.4" stroke="#3a4870" stroke-width="1.6" opacity="0.55"/><path d="M146.6 282.2L82.2 299.9" stroke="#3a4870" stroke-width="1.6" opacity="0.55"/><path d="M168.7 280.5L96.5 305.4" stroke="#3a4870" stroke-width="1.6" opacity="0.55"/><path d="M185.2 278.9L107.6 308.5" stroke="#3a4870" stroke-width="1.6" opacity="0.55"/><path d="M196.2 277.2L115.3 309.1" stroke="#3a4870" stroke-width="1.6" opacity="0.55"/><path d="M210.0 275.7L123.9 308.8" stroke="#3a4870" stroke-width="1.6" opacity="0.55"/><path d="M232.1 274.6L134.9 306.1" stroke="#3a4870" stroke-width="1.6" opacity="0.55"/><path d="M198.0 277.0C218.7 271.0 204.0 275.0 248.0 272.0C292.0 269.0 301.0 258.7 330.0 268.0C359.0 277.3 345.0 288.7 335.0 300.0C325.0 311.3 322.3 301.0 300.0 302.0C277.7 303.0 285.3 302.2 268.0 303.0C250.7 303.8 267.0 302.3 248.0 304.5C229.0 306.7 230.3 308.0 211.0 309.5C191.7 311.0 199.3 310.5 190.0 309.0C180.7 307.5 184.3 311.3 183.0 305.0C181.7 298.7 181.0 299.3 186.0 290.0C191.0 280.7 177.3 283.0 198.0 277.0Z" fill="url(#Rg39)" /><path d="M210.0 301.0C211.3 293.3 212.0 292.0 224.0 285.0C236.0 278.0 236.7 278.7 246.0 280.0C255.3 281.3 254.7 281.3 252.0 289.0C249.3 296.7 248.7 296.7 238.0 303.0C227.3 309.3 229.3 308.7 220.0 308.0C210.7 307.3 208.7 308.7 210.0 301.0Z" fill="#e85c68" opacity="0.9"/><path d="M262.0 282.0C268.7 277.7 278.7 277.7 290.0 279.0C301.3 280.3 302.7 281.7 296.0 286.0C289.3 290.3 281.3 293.3 270.0 292.0C258.7 290.7 255.3 286.3 262.0 282.0Z" fill="#e85c68" opacity="0.6"/><path d="M29.8 205.0C40.5 208.3 38.8 208.4 62.0 215.0C85.2 221.6 73.6 218.7 99.3 224.9C125.0 231.1 114.2 230.3 139.0 233.6C163.8 236.9 151.4 234.4 173.7 234.8C196.0 235.2 195.2 234.8 206.0 234.8L160.0 262.0C148.9 261.2 143.5 261.2 126.6 259.6C109.7 258.0 122.5 260.0 109.2 257.1C95.9 254.2 102.5 256.7 86.8 250.9C71.1 245.1 77.7 249.3 62.0 239.8C46.3 230.3 50.4 234.0 39.7 222.4C29.0 210.8 33.1 210.8 29.8 205.0Z" fill="url(#Rg40)" /><path d="M29.8 205.0C40.5 208.3 38.8 208.4 62.0 215.0C85.2 221.6 73.6 218.7 99.3 224.9C125.0 231.1 114.2 230.3 139.0 233.6C163.8 236.9 151.4 234.4 173.7 234.8C196.0 235.2 195.2 234.8 206.0 234.8" stroke="#3a1018" stroke-width="2.8" fill="none" stroke-linecap="round"/><path d="M86.7 221.4L47.9 230.1" stroke="#3a4870" stroke-width="1.6" opacity="0.55"/><path d="M105.3 226.4L59.0 238.8" stroke="#3a4870" stroke-width="1.6" opacity="0.55"/><path d="M125.2 230.8L71.4 244.4" stroke="#3a4870" stroke-width="1.6" opacity="0.55"/><path d="M145.0 235.1L83.8 249.9" stroke="#3a4870" stroke-width="1.6" opacity="0.55"/><path d="M162.3 235.7L95.0 253.0" stroke="#3a4870" stroke-width="1.6" opacity="0.55"/><path d="M179.7 236.3L106.2 256.1" stroke="#3a4870" stroke-width="1.6" opacity="0.55"/><path d="M195.8 236.3L114.9 257.4" stroke="#3a4870" stroke-width="1.6" opacity="0.55"/><path d="M139.0 234.0C155.6 230.9 151.4 234.5 173.7 234.8C196.0 235.1 177.2 233.7 206.0 234.8C234.8 235.9 218.7 235.6 260.0 238.0C301.3 240.4 305.0 230.7 330.0 242.0C355.0 253.3 348.3 261.7 335.0 272.0C321.7 282.3 319.0 273.0 290.0 273.0C261.0 273.0 277.7 273.2 248.0 272.0C218.3 270.8 225.8 272.0 201.0 269.5C176.2 267.0 197.7 267.9 173.7 264.6C149.7 261.3 147.2 263.1 129.0 259.6C110.8 256.1 120.7 259.2 119.0 254.0C117.3 248.8 117.3 250.7 124.0 244.0C130.7 237.3 122.4 237.1 139.0 234.0Z" fill="url(#Rg41)" /><path d="M165.0 256.0C178.3 253.7 173.3 254.7 200.0 255.0C226.7 255.3 221.7 255.0 245.0 257.0C268.3 259.0 264.3 257.0 270.0 261.0C275.7 265.0 277.0 266.7 262.0 269.0C247.0 271.3 250.7 269.3 225.0 268.0C199.3 266.7 206.7 267.0 185.0 265.0C163.3 263.0 166.7 265.0 160.0 262.0C153.3 259.0 151.7 258.3 165.0 256.0Z" fill="#e85c68" opacity="0.9"/><path d="M130.0 246.0C133.3 241.7 140.0 241.7 150.0 243.0C160.0 244.3 163.3 245.7 160.0 250.0C156.7 254.3 150.0 257.3 140.0 256.0C130.0 254.7 126.7 250.3 130.0 246.0Z" fill="#e85c68" opacity="0.7"/><path d="M22.3 126.9C31.4 133.9 28.1 135.2 49.6 148.0C71.1 160.8 66.1 156.2 86.8 165.3C107.5 174.4 91.0 167.8 111.7 175.3C132.4 182.8 124.1 181.1 148.9 187.7C173.7 194.3 160.5 191.0 186.1 195.1C211.7 199.2 187.8 196.7 225.8 200.0C263.8 203.3 275.3 203.3 300.0 205.0L300.0 245.0C268.7 241.6 254.7 245.6 206.0 234.8C157.3 224.0 179.5 221.2 153.8 212.5C128.1 203.8 145.5 213.7 129.0 208.7C112.5 203.7 122.4 207.1 104.2 197.6C86.0 188.1 92.6 191.0 74.4 180.2C56.2 169.4 63.6 176.0 49.6 165.3C35.6 154.6 41.4 160.8 32.3 148.0C23.2 135.2 25.6 133.9 22.3 126.9Z" fill="url(#Rg42)" /><path d="M22.3 126.9C31.4 133.9 28.1 135.2 49.6 148.0C71.1 160.8 66.1 156.2 86.8 165.3C107.5 174.4 91.0 167.8 111.7 175.3C132.4 182.8 136.5 183.6 148.9 187.7" stroke="#3a1018" stroke-width="2.5" fill="none" stroke-linecap="round"/><path d="M48.4 72.3C57.1 80.1 53.3 79.7 74.4 95.8C95.5 111.9 86.9 105.8 111.7 120.7C136.5 135.6 120.0 125.6 148.9 140.5C177.8 155.4 165.4 150.8 198.5 165.3C231.6 179.8 215.0 173.1 248.1 183.9C281.2 194.7 281.2 193.0 297.8 197.6L300.0 212.0C286.7 210.0 285.6 210.8 260.0 206.0C234.4 201.2 248.8 205.4 223.3 197.6C197.8 189.8 215.0 197.6 183.6 182.7C152.2 167.8 157.1 169.4 129.0 152.9C100.9 136.4 117.5 146.3 99.3 133.1C81.1 119.9 89.7 127.3 74.4 113.2C59.1 99.1 62.0 104.5 53.3 90.9C44.6 77.3 50.0 78.5 48.4 72.3Z" fill="url(#Rg43)" /><path d="M120.0 146.0C130.7 150.3 128.3 151.7 150.0 163.0C171.7 174.3 163.3 170.3 185.0 180.0C206.7 189.7 208.3 187.7 215.0 192.0C221.7 196.3 220.0 197.0 205.0 193.0C190.0 189.0 192.3 190.0 170.0 180.0C147.7 170.0 155.3 173.0 138.0 163.0C120.7 153.0 124.0 155.7 118.0 150.0C112.0 144.3 109.3 141.7 120.0 146.0Z" fill="#e85c68" opacity="0.95"/><path d="M82.0 108.0C84.7 108.0 86.7 110.0 100.0 118.0C113.3 126.0 118.0 128.0 122.0 132.0C126.0 136.0 122.0 134.7 112.0 130.0C102.0 125.3 102.0 125.3 92.0 118.0C82.0 110.7 79.3 108.0 82.0 108.0Z" fill="#e85c68" opacity="0.8"/><path d="M48.4 72.3C57.1 80.1 53.3 79.7 74.4 95.8C95.5 111.9 86.9 105.8 111.7 120.7C136.5 135.6 120.0 125.6 148.9 140.5C177.8 155.4 165.4 150.8 198.5 165.3C231.6 179.8 231.6 177.7 248.1 183.9" stroke="#3a1018" stroke-width="2.2" fill="none" stroke-linecap="round"/><path d="M80.0 112.0C89.7 116.0 85.0 116.7 105.0 130.0C125.0 143.3 111.7 135.3 140.0 152.0C168.3 168.7 160.0 165.3 190.0 180.0C220.0 194.7 218.3 189.3 230.0 196.0C241.7 202.7 240.7 203.3 225.0 200.0C209.3 196.7 215.0 200.3 183.0 186.0C151.0 171.7 157.0 173.0 129.0 157.0C101.0 141.0 116.7 151.0 99.0 138.0C81.3 125.0 82.3 126.7 76.0 118.0C69.7 109.3 70.3 108.0 80.0 112.0Z" fill="#ac1019" opacity="0.6"/><path d="M187.3 64.8C186.9 67.7 184.0 62.3 186.1 73.5C188.2 84.7 185.2 81.8 193.5 98.3C201.8 114.8 196.8 106.5 210.9 123.1C225.0 139.7 216.7 131.4 235.7 148.0C254.7 164.6 247.3 157.1 268.0 172.8C288.7 188.5 287.9 187.7 297.8 195.1L347.6 200.0C339.3 195.1 343.3 197.6 322.6 185.2C301.9 172.8 310.2 179.4 285.4 162.8C260.6 146.2 268.8 152.9 248.1 135.5C227.4 118.1 237.3 126.4 223.3 110.7C209.3 95.0 218.0 103.7 206.0 88.4C194.0 73.1 193.5 72.7 187.3 64.8Z" fill="#e2141d" /><path d="M189.0 78.0C188.3 84.0 188.3 84.7 196.0 100.0C203.7 115.3 198.7 108.0 212.0 124.0C225.3 140.0 223.3 136.0 236.0 148.0C248.7 160.0 247.3 160.7 250.0 160.0C252.7 159.3 252.0 158.0 244.0 146.0C236.0 134.0 237.3 138.7 226.0 124.0C214.7 109.3 219.3 116.0 210.0 102.0C200.7 88.0 205.0 90.0 198.0 82.0C191.0 74.0 189.7 72.0 189.0 78.0Z" fill="#e85c68" opacity="0.9"/><path d="M187.3 64.8C191.5 71.5 189.8 69.3 200.0 85.0C210.2 100.7 203.7 94.0 218.0 112.0C232.3 130.0 223.0 120.7 243.0 139.0C263.0 157.3 255.0 150.0 278.0 167.0C301.0 184.0 300.7 182.3 312.0 190.0L347.6 200.0C339.3 195.1 343.3 197.6 322.6 185.2C301.9 172.8 310.2 179.4 285.4 162.8C260.6 146.2 268.8 152.9 248.1 135.5C227.4 118.1 237.3 126.4 223.3 110.7C209.3 95.0 218.0 103.7 206.0 88.4C194.0 73.1 193.5 72.7 187.3 64.8Z" fill="url(#Rg44)" /><path d="M187.3 64.8C193.5 72.7 194.0 73.1 206.0 88.4C218.0 103.7 209.3 95.0 223.3 110.7C237.3 126.4 227.4 118.1 248.1 135.5C268.8 152.9 260.6 146.2 285.4 162.8C310.2 179.4 301.9 172.8 322.6 185.2C343.3 197.6 339.3 195.1 347.6 200.0" stroke="#1d2536" stroke-width="2" fill="none" stroke-linecap="round"/><path d="M300.0 168.0C312.7 172.7 312.0 177.0 343.0 196.0C374.0 215.0 358.7 206.3 393.0 225.0C427.3 243.7 426.3 239.7 446.0 252.0C465.7 264.3 467.3 266.0 452.0 262.0C436.7 258.0 434.0 256.7 400.0 240.0C366.0 223.3 381.7 231.3 350.0 212.0C318.3 192.7 321.7 196.7 305.0 182.0C288.3 167.3 287.3 163.3 300.0 168.0Z" fill="#8fb0e0" /><path d="M290 160Q380 215 450 258" stroke="#1d2536" stroke-width="2" fill="none" opacity="0.8"/><path d="M298.0 188.0C312.3 182.7 311.3 185.7 343.0 199.0C374.7 212.3 358.7 209.7 393.0 228.0C427.3 246.3 410.3 235.7 446.0 254.0C481.7 272.3 464.0 257.0 500.0 283.0C536.0 309.0 518.3 301.7 554.0 332.0C589.7 362.3 578.3 348.7 607.0 374.0C635.7 399.3 633.0 382.7 640.0 408.0C647.0 433.3 641.3 427.7 628.0 450.0C614.7 472.3 619.3 461.7 600.0 475.0C580.7 488.3 589.0 482.7 570.0 490.0C551.0 497.3 562.0 492.3 543.0 497.0C524.0 501.7 528.3 493.7 513.0 504.0C497.7 514.3 507.0 515.0 497.0 528.0C487.0 541.0 491.3 539.7 483.0 543.0C474.7 546.3 479.7 546.0 472.0 538.0C464.3 530.0 470.7 524.7 460.0 519.0C449.3 513.3 452.0 519.0 440.0 521.0C428.0 523.0 430.0 534.7 424.0 525.0C418.0 515.3 426.0 513.7 422.0 492.0C418.0 470.3 423.3 475.7 412.0 460.0C400.7 444.3 400.0 463.0 388.0 445.0C376.0 427.0 384.0 431.0 376.0 406.0C368.0 381.0 375.3 390.3 364.0 370.0C352.7 349.7 354.7 361.7 342.0 345.0C329.3 328.3 333.3 338.3 326.0 320.0C318.7 301.7 324.7 313.3 320.0 290.0C315.3 266.7 318.7 275.0 312.0 250.0C305.3 225.0 304.7 235.7 300.0 215.0C295.3 194.3 283.7 193.3 298.0 188.0Z" fill="url(#Rg45)" /><ellipse cx="307.9" cy="215.3" rx="26" ry="10" transform="rotate(18 307.9 215.3)" fill="#e2141d" fill-opacity="0.55" stroke="#ac1019" stroke-width="1.2" stroke-opacity="0.45"/><ellipse cx="315.0" cy="236.4" rx="26" ry="10" transform="rotate(19 315.0 236.4)" fill="#e2141d" fill-opacity="0.55" stroke="#ac1019" stroke-width="1.2" stroke-opacity="0.45"/><ellipse cx="316.1" cy="261.4" rx="26" ry="10" transform="rotate(42 316.1 261.4)" fill="#e2141d" fill-opacity="0.55" stroke="#ac1019" stroke-width="1.2" stroke-opacity="0.45"/><ellipse cx="324.7" cy="286.9" rx="26" ry="10" transform="rotate(43 324.7 286.9)" fill="#e85c68" fill-opacity="0.95" stroke="#ac1019" stroke-width="1.2" stroke-opacity="0.45"/><ellipse cx="327.1" cy="313.2" rx="26" ry="10" transform="rotate(48 327.1 313.2)" fill="#e2141d" fill-opacity="0.55" stroke="#ac1019" stroke-width="1.2" stroke-opacity="0.45"/><ellipse cx="331.4" cy="332.4" rx="26" ry="10" transform="rotate(59 331.4 332.4)" fill="#e2141d" fill-opacity="0.55" stroke="#ac1019" stroke-width="1.2" stroke-opacity="0.45"/><ellipse cx="343.4" cy="222.2" rx="24" ry="10" transform="rotate(26 343.4 222.2)" fill="#ea3a44" fill-opacity="0.55" stroke="#ac1019" stroke-width="1.2" stroke-opacity="0.45"/><ellipse cx="351.8" cy="251.4" rx="24" ry="10" transform="rotate(29 351.8 251.4)" fill="#ea3a44" fill-opacity="0.55" stroke="#ac1019" stroke-width="1.2" stroke-opacity="0.45"/><ellipse cx="354.2" cy="275.1" rx="24" ry="10" transform="rotate(31 354.2 275.1)" fill="#ea3a44" fill-opacity="0.55" stroke="#ac1019" stroke-width="1.2" stroke-opacity="0.45"/><ellipse cx="363.0" cy="295.1" rx="24" ry="10" transform="rotate(32 363.0 295.1)" fill="#e85c68" fill-opacity="0.95" stroke="#ac1019" stroke-width="1.2" stroke-opacity="0.45"/><ellipse cx="368.7" cy="321.3" rx="24" ry="10" transform="rotate(45 368.7 321.3)" fill="#ac1019" fill-opacity="0.95" stroke="#ac1019" stroke-width="1.2" stroke-opacity="0.45"/><ellipse cx="370.1" cy="345.1" rx="24" ry="10" transform="rotate(47 370.1 345.1)" fill="#ea3a44" fill-opacity="0.55" stroke="#ac1019" stroke-width="1.2" stroke-opacity="0.45"/><ellipse cx="375.7" cy="372.4" rx="24" ry="10" transform="rotate(58 375.7 372.4)" fill="#ea3a44" fill-opacity="0.55" stroke="#ac1019" stroke-width="1.2" stroke-opacity="0.45"/><ellipse cx="387.9" cy="247.9" rx="22" ry="10" transform="rotate(23 387.9 247.9)" fill="#e85c68" fill-opacity="0.95" stroke="#ac1019" stroke-width="1.2" stroke-opacity="0.45"/><ellipse cx="392.2" cy="271.4" rx="22" ry="10" transform="rotate(31 392.2 271.4)" fill="#e2141d" fill-opacity="0.55" stroke="#ac1019" stroke-width="1.2" stroke-opacity="0.45"/><ellipse cx="395.3" cy="290.4" rx="22" ry="10" transform="rotate(35 395.3 290.4)" fill="#e2141d" fill-opacity="0.55" stroke="#ac1019" stroke-width="1.2" stroke-opacity="0.45"/><ellipse cx="396.1" cy="313.1" rx="22" ry="10" transform="rotate(41 396.1 313.1)" fill="#e2141d" fill-opacity="0.55" stroke="#ac1019" stroke-width="1.2" stroke-opacity="0.45"/><ellipse cx="398.9" cy="341.1" rx="22" ry="10" transform="rotate(39 398.9 341.1)" fill="#e85c68" fill-opacity="0.95" stroke="#ac1019" stroke-width="1.2" stroke-opacity="0.45"/><ellipse cx="404.8" cy="364.5" rx="22" ry="10" transform="rotate(51 404.8 364.5)" fill="#e85c68" fill-opacity="0.95" stroke="#ac1019" stroke-width="1.2" stroke-opacity="0.45"/><ellipse cx="411.6" cy="383.7" rx="22" ry="10" transform="rotate(53 411.6 383.7)" fill="#ac1019" fill-opacity="0.95" stroke="#ac1019" stroke-width="1.2" stroke-opacity="0.45"/><ellipse cx="418.0" cy="412.9" rx="22" ry="10" transform="rotate(55 418.0 412.9)" fill="#e2141d" fill-opacity="0.55" stroke="#ac1019" stroke-width="1.2" stroke-opacity="0.45"/><ellipse cx="423.5" cy="267.5" rx="21" ry="10" transform="rotate(22 423.5 267.5)" fill="#e85c68" fill-opacity="0.95" stroke="#ac1019" stroke-width="1.2" stroke-opacity="0.45"/><ellipse cx="425.7" cy="294.4" rx="21" ry="10" transform="rotate(26 425.7 294.4)" fill="#e85c68" fill-opacity="0.95" stroke="#ac1019" stroke-width="1.2" stroke-opacity="0.45"/><ellipse cx="427.6" cy="322.2" rx="21" ry="10" transform="rotate(26 427.6 322.2)" fill="#ea3a44" fill-opacity="0.55" stroke="#ac1019" stroke-width="1.2" stroke-opacity="0.45"/><ellipse cx="437.5" cy="344.3" rx="21" ry="10" transform="rotate(32 437.5 344.3)" fill="#ea3a44" fill-opacity="0.55" stroke="#ac1019" stroke-width="1.2" stroke-opacity="0.45"/><ellipse cx="438.7" cy="370.6" rx="21" ry="10" transform="rotate(38 438.7 370.6)" fill="#ea3a44" fill-opacity="0.55" stroke="#ac1019" stroke-width="1.2" stroke-opacity="0.45"/><ellipse cx="444.1" cy="395.0" rx="21" ry="10" transform="rotate(41 444.1 395.0)" fill="#ea3a44" fill-opacity="0.55" stroke="#ac1019" stroke-width="1.2" stroke-opacity="0.45"/><ellipse cx="441.7" cy="418.8" rx="21" ry="10" transform="rotate(54 441.7 418.8)" fill="#ea3a44" fill-opacity="0.55" stroke="#ac1019" stroke-width="1.2" stroke-opacity="0.45"/><ellipse cx="447.3" cy="442.1" rx="21" ry="10" transform="rotate(49 447.3 442.1)" fill="#ea3a44" fill-opacity="0.55" stroke="#ac1019" stroke-width="1.2" stroke-opacity="0.45"/><ellipse cx="446.2" cy="470.7" rx="21" ry="10" transform="rotate(57 446.2 470.7)" fill="#e85c68" fill-opacity="0.95" stroke="#ac1019" stroke-width="1.2" stroke-opacity="0.45"/><ellipse cx="466.0" cy="299.8" rx="20" ry="10" transform="rotate(23 466.0 299.8)" fill="#ac1019" fill-opacity="0.95" stroke="#ac1019" stroke-width="1.2" stroke-opacity="0.45"/><ellipse cx="469.4" cy="325.9" rx="20" ry="10" transform="rotate(16 469.4 325.9)" fill="#e85c68" fill-opacity="0.95" stroke="#ac1019" stroke-width="1.2" stroke-opacity="0.45"/><ellipse cx="472.0" cy="351.7" rx="20" ry="10" transform="rotate(24 472.0 351.7)" fill="#e2141d" fill-opacity="0.55" stroke="#ac1019" stroke-width="1.2" stroke-opacity="0.45"/><ellipse cx="474.1" cy="372.3" rx="20" ry="10" transform="rotate(29 474.1 372.3)" fill="#ac1019" fill-opacity="0.95" stroke="#ac1019" stroke-width="1.2" stroke-opacity="0.45"/><ellipse cx="475.1" cy="398.4" rx="20" ry="10" transform="rotate(32 475.1 398.4)" fill="#ac1019" fill-opacity="0.95" stroke="#ac1019" stroke-width="1.2" stroke-opacity="0.45"/><ellipse cx="481.1" cy="419.4" rx="20" ry="10" transform="rotate(41 481.1 419.4)" fill="#e2141d" fill-opacity="0.55" stroke="#ac1019" stroke-width="1.2" stroke-opacity="0.45"/><ellipse cx="480.1" cy="445.0" rx="20" ry="10" transform="rotate(48 480.1 445.0)" fill="#e85c68" fill-opacity="0.95" stroke="#ac1019" stroke-width="1.2" stroke-opacity="0.45"/><ellipse cx="481.9" cy="470.7" rx="20" ry="10" transform="rotate(50 481.9 470.7)" fill="#e85c68" fill-opacity="0.95" stroke="#ac1019" stroke-width="1.2" stroke-opacity="0.45"/><ellipse cx="485.8" cy="494.6" rx="20" ry="10" transform="rotate(56 485.8 494.6)" fill="#e2141d" fill-opacity="0.55" stroke="#ac1019" stroke-width="1.2" stroke-opacity="0.45"/><ellipse cx="492.8" cy="518.0" rx="20" ry="10" transform="rotate(52 492.8 518.0)" fill="#e2141d" fill-opacity="0.55" stroke="#ac1019" stroke-width="1.2" stroke-opacity="0.45"/><ellipse cx="508.1" cy="329.7" rx="19" ry="9" transform="rotate(16 508.1 329.7)" fill="#e85c68" fill-opacity="0.95" stroke="#ac1019" stroke-width="1.2" stroke-opacity="0.45"/><ellipse cx="507.7" cy="355.0" rx="19" ry="9" transform="rotate(29 507.7 355.0)" fill="#ea3a44" fill-opacity="0.55" stroke="#ac1019" stroke-width="1.2" stroke-opacity="0.45"/><ellipse cx="507.5" cy="382.4" rx="19" ry="9" transform="rotate(34 507.5 382.4)" fill="#ea3a44" fill-opacity="0.55" stroke="#ac1019" stroke-width="1.2" stroke-opacity="0.45"/><ellipse cx="515.0" cy="409.7" rx="19" ry="9" transform="rotate(27 515.0 409.7)" fill="#e85c68" fill-opacity="0.95" stroke="#ac1019" stroke-width="1.2" stroke-opacity="0.45"/><ellipse cx="517.4" cy="436.1" rx="19" ry="9" transform="rotate(35 517.4 436.1)" fill="#ac1019" fill-opacity="0.95" stroke="#ac1019" stroke-width="1.2" stroke-opacity="0.45"/><ellipse cx="516.9" cy="463.8" rx="19" ry="9" transform="rotate(49 516.9 463.8)" fill="#e85c68" fill-opacity="0.95" stroke="#ac1019" stroke-width="1.2" stroke-opacity="0.45"/><ellipse cx="516.0" cy="493.9" rx="19" ry="9" transform="rotate(52 516.0 493.9)" fill="#ea3a44" fill-opacity="0.55" stroke="#ac1019" stroke-width="1.2" stroke-opacity="0.45"/><ellipse cx="522.0" cy="520.8" rx="19" ry="9" transform="rotate(57 522.0 520.8)" fill="#e85c68" fill-opacity="0.95" stroke="#ac1019" stroke-width="1.2" stroke-opacity="0.45"/><ellipse cx="527.0" cy="547.0" rx="19" ry="9" transform="rotate(58 527.0 547.0)" fill="#ea3a44" fill-opacity="0.55" stroke="#ac1019" stroke-width="1.2" stroke-opacity="0.45"/><ellipse cx="543.3" cy="369.0" rx="18" ry="9" transform="rotate(16 543.3 369.0)" fill="#e85c68" fill-opacity="0.95" stroke="#ac1019" stroke-width="1.2" stroke-opacity="0.45"/><ellipse cx="548.2" cy="393.7" rx="18" ry="9" transform="rotate(31 548.2 393.7)" fill="#e85c68" fill-opacity="0.95" stroke="#ac1019" stroke-width="1.2" stroke-opacity="0.45"/><ellipse cx="553.2" cy="421.2" rx="18" ry="9" transform="rotate(38 553.2 421.2)" fill="#e2141d" fill-opacity="0.55" stroke="#ac1019" stroke-width="1.2" stroke-opacity="0.45"/><ellipse cx="555.7" cy="445.5" rx="18" ry="9" transform="rotate(30 555.7 445.5)" fill="#e2141d" fill-opacity="0.55" stroke="#ac1019" stroke-width="1.2" stroke-opacity="0.45"/><ellipse cx="552.4" cy="468.8" rx="18" ry="9" transform="rotate(46 552.4 468.8)" fill="#e2141d" fill-opacity="0.55" stroke="#ac1019" stroke-width="1.2" stroke-opacity="0.45"/><ellipse cx="556.8" cy="497.6" rx="18" ry="9" transform="rotate(51 556.8 497.6)" fill="#ac1019" fill-opacity="0.95" stroke="#ac1019" stroke-width="1.2" stroke-opacity="0.45"/><ellipse cx="558.0" cy="522.2" rx="18" ry="9" transform="rotate(55 558.0 522.2)" fill="#e2141d" fill-opacity="0.55" stroke="#ac1019" stroke-width="1.2" stroke-opacity="0.45"/><ellipse cx="583.8" cy="398.2" rx="17" ry="9" transform="rotate(21 583.8 398.2)" fill="#ea3a44" fill-opacity="0.55" stroke="#ac1019" stroke-width="1.2" stroke-opacity="0.45"/><ellipse cx="585.7" cy="428.4" rx="17" ry="9" transform="rotate(38 585.7 428.4)" fill="#ea3a44" fill-opacity="0.55" stroke="#ac1019" stroke-width="1.2" stroke-opacity="0.45"/><ellipse cx="594.3" cy="450.4" rx="17" ry="9" transform="rotate(45 594.3 450.4)" fill="#ea3a44" fill-opacity="0.55" stroke="#ac1019" stroke-width="1.2" stroke-opacity="0.45"/><ellipse cx="591.4" cy="478.6" rx="17" ry="9" transform="rotate(51 591.4 478.6)" fill="#ea3a44" fill-opacity="0.55" stroke="#ac1019" stroke-width="1.2" stroke-opacity="0.45"/><path d="M318 292Q370 300 420 330Q440 350 455 372" stroke="#1c1a20" stroke-width="2.4" fill="none" opacity="0.75" stroke-linecap="round"/><path d="M300 236Q350 248 372 262" stroke="#1c1a20" stroke-width="2.4" fill="none" opacity="0.75" stroke-linecap="round"/><path d="M330 345Q380 340 420 360Q450 380 470 410" stroke="#1c1a20" stroke-width="2.4" fill="none" opacity="0.75" stroke-linecap="round"/><path d="M440 300Q470 310 480 330" stroke="#1c1a20" stroke-width="2.4" fill="none" opacity="0.75" stroke-linecap="round"/><path d="M450.0 258.0C466.0 264.7 465.3 260.7 500.0 286.0C534.7 311.3 520.0 305.0 554.0 334.0C588.0 363.0 587.3 357.7 602.0 373.0C616.7 388.3 616.0 390.0 598.0 380.0C580.0 370.0 582.0 370.7 548.0 343.0C514.0 315.3 528.0 322.7 496.0 297.0C464.0 271.3 467.3 279.0 452.0 266.0C436.7 253.0 434.0 251.3 450.0 258.0Z" fill="#e2141d" opacity="0.85"/></svg>
<div class="a " style="left:1px;top:1138px;width:2560px;height:5px;background:#465266;"></div>
<div class="a " style="left:1px;top:1145px;width:1392px;height:21px;background:#465266;"></div>
<div class="a t sb" style="left:6px;top:1146px;width:200px;height:21px;line-height:21px;text-align:left;font-size:12px;">Color Sliders</div>
<svg class="a" style="left:1354.5px;top:1150.0px" width="11" height="11" viewBox="0 0 11 11" fill="none" stroke="#e9ebee" stroke-width="1.5"><path d="M3.2 3.2V2.2Q3.2 1 4.4 1H8.8Q10 1 10 2.2V6.6Q10 7.8 8.8 7.8H7.8"/><rect x="1" y="3.3" width="6.7" height="6.7" rx="1.3"/></svg>
<svg class="a" style="left:1375.5px;top:1150.0px" width="11" height="11" viewBox="0 0 11 11" fill="none" stroke="#e9ebee" stroke-width="1.6" stroke-linecap="round"><path d="M1.2 1.2L9.8 9.8M9.8 1.2L1.2 9.8"/></svg>
<div class="a t sb" style="left:5px;top:1177px;width:100px;height:19px;line-height:19px;text-align:center;">Transmission</div>
<div class="a t sb" style="left:5px;top:1192px;width:100px;height:19px;line-height:19px;text-align:center;">Distance mm</div>
<div class="a t sb btn" style="left:10px;top:1215px;width:90px;height:19px;line-height:21px;background:#46536a;">Reorder Sliders</div>
<div class="a t sb btn" style="left:10px;top:1240px;width:90px;height:19px;line-height:21px;background:#46536a;">Invert Sliders</div>
<div class="a t sb" style="left:15px;top:1317px;width:80px;height:19px;line-height:19px;text-align:left;">Layer #</div>
<div class="a t sb" style="left:15px;top:1342px;width:80px;height:19px;line-height:19px;text-align:left;">Depth mm</div>
<div class="a " style="left:231px;top:1228px;width:16px;height:82px;background:linear-gradient(180deg,#fde9d6 0%,#f5c48a 9.9%,#e8801f 13.2%,#e0602a 16.5%,#d83a40 18.7%,#c8303c 23%,#a02a38 26%,#7a3038 30.3%,#5a3436 34%,#1f1c1e 36.5%,#1b1b1d 38.7%,#fff 39.5%,#fff 41%,#f8fafc 48.6%,#dde4ec 54.4%,#b4c2d4 61%,#8a9fbc 66.1%,#4a668f 69.4%,#274a7a 71.9%,#173c72 75.6%,#1b3460 78.1%,#1b1c20 79.6%,#1b1b1d 100%);border:1px solid #000;"></div>
<div class="a " style="left:249.0px;top:1193px;width:45px;height:26px;border:1px solid #46536a;border-radius:5px;box-sizing:border-box;"></div>
<div class="a " style="left:280.0px;top:1194px;width:1px;height:24px;background:#46536a;"></div>
<div class="a " style="left:280.0px;top:1206px;width:13px;height:1px;background:#2c3747;"></div>
<svg class="a" style="left:283.5px;top:1198.54px" width="7" height="4" viewBox="0 0 7 4"><path d="M0 4L3.5 0L7 4Z" fill="#46536a"/></svg>
<svg class="a" style="left:283.5px;top:1209.98px" width="7" height="4" viewBox="0 0 7 4"><path d="M0 0L3.5 4L7 0Z" fill="#46536a"/></svg>
<div class="a t rg" style="left:255.0px;top:1194px;width:25px;height:26px;line-height:26px;text-align:left;font-size:14.5px;letter-spacing:-0.3px;color:#dfe2e6;">0.3</div>
<div class="a " style="left:260.0px;top:1225px;width:23px;height:81px;border:1.3px solid #d9dde2;border-radius:5px;background:#1a222d;"></div>
<div class="a " style="left:268.0px;top:1227px;width:7px;height:58px;background:#000;"></div>
<div class="a " style="left:269.5px;top:1285px;width:4px;height:20px;background:#1e1e1e;"></div>
<div class="a " style="left:263.0px;top:1280.5px;width:17px;height:9.5px;background:#1e1e1e;border-radius:4.5px;border:1px solid #2c2c2c;"></div>
<div class="a " style="left:251.0px;top:1312px;width:40px;height:16px;background:#236b5a;border-radius:4px;"></div>
<div class="a t serif" style="left:251.0px;top:1312px;width:40px;height:16px;line-height:16px;text-align:center;color:#dfeae6;font-size:13.5px;">12</div>
<div class="a " style="left:251.0px;top:1334px;width:40px;height:18px;background:#1b1b1b;border:1px solid #6b7685;border-radius:3px;"></div>
<div class="a t rg" style="left:251.0px;top:1335px;width:40px;height:18px;line-height:18px;text-align:center;color:#fff;font-size:13.5px;letter-spacing:-0.7px;">0.6</div>
<div class="a " style="left:318.0px;top:1193px;width:45px;height:26px;border:1px solid #46536a;border-radius:5px;box-sizing:border-box;"></div>
<div class="a " style="left:349.0px;top:1194px;width:1px;height:24px;background:#46536a;"></div>
<div class="a " style="left:349.0px;top:1206px;width:13px;height:1px;background:#2c3747;"></div>
<svg class="a" style="left:352.5px;top:1198.54px" width="7" height="4" viewBox="0 0 7 4"><path d="M0 4L3.5 0L7 4Z" fill="#46536a"/></svg>
<svg class="a" style="left:352.5px;top:1209.98px" width="7" height="4" viewBox="0 0 7 4"><path d="M0 0L3.5 4L7 0Z" fill="#46536a"/></svg>
<div class="a t rg" style="left:324.0px;top:1194px;width:25px;height:26px;line-height:26px;text-align:left;font-size:14.5px;letter-spacing:-0.3px;color:#dfe2e6;">1.0</div>
<div class="a " style="left:329.0px;top:1225px;width:23px;height:81px;border:1.3px solid #d9dde2;border-radius:5px;background:#1a222d;"></div>
<div class="a " style="left:337.0px;top:1227px;width:7px;height:56px;background:#000;"></div>
<div class="a " style="left:338.5px;top:1283px;width:4px;height:22px;background:#0a2f82;"></div>
<div class="a " style="left:332.0px;top:1278.5px;width:17px;height:9.5px;background:#0a2f82;border-radius:4.5px;"></div>
<div class="a " style="left:320.0px;top:1312px;width:40px;height:16px;background:#236b5a;border-radius:4px;"></div>
<div class="a t serif" style="left:320.0px;top:1312px;width:40px;height:16px;line-height:16px;text-align:center;color:#dfeae6;font-size:13.5px;">14</div>
<div class="a " style="left:320.0px;top:1334px;width:40px;height:18px;background:#0a2f82;border:1px solid #6b7685;border-radius:3px;"></div>
<div class="a t rg" style="left:320.0px;top:1335px;width:40px;height:18px;line-height:18px;text-align:center;color:#fff;font-size:13.5px;letter-spacing:-0.7px;">0.68</div>
<div class="a " style="left:387.0px;top:1193px;width:45px;height:26px;border:1px solid #46536a;border-radius:5px;box-sizing:border-box;"></div>
<div class="a " style="left:418.0px;top:1194px;width:1px;height:24px;background:#46536a;"></div>
<div class="a " style="left:418.0px;top:1206px;width:13px;height:1px;background:#2c3747;"></div>
<svg class="a" style="left:421.5px;top:1198.54px" width="7" height="4" viewBox="0 0 7 4"><path d="M0 4L3.5 0L7 4Z" fill="#46536a"/></svg>
<svg class="a" style="left:421.5px;top:1209.98px" width="7" height="4" viewBox="0 0 7 4"><path d="M0 0L3.5 4L7 0Z" fill="#46536a"/></svg>
<div class="a t rg" style="left:393.0px;top:1194px;width:25px;height:26px;line-height:26px;text-align:left;font-size:14.5px;letter-spacing:-0.3px;color:#dfe2e6;">8.0</div>
<div class="a " style="left:398.0px;top:1225px;width:23px;height:81px;border:1.3px solid #d9dde2;border-radius:5px;background:#1a222d;"></div>
<div class="a " style="left:406.0px;top:1227px;width:7px;height:52px;background:#000;"></div>
<div class="a " style="left:407.5px;top:1279px;width:4px;height:26px;background:#464b52;"></div>
<div class="a " style="left:401.0px;top:1274.5px;width:17px;height:9.5px;background:#464b52;border-radius:4.5px;"></div>
<div class="a " style="left:389.0px;top:1312px;width:40px;height:16px;background:#236b5a;border-radius:4px;"></div>
<div class="a t serif" style="left:389.0px;top:1312px;width:40px;height:16px;line-height:16px;text-align:center;color:#dfeae6;font-size:13.5px;">17</div>
<div class="a " style="left:389.0px;top:1334px;width:40px;height:18px;background:#464b52;border:1px solid #6b7685;border-radius:3px;"></div>
<div class="a t rg" style="left:389.0px;top:1335px;width:40px;height:18px;line-height:18px;text-align:center;color:#fff;font-size:13.5px;letter-spacing:-0.7px;">0.8</div>
<div class="a " style="left:456.0px;top:1193px;width:45px;height:26px;border:1px solid #46536a;border-radius:5px;box-sizing:border-box;"></div>
<div class="a " style="left:487.0px;top:1194px;width:1px;height:24px;background:#46536a;"></div>
<div class="a " style="left:487.0px;top:1206px;width:13px;height:1px;background:#2c3747;"></div>
<svg class="a" style="left:490.5px;top:1198.54px" width="7" height="4" viewBox="0 0 7 4"><path d="M0 4L3.5 0L7 4Z" fill="#46536a"/></svg>
<svg class="a" style="left:490.5px;top:1209.98px" width="7" height="4" viewBox="0 0 7 4"><path d="M0 0L3.5 4L7 0Z" fill="#46536a"/></svg>
<div class="a t rg" style="left:462.0px;top:1194px;width:25px;height:26px;line-height:26px;text-align:left;font-size:14.5px;letter-spacing:-0.3px;color:#dfe2e6;">5.0</div>
<div class="a " style="left:467.0px;top:1225px;width:23px;height:81px;border:1.3px solid #d9dde2;border-radius:5px;background:#1a222d;"></div>
<div class="a " style="left:475.0px;top:1227px;width:7px;height:32px;background:#000;"></div>
<div class="a " style="left:476.5px;top:1259px;width:4px;height:46px;background:#ffffff;"></div>
<div class="a " style="left:470.0px;top:1254.5px;width:17px;height:9.5px;background:#ffffff;border-radius:4.5px;"></div>
<div class="a " style="left:458.0px;top:1312px;width:40px;height:16px;background:#236b5a;border-radius:4px;"></div>
<div class="a t serif" style="left:458.0px;top:1312px;width:40px;height:16px;line-height:16px;text-align:center;color:#dfeae6;font-size:13.5px;">33</div>
<div class="a " style="left:458.0px;top:1334px;width:40px;height:18px;background:#ffffff;border:1px solid #6b7685;border-radius:3px;"></div>
<div class="a t rg" style="left:458.0px;top:1335px;width:40px;height:18px;line-height:18px;text-align:center;color:#000;font-size:13.5px;letter-spacing:-0.7px;">1.44</div>
<div class="a " style="left:525.0px;top:1193px;width:45px;height:26px;border:1px solid #46536a;border-radius:5px;box-sizing:border-box;"></div>
<div class="a " style="left:556.0px;top:1194px;width:1px;height:24px;background:#46536a;"></div>
<div class="a " style="left:556.0px;top:1206px;width:13px;height:1px;background:#2c3747;"></div>
<svg class="a" style="left:559.5px;top:1198.54px" width="7" height="4" viewBox="0 0 7 4"><path d="M0 4L3.5 0L7 4Z" fill="#46536a"/></svg>
<svg class="a" style="left:559.5px;top:1209.98px" width="7" height="4" viewBox="0 0 7 4"><path d="M0 0L3.5 4L7 0Z" fill="#46536a"/></svg>
<div class="a t rg" style="left:531.0px;top:1194px;width:25px;height:26px;line-height:26px;text-align:left;font-size:14.5px;letter-spacing:-0.3px;color:#dfe2e6;">0.3</div>
<div class="a " style="left:536.0px;top:1225px;width:23px;height:81px;border:1.3px solid #d9dde2;border-radius:5px;background:#1a222d;"></div>
<div class="a " style="left:544.0px;top:1227px;width:7px;height:29px;background:#000;"></div>
<div class="a " style="left:545.5px;top:1256px;width:4px;height:49px;background:#1e1e1e;"></div>
<div class="a " style="left:539.0px;top:1251.5px;width:17px;height:9.5px;background:#1e1e1e;border-radius:4.5px;border:1px solid #2c2c2c;"></div>
<div class="a " style="left:527.0px;top:1312px;width:40px;height:16px;background:#236b5a;border-radius:4px;"></div>
<div class="a t serif" style="left:527.0px;top:1312px;width:40px;height:16px;line-height:16px;text-align:center;color:#dfeae6;font-size:13.5px;">35</div>
<div class="a " style="left:527.0px;top:1334px;width:40px;height:18px;background:#1b1b1b;border:1px solid #6b7685;border-radius:3px;"></div>
<div class="a t rg" style="left:527.0px;top:1335px;width:40px;height:18px;line-height:18px;text-align:center;color:#fff;font-size:13.5px;letter-spacing:-0.7px;">1.52</div>
<div class="a " style="left:594.0px;top:1193px;width:45px;height:26px;border:1px solid #46536a;border-radius:5px;box-sizing:border-box;"></div>
<div class="a " style="left:625.0px;top:1194px;width:1px;height:24px;background:#46536a;"></div>
<div class="a " style="left:625.0px;top:1206px;width:13px;height:1px;background:#2c3747;"></div>
<svg class="a" style="left:628.5px;top:1198.54px" width="7" height="4" viewBox="0 0 7 4"><path d="M0 4L3.5 0L7 4Z" fill="#46536a"/></svg>
<svg class="a" style="left:628.5px;top:1209.98px" width="7" height="4" viewBox="0 0 7 4"><path d="M0 0L3.5 4L7 0Z" fill="#46536a"/></svg>
<div class="a t rg" style="left:600.0px;top:1194px;width:25px;height:26px;line-height:26px;text-align:left;font-size:14.5px;letter-spacing:-0.3px;color:#dfe2e6;">4.0</div>
<div class="a " style="left:605.0px;top:1225px;width:23px;height:81px;border:1.3px solid #d9dde2;border-radius:5px;background:#1a222d;"></div>
<div class="a " style="left:613.0px;top:1227px;width:7px;height:21px;background:#000;"></div>
<div class="a " style="left:614.5px;top:1248px;width:4px;height:57px;background:#c1121c;"></div>
<div class="a " style="left:608.0px;top:1243.5px;width:17px;height:9.5px;background:#c1121c;border-radius:4.5px;"></div>
<div class="a " style="left:596.0px;top:1312px;width:40px;height:16px;background:#236b5a;border-radius:4px;"></div>
<div class="a t serif" style="left:596.0px;top:1312px;width:40px;height:16px;line-height:16px;text-align:center;color:#dfeae6;font-size:13.5px;">41</div>
<div class="a " style="left:596.0px;top:1334px;width:40px;height:18px;background:#c1121c;border:1px solid #6b7685;border-radius:3px;"></div>
<div class="a t rg" style="left:596.0px;top:1335px;width:40px;height:18px;line-height:18px;text-align:center;color:#fff;font-size:13.5px;letter-spacing:-0.7px;">1.76</div>
<div class="a " style="left:663.0px;top:1193px;width:45px;height:26px;border:1px solid #46536a;border-radius:5px;box-sizing:border-box;"></div>
<div class="a " style="left:694.0px;top:1194px;width:1px;height:24px;background:#46536a;"></div>
<div class="a " style="left:694.0px;top:1206px;width:13px;height:1px;background:#2c3747;"></div>
<svg class="a" style="left:697.5px;top:1198.54px" width="7" height="4" viewBox="0 0 7 4"><path d="M0 4L3.5 0L7 4Z" fill="#46536a"/></svg>
<svg class="a" style="left:697.5px;top:1209.98px" width="7" height="4" viewBox="0 0 7 4"><path d="M0 0L3.5 4L7 0Z" fill="#46536a"/></svg>
<div class="a t rg" style="left:669.0px;top:1194px;width:25px;height:26px;line-height:26px;text-align:left;font-size:14.5px;letter-spacing:-0.3px;color:#dfe2e6;">2.0</div>
<div class="a " style="left:674.0px;top:1225px;width:23px;height:81px;border:1.3px solid #d9dde2;border-radius:5px;background:#1a222d;"></div>
<div class="a " style="left:682.0px;top:1227px;width:7px;height:16px;background:#000;"></div>
<div class="a " style="left:683.5px;top:1243px;width:4px;height:62px;background:#e04040;"></div>
<div class="a " style="left:677.0px;top:1238.5px;width:17px;height:9.5px;background:#e04040;border-radius:4.5px;"></div>
<div class="a " style="left:665.0px;top:1312px;width:40px;height:16px;background:#236b5a;border-radius:4px;"></div>
<div class="a t serif" style="left:665.0px;top:1312px;width:40px;height:16px;line-height:16px;text-align:center;color:#dfeae6;font-size:13.5px;">45</div>
<div class="a " style="left:665.0px;top:1334px;width:40px;height:18px;background:#e04040;border:1px solid #6b7685;border-radius:3px;"></div>
<div class="a t rg" style="left:665.0px;top:1335px;width:40px;height:18px;line-height:18px;text-align:center;color:#1a1a1a;font-size:13.5px;letter-spacing:-0.7px;">1.92</div>
<div class="a " style="left:732.0px;top:1193px;width:45px;height:26px;border:1px solid #46536a;border-radius:5px;box-sizing:border-box;"></div>
<div class="a " style="left:763.0px;top:1194px;width:1px;height:24px;background:#46536a;"></div>
<div class="a " style="left:763.0px;top:1206px;width:13px;height:1px;background:#2c3747;"></div>
<svg class="a" style="left:766.5px;top:1198.54px" width="7" height="4" viewBox="0 0 7 4"><path d="M0 4L3.5 0L7 4Z" fill="#46536a"/></svg>
<svg class="a" style="left:766.5px;top:1209.98px" width="7" height="4" viewBox="0 0 7 4"><path d="M0 0L3.5 4L7 0Z" fill="#46536a"/></svg>
<div class="a t rg" style="left:738.0px;top:1194px;width:25px;height:26px;line-height:26px;text-align:left;font-size:14.5px;letter-spacing:-0.3px;color:#dfe2e6;">3.5</div>
<div class="a " style="left:743.0px;top:1225px;width:23px;height:81px;border:1.3px solid #d9dde2;border-radius:5px;background:#1a222d;"></div>
<div class="a " style="left:751.0px;top:1227px;width:7px;height:13px;background:#000;"></div>
<div class="a " style="left:752.5px;top:1240px;width:4px;height:65px;background:#f5b90f;"></div>
<div class="a " style="left:746.0px;top:1235.5px;width:17px;height:9.5px;background:#f5b90f;border-radius:4.5px;"></div>
<div class="a " style="left:734.0px;top:1312px;width:40px;height:16px;background:#236b5a;border-radius:4px;"></div>
<div class="a t serif" style="left:734.0px;top:1312px;width:40px;height:16px;line-height:16px;text-align:center;color:#dfeae6;font-size:13.5px;">48</div>
<div class="a " style="left:734.0px;top:1334px;width:40px;height:18px;background:#f5b90f;border:1px solid #6b7685;border-radius:3px;"></div>
<div class="a t rg" style="left:734.0px;top:1335px;width:40px;height:18px;line-height:18px;text-align:center;color:#111;font-size:13.5px;letter-spacing:-0.7px;">2.04</div>
<div class="a " style="left:801.0px;top:1193px;width:45px;height:26px;border:1px solid #46536a;border-radius:5px;box-sizing:border-box;"></div>
<div class="a " style="left:832.0px;top:1194px;width:1px;height:24px;background:#46536a;"></div>
<div class="a " style="left:832.0px;top:1206px;width:13px;height:1px;background:#2c3747;"></div>
<svg class="a" style="left:835.5px;top:1198.54px" width="7" height="4" viewBox="0 0 7 4"><path d="M0 4L3.5 0L7 4Z" fill="#46536a"/></svg>
<svg class="a" style="left:835.5px;top:1209.98px" width="7" height="4" viewBox="0 0 7 4"><path d="M0 0L3.5 4L7 0Z" fill="#46536a"/></svg>
<div class="a t rg" style="left:807.0px;top:1194px;width:25px;height:26px;line-height:26px;text-align:left;font-size:14.5px;letter-spacing:-0.3px;color:#dfe2e6;">4.0</div>
<div class="a " style="left:812.0px;top:1225px;width:23px;height:81px;border:1.3px solid #d9dde2;border-radius:5px;background:#1a222d;"></div>
<div class="a " style="left:820.0px;top:1227px;width:7px;height:5px;background:#000;"></div>
<div class="a " style="left:821.5px;top:1232px;width:4px;height:73px;background:#ffffff;"></div>
<div class="a " style="left:815.0px;top:1227.5px;width:17px;height:9.5px;background:#ffffff;border-radius:4.5px;"></div>
<div class="a " style="left:803.0px;top:1312px;width:40px;height:16px;background:#236b5a;border-radius:4px;"></div>
<div class="a t serif" style="left:803.0px;top:1312px;width:40px;height:16px;line-height:16px;text-align:center;color:#dfeae6;font-size:13.5px;">54</div>
<div class="a " style="left:803.0px;top:1334px;width:40px;height:18px;background:#ffffff;border:1px solid #6b7685;border-radius:3px;"></div>
<div class="a t rg" style="left:803.0px;top:1335px;width:40px;height:18px;line-height:18px;text-align:center;color:#000;font-size:13.5px;letter-spacing:-0.7px;">2.24</div>
<div class="a " style="left:870.0px;top:1193px;width:45px;height:26px;border:1px solid #46536a;border-radius:5px;box-sizing:border-box;"></div>
<div class="a " style="left:901.0px;top:1194px;width:1px;height:24px;background:#46536a;"></div>
<div class="a " style="left:901.0px;top:1206px;width:13px;height:1px;background:#2c3747;"></div>
<svg class="a" style="left:904.5px;top:1198.54px" width="7" height="4" viewBox="0 0 7 4"><path d="M0 4L3.5 0L7 4Z" fill="#46536a"/></svg>
<svg class="a" style="left:904.5px;top:1209.98px" width="7" height="4" viewBox="0 0 7 4"><path d="M0 0L3.5 4L7 0Z" fill="#46536a"/></svg>
<div class="a t rg" style="left:876.0px;top:1194px;width:25px;height:26px;line-height:26px;text-align:left;font-size:14.5px;letter-spacing:-0.3px;color:#dfe2e6;">5.0</div>
<div class="a " style="left:881.0px;top:1225px;width:23px;height:81px;border:1.3px solid #d9dde2;border-radius:5px;background:#1a222d;"></div>
<div class="a " style="left:889.0px;top:1227px;width:7px;height:72px;background:#000;"></div>
<div class="a " style="left:884.0px;top:1294.5px;width:17px;height:9.5px;background:#ffffff;border-radius:4.5px;"></div>
<div class="a " style="left:872.0px;top:1312px;width:40px;height:16px;background:#236b5a;border-radius:4px;"></div>
<div class="a t serif" style="left:872.0px;top:1312px;width:40px;height:16px;line-height:16px;text-align:center;color:#dfeae6;font-size:13.5px;">0</div>
<div class="a t serif" style="left:872.0px;top:1334px;width:40px;height:18px;line-height:18px;text-align:center;color:#e6e8ea;font-size:14px;">0</div>
<div class="a " style="left:939.0px;top:1193px;width:45px;height:26px;border:1px solid #46536a;border-radius:5px;box-sizing:border-box;"></div>
<div class="a " style="left:970.0px;top:1194px;width:1px;height:24px;background:#46536a;"></div>
<div class="a " style="left:970.0px;top:1206px;width:13px;height:1px;background:#2c3747;"></div>
<svg class="a" style="left:973.5px;top:1198.54px" width="7" height="4" viewBox="0 0 7 4"><path d="M0 4L3.5 0L7 4Z" fill="#46536a"/></svg>
<svg class="a" style="left:973.5px;top:1209.98px" width="7" height="4" viewBox="0 0 7 4"><path d="M0 0L3.5 4L7 0Z" fill="#46536a"/></svg>
<div class="a t rg" style="left:945.0px;top:1194px;width:25px;height:26px;line-height:26px;text-align:left;font-size:14.5px;letter-spacing:-0.3px;color:#dfe2e6;">5.0</div>
<div class="a " style="left:950.0px;top:1225px;width:23px;height:81px;border:1.3px solid #d9dde2;border-radius:5px;background:#1a222d;"></div>
<div class="a " style="left:958.0px;top:1227px;width:7px;height:72px;background:#000;"></div>
<div class="a " style="left:953.0px;top:1294.5px;width:17px;height:9.5px;background:#ffffff;border-radius:4.5px;"></div>
<div class="a " style="left:941.0px;top:1312px;width:40px;height:16px;background:#236b5a;border-radius:4px;"></div>
<div class="a t serif" style="left:941.0px;top:1312px;width:40px;height:16px;line-height:16px;text-align:center;color:#dfeae6;font-size:13.5px;">0</div>
<div class="a t serif" style="left:941.0px;top:1334px;width:40px;height:18px;line-height:18px;text-align:center;color:#e6e8ea;font-size:14px;">0</div>
<div class="a " style="left:1008.0px;top:1193px;width:45px;height:26px;border:1px solid #46536a;border-radius:5px;box-sizing:border-box;"></div>
<div class="a " style="left:1039.0px;top:1194px;width:1px;height:24px;background:#46536a;"></div>
<div class="a " style="left:1039.0px;top:1206px;width:13px;height:1px;background:#2c3747;"></div>
<svg class="a" style="left:1042.5px;top:1198.54px" width="7" height="4" viewBox="0 0 7 4"><path d="M0 4L3.5 0L7 4Z" fill="#46536a"/></svg>
<svg class="a" style="left:1042.5px;top:1209.98px" width="7" height="4" viewBox="0 0 7 4"><path d="M0 0L3.5 4L7 0Z" fill="#46536a"/></svg>
<div class="a t rg" style="left:1014.0px;top:1194px;width:25px;height:26px;line-height:26px;text-align:left;font-size:14.5px;letter-spacing:-0.3px;color:#dfe2e6;">5.0</div>
<div class="a " style="left:1019.0px;top:1225px;width:23px;height:81px;border:1.3px solid #d9dde2;border-radius:5px;background:#1a222d;"></div>
<div class="a " style="left:1027.0px;top:1227px;width:7px;height:72px;background:#000;"></div>
<div class="a " style="left:1022.0px;top:1294.5px;width:17px;height:9.5px;background:#ffffff;border-radius:4.5px;"></div>
<div class="a " style="left:1010.0px;top:1312px;width:40px;height:16px;background:#236b5a;border-radius:4px;"></div>
<div class="a t serif" style="left:1010.0px;top:1312px;width:40px;height:16px;line-height:16px;text-align:center;color:#dfeae6;font-size:13.5px;">0</div>
<div class="a t serif" style="left:1010.0px;top:1334px;width:40px;height:18px;line-height:18px;text-align:center;color:#e6e8ea;font-size:14px;">0</div>
<div class="a " style="left:1077.0px;top:1193px;width:45px;height:26px;border:1px solid #46536a;border-radius:5px;box-sizing:border-box;"></div>
<div class="a " style="left:1108.0px;top:1194px;width:1px;height:24px;background:#46536a;"></div>
<div class="a " style="left:1108.0px;top:1206px;width:13px;height:1px;background:#2c3747;"></div>
<svg class="a" style="left:1111.5px;top:1198.54px" width="7" height="4" viewBox="0 0 7 4"><path d="M0 4L3.5 0L7 4Z" fill="#46536a"/></svg>
<svg class="a" style="left:1111.5px;top:1209.98px" width="7" height="4" viewBox="0 0 7 4"><path d="M0 0L3.5 4L7 0Z" fill="#46536a"/></svg>
<div class="a t rg" style="left:1083.0px;top:1194px;width:25px;height:26px;line-height:26px;text-align:left;font-size:14.5px;letter-spacing:-0.3px;color:#dfe2e6;">5.0</div>
<div class="a " style="left:1088.0px;top:1225px;width:23px;height:81px;border:1.3px solid #d9dde2;border-radius:5px;background:#1a222d;"></div>
<div class="a " style="left:1096.0px;top:1227px;width:7px;height:72px;background:#000;"></div>
<div class="a " style="left:1091.0px;top:1294.5px;width:17px;height:9.5px;background:#ffffff;border-radius:4.5px;"></div>
<div class="a " style="left:1079.0px;top:1312px;width:40px;height:16px;background:#236b5a;border-radius:4px;"></div>
<div class="a t serif" style="left:1079.0px;top:1312px;width:40px;height:16px;line-height:16px;text-align:center;color:#dfeae6;font-size:13.5px;">0</div>
<div class="a t serif" style="left:1079.0px;top:1334px;width:40px;height:18px;line-height:18px;text-align:center;color:#e6e8ea;font-size:14px;">0</div>
<div class="a " style="left:1146.0px;top:1193px;width:45px;height:26px;border:1px solid #46536a;border-radius:5px;box-sizing:border-box;"></div>
<div class="a " style="left:1177.0px;top:1194px;width:1px;height:24px;background:#46536a;"></div>
<div class="a " style="left:1177.0px;top:1206px;width:13px;height:1px;background:#2c3747;"></div>
<svg class="a" style="left:1180.5px;top:1198.54px" width="7" height="4" viewBox="0 0 7 4"><path d="M0 4L3.5 0L7 4Z" fill="#46536a"/></svg>
<svg class="a" style="left:1180.5px;top:1209.98px" width="7" height="4" viewBox="0 0 7 4"><path d="M0 0L3.5 4L7 0Z" fill="#46536a"/></svg>
<div class="a t rg" style="left:1152.0px;top:1194px;width:25px;height:26px;line-height:26px;text-align:left;font-size:14.5px;letter-spacing:-0.3px;color:#dfe2e6;">5.0</div>
<div class="a " style="left:1157.0px;top:1225px;width:23px;height:81px;border:1.3px solid #d9dde2;border-radius:5px;background:#1a222d;"></div>
<div class="a " style="left:1165.0px;top:1227px;width:7px;height:72px;background:#000;"></div>
<div class="a " style="left:1160.0px;top:1294.5px;width:17px;height:9.5px;background:#ffffff;border-radius:4.5px;"></div>
<div class="a " style="left:1148.0px;top:1312px;width:40px;height:16px;background:#236b5a;border-radius:4px;"></div>
<div class="a t serif" style="left:1148.0px;top:1312px;width:40px;height:16px;line-height:16px;text-align:center;color:#dfeae6;font-size:13.5px;">0</div>
<div class="a t serif" style="left:1148.0px;top:1334px;width:40px;height:18px;line-height:18px;text-align:center;color:#e6e8ea;font-size:14px;">0</div>
<div class="a " style="left:1215.0px;top:1193px;width:45px;height:26px;border:1px solid #46536a;border-radius:5px;box-sizing:border-box;"></div>
<div class="a " style="left:1246.0px;top:1194px;width:1px;height:24px;background:#46536a;"></div>
<div class="a " style="left:1246.0px;top:1206px;width:13px;height:1px;background:#2c3747;"></div>
<svg class="a" style="left:1249.5px;top:1198.54px" width="7" height="4" viewBox="0 0 7 4"><path d="M0 4L3.5 0L7 4Z" fill="#46536a"/></svg>
<svg class="a" style="left:1249.5px;top:1209.98px" width="7" height="4" viewBox="0 0 7 4"><path d="M0 0L3.5 4L7 0Z" fill="#46536a"/></svg>
<div class="a t rg" style="left:1221.0px;top:1194px;width:25px;height:26px;line-height:26px;text-align:left;font-size:14.5px;letter-spacing:-0.3px;color:#dfe2e6;">5.0</div>
<div class="a " style="left:1226.0px;top:1225px;width:23px;height:81px;border:1.3px solid #d9dde2;border-radius:5px;background:#1a222d;"></div>
<div class="a " style="left:1234.0px;top:1227px;width:7px;height:72px;background:#000;"></div>
<div class="a " style="left:1229.0px;top:1294.5px;width:17px;height:9.5px;background:#ffffff;border-radius:4.5px;"></div>
<div class="a " style="left:1217.0px;top:1312px;width:40px;height:16px;background:#236b5a;border-radius:4px;"></div>
<div class="a t serif" style="left:1217.0px;top:1312px;width:40px;height:16px;line-height:16px;text-align:center;color:#dfeae6;font-size:13.5px;">0</div>
<div class="a t serif" style="left:1217.0px;top:1334px;width:40px;height:18px;line-height:18px;text-align:center;color:#e6e8ea;font-size:14px;">0</div>
<div class="a " style="left:1284.0px;top:1193px;width:45px;height:26px;border:1px solid #46536a;border-radius:5px;box-sizing:border-box;"></div>
<div class="a " style="left:1315.0px;top:1194px;width:1px;height:24px;background:#46536a;"></div>
<div class="a " style="left:1315.0px;top:1206px;width:13px;height:1px;background:#2c3747;"></div>
<svg class="a" style="left:1318.5px;top:1198.54px" width="7" height="4" viewBox="0 0 7 4"><path d="M0 4L3.5 0L7 4Z" fill="#46536a"/></svg>
<svg class="a" style="left:1318.5px;top:1209.98px" width="7" height="4" viewBox="0 0 7 4"><path d="M0 0L3.5 4L7 0Z" fill="#46536a"/></svg>
<div class="a t rg" style="left:1290.0px;top:1194px;width:25px;height:26px;line-height:26px;text-align:left;font-size:14.5px;letter-spacing:-0.3px;color:#dfe2e6;">5.0</div>
<div class="a " style="left:1295.0px;top:1225px;width:23px;height:81px;border:1.3px solid #d9dde2;border-radius:5px;background:#1a222d;"></div>
<div class="a " style="left:1303.0px;top:1227px;width:7px;height:72px;background:#000;"></div>
<div class="a " style="left:1298.0px;top:1294.5px;width:17px;height:9.5px;background:#ffffff;border-radius:4.5px;"></div>
<div class="a " style="left:1286.0px;top:1312px;width:40px;height:16px;background:#236b5a;border-radius:4px;"></div>
<div class="a t serif" style="left:1286.0px;top:1312px;width:40px;height:16px;line-height:16px;text-align:center;color:#dfeae6;font-size:13.5px;">0</div>
<div class="a t serif" style="left:1286.0px;top:1334px;width:40px;height:18px;line-height:18px;text-align:center;color:#e6e8ea;font-size:14px;">0</div>
<div class="a " style="left:1353px;top:1175px;width:30px;height:26px;background:#232f42;border-radius:5px;"></div>
<div class="a t rg" style="left:1353px;top:1179px;width:30px;height:26px;line-height:26px;text-align:center;color:#2c3647;font-size:13px;">+</div>
<div class="a " style="left:1353px;top:1338px;width:30px;height:26px;background:#232f42;border-radius:5px;"></div>
<div class="a t rg" style="left:1353px;top:1341px;width:30px;height:26px;line-height:26px;text-align:center;color:#2c3647;font-size:13px;">-</div>
<div class="a " style="left:1394px;top:1145px;width:4px;height:234px;background:#465266;"></div>
<div class="a " style="left:1401px;top:1146px;width:1159px;height:20px;background:#465266;"></div>
<div class="a t sb" style="left:1406px;top:1146px;width:200px;height:21px;line-height:21px;text-align:left;font-size:12px;">Model Geometry</div>
<svg class="a" style="left:2523.5px;top:1150.0px" width="11" height="11" viewBox="0 0 11 11" fill="none" stroke="#e9ebee" stroke-width="1.5"><path d="M3.2 3.2V2.2Q3.2 1 4.4 1H8.8Q10 1 10 2.2V6.6Q10 7.8 8.8 7.8H7.8"/><rect x="1" y="3.3" width="6.7" height="6.7" rx="1.3"/></svg>
<svg class="a" style="left:2544.5px;top:1150.0px" width="11" height="11" viewBox="0 0 11 11" fill="none" stroke="#e9ebee" stroke-width="1.6" stroke-linecap="round"><path d="M1.2 1.2L9.8 9.8M9.8 1.2L1.2 9.8"/></svg>
<div class="a t sb" style="left:1380.5px;top:1182px;width:150px;height:19px;line-height:19px;text-align:center;">Min Depth</div>
<div class="a t sb" style="left:1380.5px;top:1211px;width:150px;height:19px;line-height:19px;text-align:center;">Max Depth</div>
<div class="a t sb" style="left:1380.5px;top:1235px;width:150px;height:19px;line-height:19px;text-align:center;">Actual Depth</div>
<div class="a t sb" style="left:1380.5px;top:1290px;width:150px;height:19px;line-height:19px;text-align:center;">Image Format</div>
<div class="a t sb" style="left:1380.5px;top:1319px;width:150px;height:19px;line-height:19px;text-align:center;">Spike Removal</div>
<div class="a " style="left:1513px;top:1179px;width:83px;height:23px;border:1px solid #46536a;border-radius:5px;box-sizing:border-box;"></div>
<div class="a " style="left:1582px;top:1180px;width:1px;height:21px;background:#46536a;"></div>
<div class="a " style="left:1582px;top:1190px;width:13px;height:1px;background:#2c3747;"></div>
<svg class="a" style="left:1585.5px;top:1183.67px" width="7" height="4" viewBox="0 0 7 4"><path d="M0 4L3.5 0L7 4Z" fill="#46536a"/></svg>
<svg class="a" style="left:1585.5px;top:1193.79px" width="7" height="4" viewBox="0 0 7 4"><path d="M0 0L3.5 4L7 0Z" fill="#46536a"/></svg>
<div class="a t sb" style="left:1520px;top:1180px;width:62px;height:23px;line-height:23px;text-align:left;">0.48</div>
<div class="a " style="left:1513px;top:1208px;width:83px;height:23px;border:1px solid #46536a;border-radius:5px;box-sizing:border-box;"></div>
<div class="a " style="left:1582px;top:1209px;width:1px;height:21px;background:#46536a;"></div>
<div class="a " style="left:1582px;top:1219px;width:13px;height:1px;background:#2c3747;"></div>
<svg class="a" style="left:1585.5px;top:1212.67px" width="7" height="4" viewBox="0 0 7 4"><path d="M0 4L3.5 0L7 4Z" fill="#46536a"/></svg>
<svg class="a" style="left:1585.5px;top:1222.79px" width="7" height="4" viewBox="0 0 7 4"><path d="M0 0L3.5 4L7 0Z" fill="#46536a"/></svg>
<div class="a t sb" style="left:1520px;top:1209px;width:62px;height:23px;line-height:23px;text-align:left;">2.24</div>
<div class="a t sb" style="left:1479px;top:1235px;width:150px;height:19px;line-height:19px;text-align:center;">2.28</div>
<div class="a t sb btn" style="left:1599px;top:1181px;width:87px;height:19px;line-height:21px;background:#46536a;">sRGB</div>
<div class="a t sb btn" style="left:1599px;top:1210px;width:87px;height:19px;line-height:21px;background:#46536a;letter-spacing:-0.25px;">Unbias Lighting</div>
<div class="a " style="left:1403px;top:1256px;width:107px;height:26px;border:1px solid #46536a;border-radius:5px;box-sizing:border-box;"></div>
<div class="a " style="left:1496px;top:1257px;width:1px;height:24px;background:#46536a;"></div>
<svg class="a" style="left:1499.5px;top:1267.0px" width="7" height="4" viewBox="0 0 7 4"><path d="M0 0L3.5 4L7 0Z" fill="#46536a"/></svg>
<div class="a t sb" style="left:1408px;top:1257px;width:88px;height:26px;line-height:26px;text-align:left;letter-spacing:-0.1px;">Dynamic Depth</div>
<div class="a " style="left:1513px;top:1285px;width:83px;height:26px;border:1px solid #46536a;border-radius:5px;box-sizing:border-box;"></div>
<div class="a " style="left:1582px;top:1286px;width:1px;height:24px;background:#46536a;"></div>
<svg class="a" style="left:1585.5px;top:1296.0px" width="7" height="4" viewBox="0 0 7 4"><path d="M0 0L3.5 4L7 0Z" fill="#46536a"/></svg>
<div class="a t sb" style="left:1518px;top:1286px;width:64px;height:26px;line-height:26px;text-align:left;">Color</div>
<div class="a t sb btn" style="left:1599px;top:1288px;width:87px;height:19px;line-height:21px;background:#46536a;">Legacy</div>
<div class="a " style="left:1513px;top:1314px;width:83px;height:26px;border:1px solid #46536a;border-radius:5px;box-sizing:border-box;"></div>
<div class="a " style="left:1582px;top:1315px;width:1px;height:24px;background:#46536a;"></div>
<svg class="a" style="left:1585.5px;top:1325.0px" width="7" height="4" viewBox="0 0 7 4"><path d="M0 0L3.5 4L7 0Z" fill="#46536a"/></svg>
<div class="a t sb" style="left:1518px;top:1315px;width:64px;height:26px;line-height:26px;text-align:left;">Fast</div>
<div class="a t sb" style="left:1567.5px;top:1319px;width:150px;height:19px;line-height:19px;text-align:center;">Adjust Amount</div>
<div class="a " style="left:1599px;top:1343px;width:87px;height:26px;border:1px solid #46536a;border-radius:5px;box-sizing:border-box;"></div>
<div class="a " style="left:1672px;top:1344px;width:1px;height:24px;background:#46536a;"></div>
<svg class="a" style="left:1675.5px;top:1354.0px" width="7" height="4" viewBox="0 0 7 4"><path d="M0 0L3.5 4L7 0Z" fill="#46536a"/></svg>
<div class="a t sb" style="left:1604px;top:1344px;width:68px;height:26px;line-height:26px;text-align:left;">Medium</div>
<div class="a t sb" style="left:1694px;top:1182px;width:100px;height:19px;line-height:19px;text-align:left;">Brightness Comp</div>
<div class="a " style="left:1797px;top:1176px;width:238px;height:26px;border:1px solid #46536a;border-radius:5px;box-sizing:border-box;"></div>
<div class="a " style="left:2021px;top:1177px;width:1px;height:24px;background:#46536a;"></div>
<svg class="a" style="left:2024.5px;top:1187.0px" width="7" height="4" viewBox="0 0 7 4"><path d="M0 0L3.5 4L7 0Z" fill="#46536a"/></svg>
<div class="a t sb" style="left:1802px;top:1177px;width:219px;height:26px;line-height:26px;text-align:left;">Standard</div>
<div class="a t sb" style="left:1802px;top:1221px;width:40px;height:19px;line-height:19px;text-align:left;color:#364457;text-shadow:none;">Power</div>
<div class="a " style="left:1846px;top:1226.0px;width:156px;height:6px;background:#46536a;"></div>
<div class="a " style="left:1846px;top:1226.0px;width:22px;height:6px;background:#2f4f72;"></div>
<div class="a " style="left:1863.5px;top:1220.0px;width:9px;height:18px;background:#8a98aa;border-radius:3px;border:1px solid #5d6f87;box-sizing:border-box;"></div>
<div class="a t sb" style="left:2004px;top:1221px;width:30px;height:19px;line-height:19px;text-align:center;color:#364457;text-shadow:none;">2.0</div>
<svg class="a" style="left:2040px;top:1181px" width="66" height="66" viewBox="0 0 66 66">
<defs><linearGradient id="cg" x1="0" x2="1" y1="0" y2="0"><stop offset="0.05" stop-color="#000"/><stop offset="0.95" stop-color="#fff"/></linearGradient></defs>
<rect x="0" y="0" width="66" height="66" fill="#000"/>
<rect x="2" y="2" width="62" height="62" rx="9" fill="url(#cg)" stroke="#6e6e6e" stroke-width="2.4"/>
<path d="M3 63L63 3" stroke="#f00" stroke-width="2.2"/>
<circle cx="3" cy="63" r="1.6" fill="#fff"/><circle cx="63" cy="3" r="1.6" fill="#fff"/>
</svg>
<div class="a t sb" style="left:2055px;top:1182px;width:150px;height:19px;line-height:19px;text-align:center;">0.51</div>
<div class="a t sb" style="left:2055px;top:1290px;width:150px;height:19px;line-height:19px;text-align:center;">0.49</div>
<div class="a " style="left:2127px;top:1208px;width:6px;height:74px;background:#46536a;"></div>
<div class="a " style="left:2127px;top:1244px;width:6px;height:38px;background:#36699b;"></div>
<div class="a " style="left:2120px;top:1239.5px;width:20px;height:9.5px;background:#8493a6;border:1px solid #5d6f87;border-radius:4px;"></div>
<div class="a t sb" style="left:1815px;top:1261px;width:60px;height:19px;line-height:19px;text-align:left;">Tolerance</div>
<div class="a " style="left:1870.5px;top:1265.5px;width:99px;height:6px;background:#46536a;"></div>
<div class="a " style="left:1870.5px;top:1265.5px;width:23.5px;height:6px;background:#36699b;"></div>
<div class="a " style="left:1889.5px;top:1259.5px;width:9px;height:18px;background:#8493a6;border-radius:3px;border:1px solid #5d6f87;box-sizing:border-box;"></div>
<div class="a t sb" style="left:1912.5px;top:1260.5px;width:150px;height:19px;line-height:19px;text-align:center;">52</div>
<div class="a t sb btn" style="left:2000px;top:1259.5px;width:45px;height:19px;line-height:21px;background:#46536a;">Invert</div>
<div class="a t sb btn" style="left:2044px;top:1259.5px;width:51px;height:19px;line-height:21px;background:#46536a;">Strict</div>
<div class="a t sb" style="left:1666.5px;top:1289px;width:150px;height:19px;line-height:19px;text-align:center;">Luminance</div>
<div class="a " style="left:1797px;top:1285px;width:131px;height:26px;border:1px solid #46536a;border-radius:5px;box-sizing:border-box;"></div>
<div class="a " style="left:1914px;top:1286px;width:1px;height:24px;background:#46536a;"></div>
<svg class="a" style="left:1917.5px;top:1296.0px" width="7" height="4" viewBox="0 0 7 4"><path d="M0 0L3.5 4L7 0Z" fill="#46536a"/></svg>
<div class="a t sb" style="left:1802px;top:1286px;width:112px;height:26px;line-height:26px;text-align:left;">Color Pop</div>
<div class="a t sb" style="left:1936.5px;top:1290px;width:60px;height:19px;line-height:19px;text-align:left;">Extra Gap</div>
<div class="a " style="left:1996px;top:1295.0px;width:84px;height:6px;background:#46536a;"></div>
<div class="a " style="left:1996px;top:1295.0px;width:17px;height:6px;background:#36699b;"></div>
<div class="a " style="left:2008.5px;top:1289.0px;width:9px;height:18px;background:#8493a6;border-radius:3px;border:1px solid #5d6f87;box-sizing:border-box;"></div>
<div class="a t sb" style="left:2024px;top:1290px;width:150px;height:19px;line-height:19px;text-align:center;">3</div>
<div class="a t sb" style="left:1666.5px;top:1319px;width:150px;height:19px;line-height:19px;text-align:center;">Smoothing</div>
<div class="a " style="left:1797px;top:1324.0px;width:311px;height:6px;background:#46536a;"></div>
<div class="a " style="left:1798.5px;top:1318.0px;width:9px;height:18px;background:#8493a6;border-radius:3px;border:1px solid #5d6f87;box-sizing:border-box;"></div>
<div class="a t sb" style="left:2054.5px;top:1319px;width:150px;height:19px;line-height:19px;text-align:center;">0</div>
<div class="a t sb" style="left:1694px;top:1348px;width:100px;height:19px;line-height:19px;text-align:left;letter-spacing:-0.1px;">Brightness Adjust</div>
<div class="a " style="left:1797px;top:1348px;width:311px;height:16px;background:linear-gradient(90deg,#000 0%,#fff 100%);"></div>
<div class="a " style="left:1797px;top:1353px;width:311px;height:6px;background:#46536a;"></div>
<div class="a " style="left:1797px;top:1353px;width:154px;height:6px;background:#36699b;"></div>
<div class="a " style="left:1947px;top:1347px;width:9px;height:18px;background:#8493a6;border:1px solid #5d6f87;border-radius:3px;"></div>
<div class="a t sb" style="left:2053px;top:1347.5px;width:150px;height:19px;line-height:19px;text-align:center;">-0.01</div>
<div class="a " style="left:1px;top:1379px;width:2560px;height:21px;background:#465266;"></div>
</body></html>
